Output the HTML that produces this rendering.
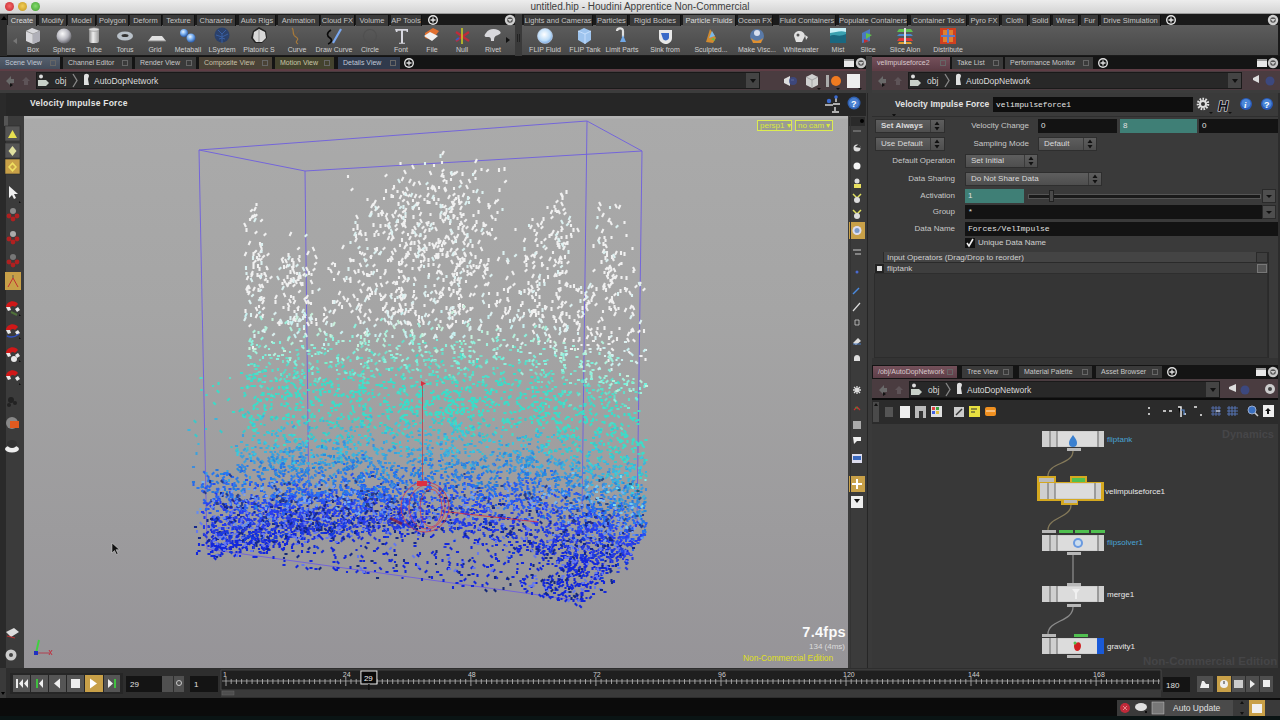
<!DOCTYPE html>
<html><head><meta charset="utf-8">
<style>
*{margin:0;padding:0;box-sizing:border-box}
html,body{width:1280px;height:720px;overflow:hidden;background:#0c0c0c;font-family:"Liberation Sans",sans-serif;}
.a{position:absolute}
svg{position:absolute}
#title{left:0;top:0;width:1280px;height:14px;background:linear-gradient(#ededed,#d4d4d4);border-bottom:1px solid #9a9a9a}
#title .t{left:0;width:1280px;top:1px;text-align:center;font-size:10px;color:#404040;line-height:12px}
.dot{width:9px;height:9px;border-radius:50%;top:2px}
.stab{top:15px;height:11px;background:#3a3a3a;color:#c4c4c4;font-size:7.5px;line-height:11px;text-align:center;white-space:nowrap;overflow:hidden;border-right:1px solid #111}
.stab.on{background:#555;color:#dcdcdc;height:11px}
.shelf{top:25px;height:30px;background:linear-gradient(#5c5c5c,#484848)}
.lbl{position:absolute;font-size:7px;color:#d0d0d0;top:45px;text-align:center;white-space:nowrap;width:50px;line-height:9px}
.ptrow{height:14px;background:#141414}
.ptab{height:12px;font-size:7px;line-height:12px;color:#c6c6c6;padding-left:5px;white-space:nowrap;overflow:hidden}
.ptab i{position:absolute;right:4px;top:3px;width:6px;height:6px;border:1px solid #666;font-style:normal}
.pathbar{height:19px;background:#4a3c40}
.pfield{background:#282828;border:1px solid #1a1a1a;color:#d8d8d8;font-size:8.5px;line-height:15px}
.lab{position:absolute;font-size:8px;color:#c8c8c8;text-align:right;line-height:14px;white-space:nowrap}
.btn{position:absolute;height:14px;background:linear-gradient(#5e5e5e,#4e4e4e);border:1px solid #2e2e2e;color:#dadada;font-size:8px;line-height:12px;padding-left:5px;white-space:nowrap}
.fld{position:absolute;height:14px;background:#131313;color:#e0e0e0;font-size:8px;line-height:14px;padding-left:3px;white-space:nowrap}
.teal{background:#3f7f76}
.mono{font-family:"Liberation Mono",monospace}
</style></head><body>
<!-- Title bar -->
<div id="title" class="a"><div class="t a">untitled.hip - Houdini Apprentice Non-Commercial</div>
<div class="a dot" style="left:5px;background:radial-gradient(circle at 50% 45%,#f56b6b,#c02028)"></div>
<div class="a dot" style="left:18px;background:radial-gradient(circle at 50% 45%,#f2cf58,#c0921a)"></div>
<div class="a dot" style="left:31px;background:radial-gradient(circle at 50% 45%,#86dc6e,#3c9a2c)"></div>
</div>
<div class="a" style="left:0;top:14px;width:1280px;height:42px;background:#1a1a1a"></div>
<div class="a" style="left:0;top:14px;width:7px;height:42px;background:#2c2c2c"></div>
<div class="a" style="left:1px;top:16px;width:0;height:0;border-left:3px solid transparent;border-right:3px solid transparent;border-bottom:4px solid #000"></div>
<div class="a shelf" style="left:7px;width:508px;"></div>
<div class="a" style="left:515px;top:14px;width:7px;height:42px;background:#3a3a3a"></div>
<div class="a" style="left:517px;top:34px;width:1px;height:8px;background:#222"></div>
<div class="a" style="left:519px;top:34px;width:1px;height:8px;background:#222"></div>
<div class="a shelf" style="left:522px;width:756px;"></div>
<div class="a" style="left:872px;top:358px;width:408px;height:7px;background:#333"></div>
<div class="a ptrow" style="left:872px;top:365px;width:408px"></div>
<div class="a pathbar" style="left:872px;top:379px;width:408px"></div>
<div class="a" style="left:872px;top:400px;width:408px;height:24px;background:#2b2b2b"></div>
<div class="a" style="left:872px;top:424px;width:408px;height:244px;background:#383838"></div>
<div class="a stab on" style="left:8px;width:29px">Create</div>
<div class="a stab" style="left:39px;width:28px">Modify</div>
<div class="a stab" style="left:68px;width:28px">Model</div>
<div class="a stab" style="left:97px;width:32px">Polygon</div>
<div class="a stab" style="left:130px;width:32px">Deform</div>
<div class="a stab" style="left:163px;width:32px">Texture</div>
<div class="a stab" style="left:197px;width:39px">Character</div>
<div class="a stab" style="left:239px;width:37px">Auto Rigs</div>
<div class="a stab" style="left:278px;width:42px">Animation</div>
<div class="a stab" style="left:321px;width:34px">Cloud FX</div>
<div class="a stab" style="left:356px;width:33px">Volume</div>
<div class="a stab" style="left:391px;width:31px">AP Tools</div>
<div class="a stab" style="left:524px;width:69px">Lights and Cameras</div>
<div class="a stab" style="left:596px;width:32px">Particles</div>
<div class="a stab" style="left:630px;width:51px">Rigid Bodies</div>
<div class="a stab on" style="left:683px;width:53px">Particle Fluids</div>
<div class="a stab" style="left:738px;width:35px">Ocean FX</div>
<div class="a stab" style="left:779px;width:57px">Fluid Containers</div>
<div class="a stab" style="left:839px;width:69px">Populate Containers</div>
<div class="a stab" style="left:911px;width:56px">Container Tools</div>
<div class="a stab" style="left:969px;width:31px">Pyro FX</div>
<div class="a stab" style="left:1002px;width:26px">Cloth</div>
<div class="a stab" style="left:1030px;width:21px">Solid</div>
<div class="a stab" style="left:1053px;width:26px">Wires</div>
<div class="a stab" style="left:1081px;width:18px">Fur</div>
<div class="a stab" style="left:1101px;width:60px">Drive Simulation</div>
<svg style="left:427px;top:14px" width="12" height="12" viewBox="0 0 12 12"><circle cx="6" cy="6" r="5" fill="#e8e8e8"/><circle cx="6" cy="6" r="3.6" fill="#1a1a1a"/><path d="M6 3.5v5M3.5 6h5" stroke="#e8e8e8" stroke-width="1.3"/></svg>
<svg style="left:504px;top:14px" width="12" height="12" viewBox="0 0 12 12"><circle cx="6" cy="6" r="5.2" fill="#cfcfcf"/><circle cx="6" cy="6" r="2.8" fill="#555"/><path d="M3.5 5h5l-2.5 3z" fill="#cfcfcf"/></svg>
<svg style="left:1165px;top:14px" width="12" height="12" viewBox="0 0 12 12"><circle cx="6" cy="6" r="5" fill="#e8e8e8"/><circle cx="6" cy="6" r="3.6" fill="#1a1a1a"/><path d="M6 3.5v5M3.5 6h5" stroke="#e8e8e8" stroke-width="1.3"/></svg>
<svg style="left:1267px;top:14px" width="12" height="12" viewBox="0 0 12 12"><circle cx="6" cy="6" r="5.2" fill="#cfcfcf"/><circle cx="6" cy="6" r="2.8" fill="#555"/><path d="M3.5 5h5l-2.5 3z" fill="#cfcfcf"/></svg>
<svg style="left:0;top:24px" width="1280" height="32" viewBox="0 24 1280 32">
<defs>
<radialGradient id="gsph" cx="40%" cy="35%" r="65%"><stop offset="0" stop-color="#fafafa"/><stop offset="0.6" stop-color="#b8b8c0"/><stop offset="1" stop-color="#6a6a70"/></radialGradient>
<radialGradient id="gblu" cx="40%" cy="35%" r="65%"><stop offset="0" stop-color="#e8f4ff"/><stop offset="0.5" stop-color="#7ab0f0"/><stop offset="1" stop-color="#2a5aa8"/></radialGradient>
<radialGradient id="gflip" cx="45%" cy="40%" r="60%"><stop offset="0" stop-color="#ffffff"/><stop offset="0.7" stop-color="#bcdcf8"/><stop offset="1" stop-color="#7aa8e0"/></radialGradient>
<linearGradient id="gcyl" x1="0" x2="1"><stop offset="0" stop-color="#888"/><stop offset="0.4" stop-color="#eee"/><stop offset="1" stop-color="#999"/></linearGradient>
</defs>
<path d="M17 38l-4 3 4 3z" fill="#777"/>
<!-- box -->
<path d="M26 31l6-3 8 3v10l-7 3-7-3z" fill="#d8d8dc"/><path d="M26 31l7 3 7-3" stroke="#9a9a9a" fill="none"/><path d="M33 34v10" stroke="#aaa"/><path d="M33 34l7-3v10l-7 3z" fill="#b0b0b8"/>
<!-- sphere -->
<circle cx="64" cy="36" r="7.5" fill="url(#gsph)"/>
<!-- tube -->
<rect x="89" y="29" width="10" height="14" rx="2" fill="url(#gcyl)"/><ellipse cx="94" cy="29.5" rx="5" ry="1.8" fill="#ddd" stroke="#888" stroke-width=".6"/>
<!-- torus -->
<ellipse cx="125" cy="36" rx="8" ry="4.5" fill="#b8c0c8"/><ellipse cx="125" cy="35.5" rx="3.5" ry="1.6" fill="#333"/>
<!-- grid -->
<path d="M148 41l4-5h10l4 5z" fill="#e0e0e0"/><path d="M148 41h18" stroke="#888"/>
<!-- metaball -->
<circle cx="184" cy="33" r="4" fill="url(#gblu)"/><circle cx="191" cy="38" r="4.5" fill="url(#gblu)"/>
<!-- lsystem -->
<circle cx="222" cy="35" r="7.5" fill="#203c70" opacity=".8"/><path d="M222 43v-9M218 30l4 4 4-4M216 35l6 2 6-3M219 39l3-1 3 1" stroke="#3a62a8" fill="none" stroke-width=".9"/>
<!-- platonic -->
<path d="M253 31l6-4 7 4 1 7-5 5h-7l-4-5z" fill="#222"/><path d="M254 32l5-3 6 3 1 6-4 4h-6l-3-4z" fill="#d8d8d8"/><path d="M259 29v13" stroke="#999"/>
<!-- curve -->
<path d="M292 28c3 3 -1 6 4 9s-3 4 2 7" stroke="#a87a3a" fill="none" stroke-width="1.2"/><path d="M299 30l-4 6" stroke="#6a5a4a"/>
<!-- draw curve -->
<path d="M331 30c-5 3-4 6-1 8s1 5-2 6" stroke="#0a0a0a" stroke-width="1.6" fill="none"/><path d="M333 43l8-14" stroke="#7aa8f0" stroke-width="2.2"/>
<!-- circle -->
<circle cx="370" cy="36" r="6.5" fill="none" stroke="#505050" stroke-width="1.2"/>
<!-- font -->
<path d="M395 29h13v3h-1.5v-1.2h-3.5v12h2v1h-6v-1h2v-12h-3.5v1.2h-1.5z" fill="#d8d8e0"/>
<!-- file -->
<path d="M425 33l8-5 6 3-7 9-7-2z" fill="#e07030"/><path d="M424 36l8 5 6-5-8-4z" fill="#f0f0f0"/>
<!-- null -->
<path d="M456 32l13 9M456 41l13-9" stroke="#c02a3a" stroke-width="2.2"/><path d="M462 28v16" stroke="#d0d020" stroke-width="1.5"/><path d="M456 40l3-2" stroke="#3a5ac0" stroke-width="2"/>
<!-- rivet -->
<path d="M486 33c2-4 8-5 12-3s3 4 0 5c-3 1-4 2-4 6h-3c0-4-1-4-4-4s-3-2-1-4z" fill="#d8d8dc"/>
<path d="M506 37l4 3-4 3z" fill="#111"/>
<!-- right shelf -->
<circle cx="545" cy="36" r="7.5" fill="url(#gflip)" stroke="#c8d8f0" stroke-width=".6"/>
<path d="M578 31l6-3 7 3v9l-6 4-7-4z" fill="#9ec4ee"/><path d="M578 31l7 3 6-3M585 34v10" stroke="#d0e4ff" stroke-width=".8" fill="none"/>
<path d="M617 31c0-3 6-4 6 0v6" stroke="#e0e0e0" stroke-width="2.2" fill="none"/><path d="M623 35l-3 7h6z" fill="#70a8e8"/>
<path d="M659 30h13v8c0 4-4 6-6 6s-7-2-7-6z" fill="#e8e8e8"/><path d="M661 33h8v5c-1 3-5 3-6 1z" fill="#3a6ac8"/>
<path d="M706 42l4-13 6 9-3 5z" fill="#d08a30"/><path d="M709 38l3-7 3 5z" fill="#7ab8e8"/><path d="M711 39l3-1 1 3z" fill="#60c040"/>
<circle cx="757" cy="36" r="7" fill="#5a7aa8"/><path d="M751 38c3 3 8 4 12 0l-2 5h-8z" fill="#e09030"/><circle cx="757" cy="33" r="3" fill="#d8e0f0"/>
<path d="M794 36c0-6 10-7 11 0l-3 6h-6z" fill="#e0e0e0"/><path d="M805 35l3 2-2 3z" fill="#e0e0e0"/><circle cx="798" cy="35" r="1.5" fill="#555"/>
<rect x="830" y="28" width="16" height="15" fill="#3aa0b0"/><path d="M830 36c4-3 8 2 16-2v9h-16z" fill="#1a6880"/><path d="M830 28h16v4c-5-2-10 0-16 1z" fill="#c8f0f8"/>
<path d="M862 33l8-4v12l-8 2z" fill="#4a78c0"/><path d="M866 33l6 2-6 4z" fill="#60c050"/><path d="M864 39l5 2-5 2z" fill="#c03030"/>
<path d="M899 29h12l2 3h-16z" fill="#60c050"/><path d="M899 34h12l2 2h-16z" fill="#4a8ad0"/><path d="M899 38h12l2 3h-16z" fill="#e03a3a"/><path d="M899 42h12l1 2h-14z" fill="#e0a030"/><path d="M905 28v16" stroke="#ddd" stroke-width="2"/>
<rect x="940" y="28" width="16" height="16" fill="#d04020"/><rect x="943" y="30" width="10" height="12" fill="#e08030"/><path d="M948 29v14M941 36h14" stroke="#5a7ac8" stroke-width="2"/>
</svg>
<div class="lbl" style="left:8px">Box</div>
<div class="lbl" style="left:39px">Sphere</div>
<div class="lbl" style="left:69px">Tube</div>
<div class="lbl" style="left:100px">Torus</div>
<div class="lbl" style="left:130px">Grid</div>
<div class="lbl" style="left:163px">Metaball</div>
<div class="lbl" style="left:197px">LSystem</div>
<div class="lbl" style="left:234px">Platonic S</div>
<div class="lbl" style="left:272px">Curve</div>
<div class="lbl" style="left:309px">Draw Curve</div>
<div class="lbl" style="left:345px">Circle</div>
<div class="lbl" style="left:376px">Font</div>
<div class="lbl" style="left:407px">File</div>
<div class="lbl" style="left:437px">Null</div>
<div class="lbl" style="left:468px">Rivet</div>
<div class="lbl" style="left:520px">FLIP Fluid</div>
<div class="lbl" style="left:560px">FLIP Tank</div>
<div class="lbl" style="left:597px">Limit Parts</div>
<div class="lbl" style="left:640px">Sink from</div>
<div class="lbl" style="left:686px">Sculpted...</div>
<div class="lbl" style="left:732px">Make Visc...</div>
<div class="lbl" style="left:776px">Whitewater</div>
<div class="lbl" style="left:813px">Mist</div>
<div class="lbl" style="left:843px">Slice</div>
<div class="lbl" style="left:880px">Slice Alon</div>
<div class="lbl" style="left:923px">Distribute</div>
<!-- pane tabs row -->
<div class="a ptrow" style="left:0;top:56px;width:866px"></div>
<div class="a ptrow" style="left:872px;top:56px;width:408px"></div>
<div class="a ptab" style="left:0px;top:57px;width:60px;background:linear-gradient(#56606e,#434c5a);color:#c0c8d4">Scene View<i></i></div>
<div class="a ptab" style="left:63px;top:57px;width:69px;background:#3a3a3a;color:#c8c8c8">Channel Editor<i></i></div>
<div class="a ptab" style="left:135px;top:57px;width:61px;background:#3a3a3a;color:#c8c8c8">Render View<i></i></div>
<div class="a ptab" style="left:199px;top:57px;width:73px;background:#4a4236;color:#c8c0a8">Composite View<i></i></div>
<div class="a ptab" style="left:275px;top:57px;width:59px;background:#44432e;color:#c8c8a8">Motion View<i></i></div>
<div class="a ptab" style="left:338px;top:57px;width:62px;background:#303a4c;color:#c0c8d8">Details View<i></i></div>
<svg style="left:403px;top:57px" width="12" height="12" viewBox="0 0 12 12"><circle cx="6" cy="6" r="5" fill="#e0e0e0"/><circle cx="6" cy="6" r="3.6" fill="#141414"/><path d="M6 3.5v5M3.5 6h5" stroke="#e0e0e0" stroke-width="1.3"/></svg>
<div class="a" style="left:844px;top:59px;width:10px;height:8px;background:#e8e8e8;border-top:2px solid #999"></div>
<svg style="left:855px;top:57px" width="12" height="12" viewBox="0 0 12 12"><circle cx="6" cy="6" r="5.2" fill="#c8c8c8"/><circle cx="6" cy="6" r="2.8" fill="#555"/><path d="M3.5 5h5l-2.5 3z" fill="#c8c8c8"/></svg>
<div class="a ptab" style="left:872px;top:57px;width:78px;background:linear-gradient(#74505a,#5e3e48);color:#d8c8cc">velimpulseforce2<i></i></div>
<div class="a ptab" style="left:952px;top:57px;width:51px;background:#3a3a3a;color:#c8c8c8">Take List<i></i></div>
<div class="a ptab" style="left:1005px;top:57px;width:88px;background:#3a3a3a;color:#c8c8c8">Performance Monitor<i></i></div>
<svg style="left:1097px;top:57px" width="12" height="12" viewBox="0 0 12 12"><circle cx="6" cy="6" r="5" fill="#e0e0e0"/><circle cx="6" cy="6" r="3.6" fill="#141414"/><path d="M6 3.5v5M3.5 6h5" stroke="#e0e0e0" stroke-width="1.3"/></svg>
<div class="a" style="left:1257px;top:59px;width:10px;height:8px;background:#e8e8e8;border-top:2px solid #999"></div>
<svg style="left:1267px;top:57px" width="12" height="12" viewBox="0 0 12 12"><circle cx="6" cy="6" r="5.2" fill="#c8c8c8"/><circle cx="6" cy="6" r="2.8" fill="#555"/><path d="M3.5 5h5l-2.5 3z" fill="#c8c8c8"/></svg>
<div class="a ptab" style="left:873px;top:366px;width:84px;background:linear-gradient(#74505a,#5e3e48);color:#d8c8cc">/obj/AutoDopNetwork<i></i></div>
<div class="a ptab" style="left:962px;top:366px;width:51px;background:#3a3a3a;color:#c8c8c8">Tree View<i></i></div>
<div class="a ptab" style="left:1019px;top:366px;width:73px;background:#3a3a3a;color:#c8c8c8">Material Palette<i></i></div>
<div class="a ptab" style="left:1096px;top:366px;width:66px;background:#3a3a3a;color:#c8c8c8">Asset Browser<i></i></div>
<svg style="left:1166px;top:366px" width="12" height="12" viewBox="0 0 12 12"><circle cx="6" cy="6" r="5" fill="#e0e0e0"/><circle cx="6" cy="6" r="3.6" fill="#141414"/><path d="M6 3.5v5M3.5 6h5" stroke="#e0e0e0" stroke-width="1.3"/></svg>
<div class="a" style="left:1256px;top:368px;width:10px;height:8px;background:#e8e8e8;border-top:2px solid #999"></div>
<svg style="left:1267px;top:366px" width="12" height="12" viewBox="0 0 12 12"><circle cx="6" cy="6" r="5.2" fill="#c8c8c8"/><circle cx="6" cy="6" r="2.8" fill="#555"/><path d="M3.5 5h5l-2.5 3z" fill="#c8c8c8"/></svg>
<div class="a" style="left:0;top:69px;width:866px;height:2px;background:#5e3d45"></div>
<div class="a" style="left:872px;top:69px;width:408px;height:2px;background:#5e3d45"></div>
<div class="a pathbar" style="left:0;top:71px;width:866px"></div>
<div class="a pathbar" style="left:872px;top:71px;width:408px"></div>
<div class="a" style="left:0;top:90px;width:866px;height:3px;background:#3c3c3c"></div>
<div class="a" style="left:872px;top:90px;width:408px;height:3px;background:#3c3c3c"></div>
<div class="a pfield" style="left:36px;top:72px;width:724px;height:17px"></div>
<svg style="left:35px;top:72px" width="150" height="17" viewBox="0 0 150 17"><circle cx="6" cy="4.5" r="2" fill="#ddd"/><path d="M3 8h8l3 3-3 3H3z" fill="#c8d0c8"/><text x="20" y="12" font-size="8.5" fill="#dcdcdc" font-family="Liberation Sans">obj</text><path d="M38 2l4 6.5-4 6.5" stroke="#888" fill="none" stroke-width="1.3"/><path d="M49 4c0-3 5-3 5 0l-1 3 1 6h-5l0-6z" fill="#e0e0e0"/><text x="59" y="12" font-size="8.5" fill="#dcdcdc" font-family="Liberation Sans">AutoDopNetwork</text></svg>
<div class="a" style="left:746px;top:73px;width:13px;height:15px;background:#444"></div>
<div class="a" style="left:750px;top:79px;width:0;height:0;border-left:3px solid transparent;border-right:3px solid transparent;border-top:4px solid #111"></div>
<svg style="left:2px;top:72px" width="32" height="17" viewBox="0 0 32 17"><path d="M4 9l5-5v3h3v4H9v3z" fill="#6a6a6a"/><path d="M8 11l3 2-3 2z" fill="#111"/><path d="M24 5l4 4h-2v4h-4V9h-2z" fill="#5e5458" /></svg>
<div class="a pfield" style="left:908px;top:72px;width:334px;height:17px"></div>
<svg style="left:907px;top:72px" width="150" height="17" viewBox="0 0 150 17"><circle cx="6" cy="4.5" r="2" fill="#ddd"/><path d="M3 8h8l3 3-3 3H3z" fill="#c8d0c8"/><text x="20" y="12" font-size="8.5" fill="#dcdcdc" font-family="Liberation Sans">obj</text><path d="M38 2l4 6.5-4 6.5" stroke="#888" fill="none" stroke-width="1.3"/><path d="M49 4c0-3 5-3 5 0l-1 3 1 6h-5l0-6z" fill="#e0e0e0"/><text x="59" y="12" font-size="8.5" fill="#dcdcdc" font-family="Liberation Sans">AutoDopNetwork</text></svg>
<div class="a" style="left:1228px;top:73px;width:13px;height:15px;background:#444"></div>
<div class="a" style="left:1232px;top:79px;width:0;height:0;border-left:3px solid transparent;border-right:3px solid transparent;border-top:4px solid #111"></div>
<svg style="left:874px;top:72px" width="32" height="17" viewBox="0 0 32 17"><path d="M4 9l5-5v3h3v4H9v3z" fill="#6a6a6a"/><path d="M8 11l3 2-3 2z" fill="#111"/><path d="M24 5l4 4h-2v4h-4V9h-2z" fill="#5e5458" /></svg>
<div class="a pfield" style="left:909px;top:381px;width:311px;height:17px"></div>
<svg style="left:908px;top:381px" width="150" height="17" viewBox="0 0 150 17"><circle cx="6" cy="4.5" r="2" fill="#ddd"/><path d="M3 8h8l3 3-3 3H3z" fill="#c8d0c8"/><text x="20" y="12" font-size="8.5" fill="#dcdcdc" font-family="Liberation Sans">obj</text><path d="M38 2l4 6.5-4 6.5" stroke="#888" fill="none" stroke-width="1.3"/><path d="M49 4c0-3 5-3 5 0l-1 3 1 6h-5l0-6z" fill="#e0e0e0"/><text x="59" y="12" font-size="8.5" fill="#dcdcdc" font-family="Liberation Sans">AutoDopNetwork</text></svg>
<div class="a" style="left:1206px;top:382px;width:13px;height:15px;background:#444"></div>
<div class="a" style="left:1210px;top:388px;width:0;height:0;border-left:3px solid transparent;border-right:3px solid transparent;border-top:4px solid #111"></div>
<svg style="left:875px;top:381px" width="32" height="17" viewBox="0 0 32 17"><path d="M4 9l5-5v3h3v4H9v3z" fill="#6a6a6a"/><path d="M8 11l3 2-3 2z" fill="#111"/><path d="M24 5l4 4h-2v4h-4V9h-2z" fill="#5e5458" /></svg>
<svg style="left:780px;top:72px" width="86" height="20" viewBox="780 72 86 20"><path d="M784 79l6-3v10l-6-3z" fill="#ddd"/><path d="M791 80h3" stroke="#ddd"/><circle cx="793" cy="81" r="4" fill="#3a4a8a" opacity=".8"/><path d="M806 77l6-3 6 3v8l-6 3-6-3z" fill="#d0d0d0"/><path d="M806 77l6 3 6-3M812 80v8" stroke="#999" fill="none" stroke-width=".8"/><path d="M817 88l2 2 2-2z" fill="#111"/><rect x="826" y="75" width="3" height="12" fill="#aaa"/><circle cx="836" cy="81" r="5" fill="#f07a20"/><path d="M836 88l2 2 2-2z" fill="#111"/><rect x="847" y="74" width="13" height="14" fill="#eee"/><path d="M858 88l2 2 2-2z" fill="#111"/></svg>
<svg style="left:1250px;top:72px" width="30" height="20" viewBox="1250 72 30 20"><path d="M1253 78l6-3v8l-6-3z" fill="#ddd"/><circle cx="1270" cy="81" r="4.5" fill="#3a4a8a" opacity=".85"/></svg>
<svg style="left:1224px;top:381px" width="56" height="18" viewBox="1224 381 56 18"><path d="M1229 387l7-3v8l-7-3z" fill="#ddd"/><circle cx="1245" cy="390" r="4.5" fill="#3a4a8a" opacity=".85"/><circle cx="1270" cy="389" r="5" fill="#ccc"/><circle cx="1270" cy="389" r="2" fill="#444"/></svg>
<!-- viewport header -->
<div class="a" style="left:6px;top:93px;width:860px;height:23px;background:#262626"></div>
<div class="a" style="left:30px;top:97px;font-size:8.5px;font-weight:bold;color:#e4e4e4;line-height:13px;letter-spacing:.25px">Velocity Impulse Force</div>
<!-- viewport -->
<div class="a" id="vp" style="left:24px;top:116px;width:824px;height:552px;background:linear-gradient(#b4b4b4 0px,#b4b4b4 2px,#aaaaaa 3px,#a5a5a5 35%,#9c9b9d 75%,#969498 100%)"></div>
<svg style="left:24px;top:116px" width="824" height="552" viewBox="24 116 824 552">
<g stroke="#6e5ee0" stroke-width="1" fill="none" opacity=".9"><path d="M199 150L587 121L642 151L305 171Z"/><path d="M199 150L207 549M305 171L309 515M587 121L582 512M642 151L637 522"/><path d="M207 549L575 600L637 522"/></g>
</svg>
<svg style="left:0;top:0;filter:blur(0.45px)" width="1280" height="720" viewBox="0 0 1280 720"><g fill="none" stroke-width="2.1" stroke-linecap="square"><path stroke="#f0f0f0" d="M443.5 152l-1 2M476.5 160l-1 2M442 162v1M400.5 163v1M434 165v1M412.5 166l1 2M504.5 168v2M481.5 169v1M499 169v2M404.5 171l1 2M442.5 171l1-1M475.5 171l-1 2M487 171l1-1M430 172l1 2M451 173l1 2M456 173l1-1M462.5 173v2M442.5 174l-1 2M453.5 174l1-1M454.5 174l1-1M348 176v1M385.5 176l1-1M443.5 176v1M403 178l-1 2M475.5 178v1M451 179v1M410.5 180l-1 2M469 180l1 2M443.5 181l1-1M446.5 181v2M460.5 181l1 2M419 182l1 2M505 182l1-1M414.5 183l-1 2M394 186v1M432.5 186l-1 2M466.5 186l1 2M434 187l1 2M439 187v1M406.5 188l1 2M428 188v1M445 188l1 2M454 188v1M393 189l1-1M432.5 189l1-1M434.5 189l1 2M444.5 189l1 2M499.5 189v2M351.5 190l1-1M386 190v2M397.5 191v1M473.5 191v1M566.5 191v2M403 192l1 2M405.5 193l1 2M428.5 194l-1 2M464 194l-1 2M561 194l1 2M561.5 194l1 2M391.5 195v2M416 195l-1 2M453.5 195l1-1M393 196v1M401 196l-1 2M408.5 196l1-1M449.5 196l-1 2M458.5 196v2M419.5 197l1-1M562.5 197v2M384 198v1M434 198v2M456 198v1M479 198l-1 2M367.5 199v1M424.5 199v1M438.5 199v1M468 199l1-1M413 200v1M454.5 200l1-1M459 200v2M478.5 200l1 2M375.5 201l-1 2M403 201l1-1M427.5 201v2M496 201l-1 2M497 201l1-1M407.5 202l1 2M429.5 202v1M452 202l1 2M453.5 202v1M459.5 202v2M556.5 202l1-1M398.5 203v2M417 203l-1 2M418.5 203l-1 2M436.5 203v1M460.5 203l1-1M561.5 203l1 2M599.5 203l1 2M256.5 204v1M373.5 204v1M454.5 204l-1 2M454.5 204l-1 2M488.5 204v2M372.5 205l-1 2M442.5 205v2M615.5 205l1 2M490 206l-1 2M554.5 206v1M620 206l-1 2M414 207l-1 2M444.5 207l1-1M451.5 207l1 2M461.5 207l-1 2M547.5 207v1M255.5 208l-1 2M376.5 208l-1 2M377.5 208l1-1M419 208v1M598.5 208l1 2M406 209l-1 2M446.5 209v2M555.5 209v2M451.5 210v2M563.5 210l1-1M251 211l1-1M382 211l1 2M396 211l-1 2M478.5 211v2M552 211l-1 2M557 211v1M558.5 211l1 2M371.5 212l-1 2M403 212l1-1M450 212l1-1M497.5 212v1M381 213l1 2M421 213l-1 2M446 213l-1 2M460.5 213v1M378.5 214v2M387 214l-1 2M430.5 214v1M443.5 214l1-1M463.5 214v1M564.5 214l1-1M603.5 214l-1 2M254.5 215l-1 2M392.5 215l1 2M453.5 215v1M461.5 215v2M473.5 215v1M252.5 216l-1 2M255.5 216l1-1M356.5 216l1 2M398.5 216l1-1M401 216l1 2M405.5 216v1M413.5 216v2M440.5 216v2M454.5 216l-1 2M491.5 216l1 2M448.5 217v2M386.5 218l1 2M446 218l-1 2M457.5 218v1M543.5 218v2M551.5 218l1-1M250 219v1M495.5 219v1M532.5 219v1M609.5 219l-1 2M398 220v2M405 220v1M420.5 220l1 2M442.5 220l1 2M261 221l1-1M404.5 221l-1 2M465 221l1-1M476.5 221v2M404.5 222v1M428.5 222v1M450 222v2M461 222l1 2M542 222l-1 2M569 222l1-1M610.5 222l1 2M624.5 222v1M417.5 223v1M426.5 223l1 2M433.5 223v1M483.5 223l1 2M244.5 224l1 2M373.5 224v2M388.5 224l1-1M402 224l1 2M460 224v1M483.5 224v2M537.5 224l1 2M357.5 225v1M380.5 225v2M385.5 225v1M404.5 225l1 2M418.5 225l1-1M475 225v1M571 225v1M388 226l1 2M395.5 226l1-1M485 226l1-1M531.5 226l-1 2M357.5 227v2M414.5 227l1 2M458.5 227v2M463 227l1-1M473.5 227l-1 2M561.5 227l1 2M422.5 228l1-1M435.5 228l1 2M466.5 228l1-1M541.5 228l1-1M246.5 229v2M353.5 229v1M429.5 229v2M462.5 229v2M492 229v1M515.5 229v1M573.5 229v2M577.5 229l1 2M396 230l1-1M412.5 230v1M425.5 230l-1 2M450.5 230l1 2M534.5 230v1M561.5 230v1M603 230l-1 2M360.5 231l-1 2M413 231v2M475.5 231l1-1M553.5 231l-1 2M376 232l1-1M463.5 232l1 2M487 232l1 2M558 232l-1 2M255.5 233l1-1M291 233l-1 2M360.5 233l1 2M365.5 233v2M383.5 233l1-1M402.5 233l1-1M412 233l1-1M489.5 233l1 2M537 233l-1 2M359 234l1-1M374.5 234v2M378.5 234v1M389.5 234l1-1M408 234v1M451.5 234l1-1M482.5 234l1-1M551.5 234v1M571 234v1M264.5 235l1-1M356 235v2M458 235l-1 2M466.5 235l1 2M549.5 235v2M626.5 235v1M392.5 236l1 2M415.5 236l1-1M419.5 236l1-1M425.5 236v1M446.5 236l-1 2M566.5 236v2M571.5 236v1M389 237l-1 2M410.5 237l-1 2M448 237l1 2M454.5 237l1 2M556.5 237l-1 2M561.5 237v1M604.5 237v1M611.5 237v1M392.5 238l-1 2M466 238l-1 2M599.5 238l-1 2M356.5 239l-1 2M366.5 239v1M402 239v2M424 239l1-1M438.5 239v2M495 239l1-1M525 239l-1 2M536.5 239l-1 2M558.5 239v2M456 240v2M544.5 240l1-1M605.5 240v1M418.5 241l1 2M440.5 241l-1 2M444 241l-1 2M452 241l1 2M479.5 241l-1 2M250 242l-1 2M411.5 242l-1 2M414.5 242v2M463.5 242l1 2M541.5 242v1M557.5 242v2M567.5 242v2M260 243v1M406 243l1 2M411.5 243v1M429.5 243v2M436.5 243l-1 2M438.5 243l1-1M453.5 243l1-1M603.5 243v2M432.5 244l1 2M444.5 244l1-1M468.5 244l-1 2M559 244l-1 2M563 244l1-1M565.5 244l1-1M400 245v1M424.5 245l1 2M442 245v1M472.5 245v2M537.5 245v1M593.5 245v2M605.5 245l1 2M260.5 246l1 2M343.5 246l-1 2M405.5 246l-1 2M418.5 246l1 2M435 246l-1 2M559.5 246v2M437.5 247l1-1M564.5 247l-1 2M313 248l1 2M377 248v2M410.5 248v2M426.5 248v2M481 248l1 2M632.5 248v1M298 249l1-1M375 249l1 2M383.5 249l1-1M394.5 249l1 2M418.5 249l1 2M440.5 249v2M443 249l-1 2M451.5 249l-1 2M545.5 249l1-1M261.5 250l-1 2M422 250l1-1M423.5 250l1 2M456.5 250l1-1M604 250l-1 2M419.5 251l1-1M255 252l1-1M308.5 252l-1 2M360 252v1M392 252l1 2M408 252l1 2M447.5 252v2M455 252l1 2M536.5 252v1M553 252v1M607 252v1M616.5 252l-1 2M621 252v2M246 253l-1 2M253.5 253v2M464.5 253l1 2M470.5 253l1 2M624.5 253v2M258.5 254l1 2M288.5 254v2M361.5 254l1-1M379 254l1-1M406.5 254l1 2M415 254l1 2M436.5 254v1M438.5 254l-1 2M442.5 254v1M447 254l1 2M464.5 254l1 2M535.5 254l-1 2M607 254v2M267.5 255l1-1M364 255l1-1M406.5 255l-1 2M421.5 255l1-1M446.5 255v2M453.5 255l1-1M533.5 255l1 2M299.5 256v1M315.5 256l1 2M371 256v2M406.5 256l-1 2M423.5 256l1 2M435 256l1 2M437 256l1 2M438.5 256v1M475.5 256v2M525.5 256l1 2M531.5 256l1-1M565 256v2M612 256v2M257 257v1M263 257l1-1M370.5 257l1-1M391.5 257l1 2M416.5 257l1-1M457.5 257l1 2M527 257l1 2M560.5 257l-1 2M560.5 257l1 2M605.5 257v2M462.5 258l1 2M499 258l-1 2M540.5 258l1-1M550.5 258l-1 2M612.5 258l1 2M282 259l1-1M292.5 259v1M298.5 259l1 2M350 259l1 2M390 259l1 2M402.5 259l-1 2M428.5 259v2M460.5 259v2M464.5 259v2M488.5 259v2M526 259v2M258 260l1-1M260.5 260l1-1M282 260l1 2M285.5 260l1 2M292 260v1M353.5 260v1M388 260v1M413.5 260v1M481 260v1M555 260l1 2M350.5 261l1-1M365.5 261l1-1M421 261v1M423.5 261l1-1M451.5 261l1 2M481 261l-1 2M507 261l1 2M559.5 261l-1 2M601.5 261v2M254.5 262l1-1M293.5 262v2M399 262v2M402.5 262l-1 2M460 262v2M524.5 262l1-1M561.5 262v1M253.5 263v1M293.5 263v2M461.5 263l1-1M533 263l1-1M542 263v2M567.5 263l1-1M621.5 263v1M315 264l1-1M332 264l1-1M335 264v2M360 264l1 2M399.5 264v1M428.5 264v2M433.5 264v1M457 264l1 2M459.5 264v2M526.5 264v2M258 265v2M287.5 265l-1 2M421.5 265l-1 2M439.5 265l-1 2M473.5 265v1M484 265l1 2M486.5 265l1-1M619 265l1-1M253.5 266v2M284 266v2M293.5 266v1M373.5 266l1-1M405.5 266l1-1M470.5 266l1 2M476.5 266v2M479.5 266l-1 2M534.5 266l-1 2M542 266l1-1M554 266l1-1M610 266l1 2M266.5 267l1 2M292 267l1 2M456.5 267v1M609.5 267l-1 2M259.5 268v2M267 268v1M292.5 268v1M306.5 268l1 2M328.5 268v1M412.5 268v1M418.5 268l1 2M487.5 268v2M547.5 268v1M633.5 268l1 2M456 269l-1 2M463 269l1 2M486 269l-1 2M606 269l1-1M614 269l1 2M313.5 270l1-1M330.5 270l1 2M358.5 270v2M377 270v1M385.5 270v1M398.5 270l1 2M290.5 271v2M293.5 271l1 2M354.5 271l1 2M401.5 271v1M438 271l-1 2M439.5 271l1 2M467.5 271v1M525.5 271l1-1M562.5 271v2M566.5 271l-1 2M593.5 271l1-1M610.5 271l1-1M633.5 271v1M252.5 272l-1 2M309 272v2M339 272l-1 2M363 272l1 2M371.5 272v2M385.5 272l-1 2M441 272l1 2M473.5 272l1-1M484.5 272l1 2M512.5 272l1 2M604.5 272v1M609 272l-1 2M264.5 273v1M297 273v1M457 273v2M470.5 273v1M559.5 273v2M560.5 273v1M565.5 273l1-1M608 273v2M252.5 274l-1 2M257.5 274v2M261.5 274v1M265 274l1 2M311.5 274v1M367 274v1M367.5 274v2M429 274v2M452.5 274l1 2M454.5 274l-1 2M471.5 274v1M555.5 274l-1 2M299.5 275l-1 2M303.5 275l1-1M369.5 275v1M467.5 275l1-1M533.5 275l-1 2M556.5 275v1M259.5 276l1 2M287.5 276v2M300.5 276v2M403.5 276l1 2M483 276l1 2M548 276v2M607 276l1 2M612.5 276l1-1M616.5 276l-1 2M248 277l-1 2M380.5 277v1M399 277v1M404.5 277l1 2M507.5 277l-1 2M539.5 277v2M615 277v1M621.5 277v1M626.5 277v2M270.5 278l1-1M293.5 278v2M414.5 278l1 2M458.5 278l-1 2M291 279l1 2M294 279l-1 2M298.5 279v1M334 279v1M344 279l1 2M349.5 279l1-1M408.5 279l-1 2M443.5 279v2M612.5 279l1-1M265 280l1-1M284 280l1 2M297.5 280l1-1M350.5 280v2M454.5 280v2M544 280v2M610.5 280v1M267.5 281v1M290.5 281v2M295.5 281l1 2M311 281l1 2M459.5 281v2M466 281v1M559.5 281v2M611.5 281l1 2M358.5 282l1-1M396.5 282l-1 2M397 282v2M403 282l1-1M528.5 282v2M536.5 282l1-1M282.5 283v1M289 283l-1 2M300.5 283l1 2M302.5 283v2M386.5 283l1-1M393 283l1-1M450.5 283l1-1M452.5 283l-1 2M488.5 283l-1 2M566.5 283l-1 2M611.5 283l-1 2M286.5 284l1 2M376 284l1 2M381 284l1 2M566 284l1 2M604.5 284l-1 2M639.5 284l1-1M259.5 285l1 2M262 285l1 2M362.5 285l1-1M434.5 285v1M485 285l1-1M513.5 285l1-1M537.5 285v2M566.5 285l1-1M574 285v2M608.5 285l1 2M248.5 286l1 2M293.5 286l1-1M531.5 286l1 2M570.5 286v1M247.5 287l-1 2M475.5 287l1-1M591.5 287l1-1M603.5 287l1-1M604.5 287l-1 2M635.5 287l1-1M248 288l-1 2M254.5 288l-1 2M368.5 288l-1 2M370 288l1 2M399 288v1M401.5 288l1 2M443.5 288l-1 2M449 288v1M509.5 288l1-1M560.5 288v2M596.5 288v2M625 288v1M258.5 289v2M401.5 289v1M449.5 289v1M459.5 289v2M504 289v1M508 289l1-1M528.5 289l1 2M558.5 289l1 2M576.5 289v1M579 289l-1 2M606 289v2M627 289l-1 2M247.5 290v2M360.5 290l1 2M397 290l-1 2M402 290l-1 2M453.5 290v2M459.5 290l1-1M508 290v2M524.5 290v2M531.5 290l1 2M538 290l1-1M620.5 290v2M643.5 290l1-1M312.5 291v2M414 291v1M435.5 291l1 2M519.5 291v2M249.5 292l-1 2M299 292l1-1M340 292l-1 2M372 292v2M375.5 292v2M440.5 292l-1 2M457 292v1M458.5 292l-1 2M529.5 292l-1 2M581.5 292v1M629.5 292l1 2M442 293l1 2M489 293v1M497.5 293v2M536 293v2M556.5 293v2M593.5 293l1 2M284 294l1 2M370 294v2M380 294l1 2M391.5 294v1M401.5 294l-1 2M451.5 294l-1 2M471 294l-1 2M353.5 295l1 2M385.5 295l-1 2M405.5 295l-1 2M414 295l-1 2M428 295v1M460.5 295l1 2M473.5 295l1-1M585.5 295l1 2M614.5 295l1-1M276.5 296l-1 2M291 296v1M307.5 296l-1 2M367.5 296l-1 2M399.5 296v1M405.5 296l-1 2M440.5 296l-1 2M441 296v1M532 296l1 2M539.5 296v2M593 296l-1 2M261.5 297v1M293.5 297v2M343.5 297l1 2M368 297l1 2M383.5 297l-1 2M532.5 297v1M557.5 297l1 2M559.5 297l-1 2M612 297v2M260 298l1 2M400.5 298l1 2M402.5 298v1M459 298v1M507.5 298v2M263 299l1-1M304.5 299l1-1M348 299l-1 2M357.5 299v1M381 299v1M395 299v2M415.5 299l1-1M507.5 299l1 2M606 299l1-1M289.5 300l1 2M430.5 300l1-1M500.5 300l-1 2M535 300v1M584 300l1-1M591.5 300v1M610.5 300l-1 2M611 300l1 2M263.5 301l-1 2M275.5 301v2M295 301l-1 2M305.5 301l1 2M308 301l1 2M333 301v2M437.5 301v1M497 301v2M552.5 301v1M588.5 301l1 2M612.5 301l1 2M336.5 302l1-1M437 302l1-1M522.5 302v2M562.5 302l-1 2M311 303v1M340 303l-1 2M386.5 303v1M412.5 303v1M539.5 303v2M565 303l1-1M587.5 303v1M288 304l1 2M349.5 304l1 2M359 304l-1 2M399.5 304l1 2M405.5 304v1M460 304v2M495.5 304l1 2M412 305l1-1M424.5 305v1M458.5 305v1M463 305v2M489 305v2M521 305v1M562.5 305l-1 2M586.5 305v1M595.5 305l1-1M259 306v1M342 306v2M360.5 306l1-1M385.5 306l-1 2M400 306l1 2M537.5 306v1M545 306v2M614.5 306v1M631.5 306l-1 2M283.5 307v1M412.5 307v1M446.5 307v2M452.5 307v2M459 307l1 2M464.5 307l-1 2M510 307v2M546.5 307l-1 2M582.5 307v2M609.5 307v2M633 307l1 2M256 308l1 2M288.5 308v2M297.5 308l1-1M324.5 308l1 2M360.5 308l-1 2M383 308v2M392.5 308l-1 2M393.5 308v1M470.5 308v2M505.5 308v2M551.5 308v2M558 308l1-1M586.5 308l1 2M615 308l1 2M618.5 308v1M263 309l1-1M298 309v1M401 309l-1 2M410.5 309v1M471.5 309l1-1M611 309v1M626 309l-1 2M245.5 310v2M359.5 310l1 2M369.5 310l1 2M399 310l-1 2M402.5 310l-1 2M433.5 310l-1 2M533.5 310v2M535.5 310v2M294.5 311v1M334 311l1-1M334.5 311l-1 2M408.5 311v1M415.5 311v1M454 311v1M455 311l1 2M509 311l-1 2M532 311v2M603 311v1M351.5 312l1-1M385.5 312l1-1M388 312v1M395.5 312l-1 2M405.5 312l-1 2M450.5 312l-1 2M458.5 312l1-1M458.5 312l1 2M466.5 312l1-1M505 312l1 2M538.5 312v2M562.5 312v2M578 312l1-1M393.5 313v1M415 313l1 2M448.5 313l1 2M524 313v1M561.5 313v2M566.5 313v2M615.5 313l-1 2M632.5 313l1 2M324 314v1M365.5 314l-1 2M531.5 314l-1 2M536 314v2M561.5 314l-1 2M257 315l-1 2M263 315l-1 2M304 315l1 2M542.5 315l1 2M542.5 315v2M578 315l1 2M262.5 316v1M419 316v2M428 316l1-1M503 316l-1 2M553.5 316v1M560.5 316l-1 2M569.5 316v2M294.5 317l-1 2M358 317l1 2M391.5 317v2M452.5 317v2M554.5 317v2M581.5 317l1-1M326 318l1-1M368.5 318l1 2M514.5 318l-1 2M520.5 318l-1 2M560.5 318v1M601.5 318l1 2M293.5 319v1M295.5 319v2M316 319v1M324.5 319l-1 2M376.5 320l1-1M418.5 320l1 2M422.5 320l1 2M556 320v2M561 320l1 2M574.5 320v1M280.5 321l1 2M360.5 321v2M440.5 321v1M456 321v1M463 321v2M288.5 322v2M311.5 322v1M388 322l1 2M400.5 322l1 2M407.5 322l1 2M408.5 322l-1 2M423.5 322v2M467.5 322l1-1M578 322l-1 2M598.5 322l1-1M278 323l1-1M279.5 323v2M307.5 323l1 2M316.5 323v2M410 323l1 2M576.5 323l1-1M418.5 324l1 2M452.5 324l-1 2M564.5 324l-1 2M579.5 324v2M447.5 325l1 2M481 325l-1 2M533.5 325l1-1M566 325l1 2M249.5 326l1-1M450.5 326l-1 2M497.5 326l1 2M587.5 327l1 2M604.5 327v2M304 328v1M437 328v1M567.5 328l-1 2M579 328l-1 2M597.5 328v1M619.5 328v1M565.5 329l-1 2M632.5 329l1 2M590.5 330l1-1M631.5 330l1-1M644 330v2M533 331l1 2M596.5 332l1 2M611.5 332v1M631 332l1-1M638.5 332l1-1M364.5 333l1-1M591 333l1 2M629 333l-1 2M498.5 334v1M601 334l-1 2M549 335l1 2M588 336l-1 2M609 337v2M579.5 338v1M617 338v2M565 339l-1 2M627.5 339l1 2M573.5 340v1M633.5 340l1 1M550.5 341v1M578.5 341l1-1M593 341h1M538.5 342l1-1M612.5 342l1-1M608.5 344h1M581.5 345h0M587.5 345h1M597.5 345l1 1M253 347v1M571 349h1M578 349h0M600.5 349v1M612 349l1 1M645 350h1M629 352l1 1M640.5 356h1M645.5 359v1M608.5 360v1"/><path stroke="#3cdcc8" d="M416.5 356l1-1M461 357v1M477 361v1M441.5 362l1-1M254.5 364l1 1M430.5 364h0M513 366h0M342.5 367l1-1M476.5 367l1-1M438.5 368h0M391.5 369v1M398 369l1 1M309 370v1M518.5 370l1 1M262.5 371v1M265 371h1M344.5 371h1M317.5 372h1M362.5 372l1-1M241 373h1M379.5 374l1 1M514 374h1M253 375l1-1M281.5 375l1 1M294 375l1-1M433.5 375h1M246.5 376l1 1M264.5 376h1M305 376h0M453 376l1 1M254.5 377l1 1M348.5 377v1M401.5 377l1-1M531.5 377h1M403 378v1M446 378l1-1M503.5 378l1 1M538.5 378v1M551.5 378v1M252.5 379l1-1M344 379h0M367.5 379h1M440.5 379l1 1M447.5 379h1M325 380l1-1M353.5 380h0M463.5 380l1 1M515.5 380h1M535.5 380v1M251 381h1M258.5 381l1-1M276 381h1M285.5 381h1M288 381h1M330.5 381l1 1M360 381h1M436.5 381h1M496 381h1M383.5 382h1M388.5 382h1M391.5 382h1M452.5 382v1M455.5 382l1-1M457.5 382v1M478.5 382h1M504.5 382l1 1M218.5 383v1M291.5 383h0M300.5 383h1M327 383h1M329 383l1-1M393.5 383h1M430.5 383v1M443 383h1M498 383l1-1M501.5 383l1 1M530.5 383h1M293.5 384l1 1M310.5 384v1M314.5 384l1 1M322 384v1M324.5 384l1 1M508 384h1M564 384h1M302.5 385h1M338.5 385v1M362.5 385h0M376.5 385h1M379.5 385l1 1M382 385v1M477.5 385v1M482.5 385l1-1M498.5 385h1M500.5 385h1M213 386h0M251.5 386h1M254 386h1M261.5 386h1M287.5 386v1M393.5 386v1M403 386h1M414.5 386l1-1M456 386h1M485.5 386l1-1M518 386l1-1M546.5 386l1 1M246.5 387l1-1M248.5 387h0M279 387v1M282.5 387l1 1M285.5 387h1M295 387l1 1M331.5 387h1M359.5 387v1M411.5 387l1-1M419.5 387h1M470 387l1 1M535.5 387l1 1M241.5 388h1M267.5 388l1 1M283 388l1 1M361 388l1-1M362.5 388l1-1M364.5 388h1M384.5 388h0M385.5 388h1M405 388v1M462 388v1M469.5 388h0M535.5 388h1M271.5 389l1-1M322 389h1M400 389h1M403.5 389h0M422.5 389l1 1M466 389v1M527.5 389h1M201.5 390h0M308 390h1M316.5 390h0M319.5 390l1 1M372.5 390h0M421.5 390h0M485.5 390h1M492.5 390h1M510.5 390h1M587 390v1M217.5 391l1 1M287.5 391v1M298 391v1M313.5 391v1M329 391h1M336.5 391h1M363 391l1 1M365.5 391h0M403.5 391l1 1M419.5 391h1M433.5 391v1M454 391h1M456.5 391v1M469.5 391l1 1M491 391v1M496.5 391v1M533 391v1M550.5 391h1M320.5 392v1M324.5 392h1M329 392h1M350.5 392v1M355 392h1M358 392l1-1M359 392l1-1M399.5 392l1-1M444 392h1M449.5 392h1M457.5 392l1 1M460.5 392h0M504 392h1M536.5 392h0M538.5 392h0M543.5 392h1M547.5 392l1-1M569 392h0M569.5 392l1 1M244.5 393h0M262.5 393h1M285.5 393h0M289.5 393l1 1M295.5 393l1 1M304 393l1 1M363.5 393h0M372.5 393v1M397.5 393l1-1M399.5 393l1 1M421 393h1M421.5 393h1M431 393h1M445.5 393l1-1M458 393l1 1M487 393l1-1M520.5 393l1 1M268 394h1M276 394h0M278.5 394h0M299.5 394h0M320 394l1 1M343.5 394v1M353.5 394h0M359.5 394l1 1M368 394l1-1M406.5 394l1 1M421 394h1M442 394l1-1M447.5 394h1M489.5 394h1M524.5 394h1M546.5 394h1M559 394h1M601.5 394l1-1M206.5 395h0M261.5 395h1M263.5 395h0M291.5 395v1M300 395h0M334.5 395l1-1M338.5 395v1M341.5 395v1M388.5 395h0M416.5 395l1-1M419 395h0M446.5 395h0M446.5 395v1M459.5 395v1M244.5 396l1-1M271 396h0M273.5 396l1 1M282 396v1M287.5 396h1M289 396l1-1M296.5 396v1M299 396h1M347 396l1 1M354 396h0M421.5 396h1M437.5 396l1 1M445.5 396h1M510.5 396v1M520.5 396l1-1M534.5 396h1M554 396h1M560.5 396l1-1M285 397l1 1M315.5 397h0M352.5 397h1M373.5 397h1M418.5 397h1M433.5 397h1M437.5 397l1-1M449.5 397h1M485 397h1M509 397v1M532.5 397l1-1M588.5 397v1M609.5 397h1M254.5 398l1-1M301.5 398l1 1M316 398v1M359.5 398v1M384.5 398h0M434 398h1M472 398h1M473.5 398h1M480 398v1M501.5 398v1M520.5 398h0M526 398h0M540.5 398h1M258 399v1M266 399l1 1M267.5 399h0M284.5 399h1M318 399l1 1M401 399l1 1M433.5 399h1M438.5 399h1M444.5 399l1 1M461.5 399l1 1M463.5 399h0M471.5 399h1M471.5 399l1-1M488.5 399h1M517 399l1-1M546 399h0M548 399l1 1M228 400l1-1M258.5 400l1 1M261 400v1M271.5 400h0M360.5 400l1-1M368.5 400l1-1M406.5 400h1M412 400v1M452.5 400l1 1M457 400l1-1M458.5 400h1M474 400h1M477.5 400v1M487.5 400h0M491.5 400h0M550 400h1M556 400l1-1M589.5 400v1M601 400h1M310.5 401h0M319 401h1M357 401h0M359.5 401h0M384 401v1M385.5 401l1 1M419.5 401v1M426.5 401h1M432 401h0M448.5 401l1-1M450.5 401h1M469 401h0M469.5 401h1M482.5 401h1M565.5 401l1-1M602 401h0M300.5 402l1 1M332.5 402l1 1M350.5 402l1-1M386.5 402h1M405 402h1M407.5 402h1M453 402h1M472 402h1M475.5 402h1M485 402h0M505.5 402v1M507.5 402h0M517 402h0M534.5 402h1M536.5 402h1M559 402h1M616.5 402v1M214 403l1 1M286.5 403h0M311 403l1-1M332.5 403l1-1M333.5 403l1 1M421.5 403h0M426.5 403h1M472 403l1 1M491.5 403l1 1M504.5 403v1M544.5 403v1M560.5 403v1M256.5 404l1-1M271.5 404v1M281.5 404v1M287 404h1M296.5 404h1M340 404h1M365.5 404v1M380.5 404v1M405 404v1M425.5 404h1M432 404h1M454.5 404h1M462 404h1M508.5 404v1M517.5 404h1M541 404l1-1M561 404l1-1M563.5 404h1M584.5 404h1M590.5 404l1-1M264.5 405l1 1M312 405h1M312.5 405h1M321 405h1M337 405h0M338 405l1 1M359.5 405v1M387.5 405h1M400 405l1-1M403.5 405v1M407.5 405l1-1M429 405h1M450.5 405l1-1M457 405l1 1M462.5 405h1M474.5 405l1 1M486.5 405h1M495.5 405l1-1M499 405h0M531.5 405l1-1M533 405v1M593.5 405l1 1M253.5 406l1-1M284.5 406h1M335 406h1M352.5 406h0M363 406l1 1M425.5 406h0M448 406l1-1M472.5 406h0M475.5 406l1 1M520 406l1 1M540 406h1M563.5 406v1M584.5 406l1-1M616 406h1M264.5 407v1M393.5 407h1M403 407h0M411.5 407l1 1M416 407l1-1M418.5 407h1M423.5 407v1M473.5 407l1-1M490 407h1M537.5 407h0M556.5 407v1M603.5 407l1 1M289.5 408l1 1M295.5 408l1-1M331 408h1M353 408v1M365 408v1M370 408l1 1M389.5 408v1M407 408v1M411.5 408h1M446.5 408h0M449.5 408h1M463.5 408h0M466.5 408h1M522.5 408v1M528 408l1-1M542.5 408l1-1M554.5 408l1 1M605.5 408h1M611.5 408h1M242.5 409v1M253.5 409l1-1M257.5 409h0M270.5 409l1-1M401.5 409h0M404.5 409h1M409.5 409l1 1M424.5 409h1M458 409v1M462 409v1M463 409h1M523 409h1M538.5 409h0M554.5 409h0M576.5 409l1 1M265 410h1M295.5 410h1M299.5 410h1M308.5 410h1M319 410v1M335.5 410h1M370.5 410v1M386.5 410h1M390.5 410v1M445.5 410l1 1M450.5 410h1M453 410h1M472 410l1-1M483 410v1M494.5 410v1M534.5 410h1M590 410l1-1M309.5 411h0M332 411h0M353.5 411l1 1M390.5 411v1M412.5 411v1M416.5 411h1M445.5 411l1-1M452 411v1M464 411v1M479 411v1M487.5 411h1M519.5 411l1-1M536 411h1M542.5 411l1-1M583.5 411h0M233 412h1M387.5 412h0M398.5 412l1-1M425.5 412h1M438.5 412v1M446 412h1M456.5 412l1 1M460 412l1-1M468 412h1M510.5 412l1 1M514.5 412h1M581.5 412h0M328.5 413h0M350.5 413l1 1M363.5 413h0M435.5 413l1-1M439.5 413l1-1M443 413v1M447.5 413h1M456 413l1-1M481.5 413v1M504.5 413h1M539.5 413l1-1M545.5 413h1M548.5 413l1 1M554.5 413h1M556.5 413v1M559.5 413h0M583 413l1 1M590.5 413l1 1M612 413v1M263.5 414l1-1M288.5 414v1M341.5 414v1M363 414h0M364 414v1M416.5 414l1-1M426 414l1 1M429.5 414l1-1M431.5 414v1M438.5 414h1M450.5 414l1 1M451.5 414h0M461.5 414h1M579 414l1-1M582.5 414h0M624.5 414v1M628.5 414h1M243 415v1M258 415h0M286.5 415h0M311.5 415l1-1M365.5 415h1M369.5 415h1M406 415h1M435.5 415h1M443.5 415h0M473.5 415v1M479 415l1 1M481 415h1M546 415v1M576 415h1M595.5 415l1-1M614.5 415v1M628.5 415h1M251.5 416v1M259.5 416h1M287.5 416h1M293 416h1M304.5 416l1 1M311.5 416h0M314.5 416v1M329.5 416l1-1M348.5 416v1M378.5 416h1M387.5 416h1M403.5 416l1-1M452 416h0M471 416v1M534 416l1 1M557.5 416l1-1M558 416l1 1M605 416l1 1M607 416h1M244 417h1M260.5 417v1M271.5 417h1M293 417h1M311.5 417h0M343.5 417h0M401.5 417l1-1M437.5 417h1M468.5 417h0M542.5 417h1M567.5 417h1M584.5 417h0M586 417v1M630.5 417v1M249.5 418l1 1M283.5 418h1M338.5 418h0M349 418v1M388 418l1 1M400.5 418h0M444 418h0M519.5 418h1M530 418l1-1M540.5 418h1M633.5 418h1M253.5 419v1M276.5 419l1-1M283 419h1M287.5 419h1M321.5 419l1-1M341.5 419h0M354.5 419l1 1M357.5 419l1-1M368 419h0M369.5 419h0M402 419h1M448.5 419h1M493.5 419v1M503 419h0M507.5 419v1M531.5 419h1M552 419l1-1M553 419h1M565.5 419l1-1M572 419v1M587 419h0M593 419v1M632 419l1 1M309 420v1M355.5 420h0M404.5 420h1M422.5 420v1M506.5 420h1M507.5 420h1M537.5 420h1M543 420h1M596.5 420h0M637.5 420h1M298.5 421h1M309.5 421h0M314.5 421h0M361 421h0M370.5 421l1-1M423 421h0M455.5 421h0M483.5 421h1M502.5 421l1-1M537.5 421l1 1M555.5 421l1 1M587 421v1M591.5 421h1M636 421h0M250.5 422l1 1M297.5 422l1 1M307 422h0M329.5 422h1M361.5 422l1 1M406 422h1M407 422l1-1M449.5 422l1 1M453.5 422h0M507 422l1-1M509 422l1 1M519.5 422h1M532 422v1M560.5 422l1 1M579.5 422l1-1M584.5 422l1 1M602.5 422h1M604.5 422v1M252.5 423l1 1M332.5 423h1M380.5 423h1M453.5 423v1M456 423v1M478.5 423h0M504 423l1-1M518 423h1M546.5 423l1-1M556.5 423l1-1M558 423h1M261 424h0M415 424h1M442 424h0M514.5 424h1M539 424l1-1M541 424v1M613.5 424h1M613.5 424h0M621.5 424l1 1M637.5 424h1M299.5 425h0M363.5 425h1M486.5 425l1 1M568 425v1M590.5 425l1-1M609.5 425v1M614.5 425l1 1M253.5 426h1M398.5 426l1-1M458 426l1-1M470 426h0M511.5 426v1M569.5 426v1M628.5 426h0M248.5 427v1M295.5 427v1M334.5 427l1-1M367.5 427h1M374.5 427l1 1M471 427l1-1M503 427h0M557 427l1 1M565.5 427l1 1M386.5 428l1 1M458.5 428l1 1M466 428h0M478.5 428l1-1M543.5 428h0M576.5 428l1 1M599 428h0M614 428h1M256.5 429h0M404.5 429h1M456 429h0M537 429v1M563 429l1-1M564.5 429v1M598.5 429l1 1M601.5 429v1M253 430l1 1M254.5 430l1 1M254.5 430l1 1M471.5 430h1M473.5 430l1-1M505.5 430h1M536.5 430v1M571 430h0M574 430v1M597.5 430h0M611 430h1M385.5 431h1M558 431l1-1M559.5 431h1M624.5 431l1 1M385.5 432v1M495 432l1 1M595 432l1 1M599.5 432v1M601 432h0M392.5 433h1M402.5 433l1 1M462.5 433h0M614.5 433l1-1M621.5 433l1 1M325.5 434l1 1M473.5 434l1 1M512.5 434v1M557.5 434v1M607 434l1 1M611.5 434l1-1M611.5 434l1-1M289.5 435h1M293.5 435h1M464.5 435l1 1M567.5 435l1 1M573 435h1M611.5 435l1 1M622 435l1-1M624.5 435l1-1M626.5 435l1 1M308.5 436l1 1M365 436h1M538.5 436v1M561.5 436l1 1M571.5 436v1M574.5 437h0M625 437h1M559 438h1M577.5 438l1-1M617.5 438h0M295.5 439h1M444.5 439h1M296.5 440h0M328 440h1M565.5 440l1-1M618.5 440h0M632.5 440l1-1M645.5 440h1M275.5 441l1-1M306.5 441h1M499.5 441h1M548.5 441h1M601.5 441h0M620 441l1-1M622.5 441h0M627.5 441v1M633 441l1-1M620 442h1M636.5 442l1 1M591 443h1M608.5 443v1M632.5 443v1M640 443l1-1M641 443h1M548.5 444v1M604 444v1M637.5 444h1M284 445h1M575 445l1-1M623.5 445l1 1M624.5 445l1 1M637.5 445h1M642.5 445h0M595 446l1 1M643 446l1 1M545.5 447h1M609.5 447h1M271.5 448l1 1M614.5 448l1-1M623 448l1-1M634.5 448h1M577 449h1M632 449h0M577.5 451l1-1M610.5 451h0M633.5 451v1M549 452v1M616 452h1M642.5 453h1M588.5 454h0M610 454h0M638.5 454h1M642.5 454l1-1M621 457h0M624 457l1 1M598 458h0M622.5 459l1 1M627 460l1-1M645.5 460h1M624.5 462h1M644.5 462h0M589.5 463l1 1M626 468h0M639 468l1 1M639.5 472l1 1M639.5 475l1-1M633.5 477h1M640 478h1M638 485v1"/><path stroke="#1428dc" d="M314 513v1M426.5 514h1M246.5 515l1 1M230 517l1 1M282 517l1 1M353.5 517l1 1M499.5 517l1 1M395.5 518l1-1M508 518v1M217.5 519l1 1M226.5 519h0M423.5 519h1M424.5 519h0M484.5 519h1M522 519v1M260 521h1M444.5 521h1M513 521l1 1M328 522l1-1M366.5 522l1-1M379.5 522h0M389 522l1-1M454 523h1M249 524h0M319.5 524h1M415 524h1M495.5 524h1M263.5 525l1 1M285.5 525l1 1M402.5 525l1-1M404 525v1M412.5 525h1M480 525l1-1M518.5 525h0M245.5 526h0M268 526h0M282.5 526h0M475 526v1M213 527h1M235.5 527l1 1M239.5 527v1M249.5 527l1-1M290.5 527h1M341.5 527l1-1M356.5 527h1M370.5 527h0M373.5 527l1-1M396.5 527h1M420 527v1M483 527h1M275.5 528l1-1M316.5 528l1-1M339.5 528v1M343.5 528l1-1M349.5 528v1M378.5 528l1-1M394 528v1M486.5 528l1 1M236 529l1 1M300.5 529h1M307.5 529h1M314 529h0M331.5 529h1M367.5 529l1 1M384.5 529l1 1M211 530l1-1M255.5 530h1M272.5 530l1-1M285.5 530h1M302.5 530h1M306.5 530l1 1M367.5 530l1 1M368.5 530h1M478.5 530h1M479 530h1M490.5 530h1M495 530h0M224.5 531l1 1M242 531l1 1M275 531h0M279 531v1M294.5 531l1-1M303.5 531h0M307.5 531h1M328 531v1M356 531h1M471.5 531v1M472 531v1M521.5 531h0M212 532h0M249 532h1M253 532h1M257.5 532h1M275 532l1 1M291.5 532h1M301.5 532v1M306.5 532h1M400 532v1M493 532l1-1M207 533l1-1M217 533l1 1M217.5 533l1 1M231.5 533h1M249.5 533v1M261.5 533h0M268.5 533h0M324 533h0M325.5 533h1M355.5 533l1 1M356.5 533l1 1M369 533h0M418.5 533l1 1M423.5 533v1M464.5 533v1M217 534l1-1M255.5 534h1M261.5 534h1M273 534h1M293.5 534h1M295.5 534h0M307.5 534h1M329.5 534h1M401.5 534h1M407.5 534h1M507.5 534h1M513.5 534h1M530 534h1M204 535h0M221 535h1M291.5 535v1M510.5 535h1M526 535l1-1M229.5 536l1 1M237 536l1-1M252 536l1-1M270 536h1M280.5 536l1 1M289.5 536l1-1M295.5 536h0M301 536h1M318 536l1-1M319.5 536l1 1M347.5 536l1-1M405 536h0M432.5 536l1-1M466.5 536h0M212 537l1-1M229.5 537l1-1M229.5 537h1M236.5 537h1M237.5 537l1-1M253.5 537l1 1M267.5 537l1 1M289 537h1M314.5 537v1M334 537l1-1M384 537h1M431 537h0M463.5 537l1-1M466.5 537h1M467.5 537l1 1M497 537l1 1M224.5 538v1M225.5 538v1M229.5 538h0M246.5 538h0M247 538h1M252.5 538h1M254.5 538v1M257.5 538l1 1M286.5 538l1-1M304.5 538v1M321.5 538l1 1M342.5 538l1-1M515.5 538h1M572.5 538l1 1M213.5 539l1 1M214.5 539l1-1M222.5 539h1M255.5 539v1M258 539h0M287.5 539h1M301.5 539h0M361.5 539l1-1M209.5 540v1M213.5 540l1-1M215 540h1M236.5 540l1 1M239.5 540l1 1M255.5 540l1 1M264.5 540h0M266.5 540h0M287.5 540v1M353 540l1 1M379.5 540v1M402.5 540v1M475 540h1M478.5 540l1-1M498.5 540l1 1M555.5 540h1M577.5 540v1M226.5 541l1-1M232.5 541v1M235.5 541v1M242.5 541l1-1M251 541l1-1M263.5 541l1-1M268.5 541l1-1M274.5 541h1M330.5 541h1M478 541v1M524 541h1M530 541v1M540.5 541l1-1M542 541l1 1M558 541h0M228 542h0M228.5 542l1-1M237.5 542v1M250 542h1M252 542l1 1M262.5 542h1M263.5 542l1-1M269.5 542l1-1M276 542l1-1M283 542h0M306.5 542h1M509 542h1M516.5 542h1M553.5 542h0M206.5 543l1-1M211.5 543v1M229 543h1M231 543h1M232 543l1 1M246.5 543l1 1M249 543l1-1M252 543h1M287 543v1M298 543h1M337.5 543h1M367.5 543h1M474.5 543h0M199 544v1M213.5 544h0M227 544h0M247.5 544h1M249.5 544l1-1M253.5 544l1 1M265.5 544l1-1M268.5 544v1M278.5 544l1-1M285 544v1M302 544h0M385.5 544l1-1M445.5 544h1M448.5 544h0M482.5 544h0M483 544v1M486.5 544h0M530 544h1M532.5 544h0M202.5 545h1M213.5 545h0M217.5 545l1-1M223 545h1M233.5 545h1M235.5 545l1-1M237.5 545h1M240 545h1M260.5 545h0M280 545v1M292.5 545l1-1M302.5 545v1M496 545h1M511 545h1M524 545h1M532.5 545v1M555 545h1M208.5 546h0M211.5 546v1M212.5 546h0M215 546h1M216.5 546v1M218.5 546h0M226 546h0M235.5 546l1 1M267 546h1M273.5 546v1M279.5 546v1M314.5 546v1M414.5 546h1M519.5 546h1M538.5 546l1 1M546.5 546v1M568.5 546h0M219.5 547h0M220.5 547v1M230.5 547v1M232 547h1M245 547l1 1M246.5 547h0M253 547v1M262 547v1M263 547l1 1M266.5 547h1M292 547v1M471.5 547v1M527.5 547h0M536.5 547h1M552.5 547l1-1M565 547h0M581.5 547h1M217.5 548l1-1M222 548h0M224 548h1M225.5 548l1 1M229.5 548v1M242.5 548l1-1M262 548h1M284 548v1M331.5 548l1 1M450.5 548l1 1M516.5 548l1 1M569.5 548v1M582.5 548l1-1M603 548h1M215.5 549v1M215.5 549l1 1M216.5 549h1M221.5 549l1 1M223 549h0M225.5 549h1M230 549h1M239.5 549l1 1M247 549v1M259 549h0M263 549l1 1M266 549h1M282 549l1 1M377 549l1-1M519 549h1M520 549l1-1M538.5 549h0M548 549h1M559 549h0M568 549v1M587.5 549l1-1M608.5 549l1-1M268 550h1M269.5 550h0M356.5 550h0M394.5 550v1M487.5 550l1 1M503 550h0M519.5 550v1M527 550h1M551.5 550h0M606.5 550v1M198.5 551h1M212.5 551h0M212.5 551v1M224 551h0M252.5 551h0M292.5 551h1M302 551v1M333 551l1-1M374 551h1M517.5 551l1 1M538 551v1M543.5 551h1M576 551h0M584.5 551l1 1M596.5 551h0M211 552h1M230.5 552h1M236.5 552h0M239.5 552h1M259.5 552h1M267 552v1M307.5 552h1M322 552l1-1M457 552h1M509.5 552h0M542.5 552h1M550.5 552l1-1M565.5 552l1 1M569.5 552v1M601 552v1M626.5 552l1-1M197 553v1M221.5 553l1 1M263.5 553h1M314 553h1M386.5 553l1 1M420 553v1M432 553l1-1M562.5 553h1M570.5 553v1M590 553h0M602 553l1 1M208.5 554h1M383.5 554h1M495.5 554v1M536.5 554h1M543.5 554l1 1M546.5 554h1M552.5 554h1M576.5 554l1 1M602.5 554v1M220.5 555v1M334.5 555h0M417.5 555l1 1M434.5 555l1-1M447.5 555h1M520.5 555h1M574.5 555h0M613.5 555h0M622.5 555h1M211.5 556h1M213 556h1M217 556l1-1M234.5 556l1-1M240 556h0M345.5 556v1M361.5 556l1 1M491 556l1 1M511.5 556v1M561.5 556h1M564.5 556h1M575.5 556l1-1M610.5 556h1M619.5 556l1 1M253.5 557h0M255.5 557h1M273.5 557v1M335.5 557v1M436 557v1M566 557v1M566.5 557h1M577 557v1M585.5 557l1-1M607 557h1M611.5 557h1M214.5 558l1 1M344.5 558h0M472.5 558h0M496 558v1M542.5 558l1 1M558.5 558v1M564 558h0M580.5 558l1-1M584.5 558h1M592 558h1M616.5 558l1-1M497 559h0M543.5 559v1M570 559h1M596.5 559v1M389.5 560v1M442.5 560v1M462.5 560h0M558.5 560l1 1M562.5 560h0M573.5 560h0M574.5 560l1 1M581.5 560h1M581.5 560l1-1M585 560h1M585.5 560h1M626.5 560h1M284.5 561h0M310.5 561h1M360.5 561h1M364 561h0M391 561l1-1M474 561l1 1M498 561h1M508.5 561v1M548.5 561h0M557 561h0M569.5 561h0M583 561h1M587 561l1-1M590.5 561h0M597.5 561v1M333.5 562h1M337.5 562l1 1M395 562h0M427.5 562v1M449 562l1 1M573.5 562v1M576.5 562l1-1M582.5 562h1M586 562h1M592.5 562l1 1M610.5 562h0M625.5 562h1M374.5 563h1M405.5 563h1M407 563h1M522 563h1M539.5 563h0M557.5 563h1M567.5 563v1M416 564v1M457.5 564v1M504 564l1-1M517.5 564h0M531 564v1M547.5 564h1M552.5 564h0M576 564l1-1M584.5 564h0M594.5 564h1M597.5 564l1-1M602.5 564v1M626.5 564h0M283.5 565h1M449.5 565h0M461.5 565h0M483.5 565l1 1M491 565v1M491.5 565h1M568.5 565l1-1M569.5 565h1M570 565h0M575 565l1-1M585.5 565l1 1M403.5 566l1 1M462.5 566v1M543 566h0M555.5 566h1M565 566l1 1M568.5 566l1 1M575 566l1-1M612.5 566h1M296.5 567l1-1M350.5 567v1M487 567h1M565.5 567h1M573.5 567h1M584.5 567h1M594.5 567h0M306.5 568l1 1M310.5 568h1M333.5 568l1 1M337.5 568h1M364.5 568h1M380 568l1 1M393.5 568h0M419 568l1 1M448 568h1M471.5 568l1-1M540.5 568l1 1M560 568l1 1M562 568l1 1M569.5 568h1M572 568h0M579 568l1-1M592.5 568v1M599.5 568h1M601.5 568h1M603.5 568h1M606.5 568l1-1M315.5 569h1M447.5 569l1-1M517.5 569h0M530 569h0M537.5 569l1 1M562.5 569l1 1M568.5 569h1M573.5 569l1 1M609 569h1M336 570h1M561.5 570h0M569.5 570h1M571 570l1-1M598.5 570h1M606.5 570h0M375 571h0M394.5 571h1M397 571h0M405.5 571v1M457 571l1 1M493.5 571l1-1M568.5 571h1M577.5 571h1M582.5 571l1 1M602.5 571h1M347 572h0M356.5 572l1-1M364.5 572v1M386.5 572h1M425.5 572l1-1M437 572h1M500.5 572h1M517 572v1M567.5 572l1-1M576 572l1 1M603 572v1M367.5 573h1M580.5 573l1-1M586.5 573h1M598 573h0M606.5 573h1M472.5 574h1M556.5 574l1-1M578.5 574h1M601.5 574v1M440.5 575h1M461 575h1M477.5 575v1M567.5 575l1 1M575.5 575h1M595.5 575l1-1M597.5 575l1 1M487.5 576l1-1M526.5 576l1 1M533 576h1M568.5 576v1M569 576l1-1M571 576h0M572.5 576h1M582.5 576l1-1M586.5 576l1-1M432 577v1M496 577l1 1M512.5 577h1M551.5 577l1-1M591.5 577h0M402.5 578h0M532.5 578h0M567.5 578l1-1M581.5 578h0M595 578l1 1M422 579v1M507 579h0M523 579h0M552 579l1 1M558.5 579v1M562 579v1M574.5 579v1M594.5 579h0M600 579l1-1M443.5 580v1M464.5 580l1-1M524 580l1-1M547.5 580h1M460.5 581h1M520.5 581h0M543.5 581l1-1M567 581l1-1M602 581h1M614 581v1M474.5 582l1 1M557.5 582l1-1M562 582h1M590.5 582v1M604 582v1M456.5 583h1M486.5 583l1 1M521.5 583h1M524.5 583l1 1M535.5 583h1M543.5 583h1M547 583h1M557.5 583v1M560 583l1-1M567 583h0M574.5 583l1-1M582.5 583h1M591.5 583l1-1M596.5 583h1M596.5 583h0M549.5 584l1 1M557.5 584h1M579.5 584h1M583 584v1M595.5 584h0M482.5 585v1M543.5 585l1 1M550.5 585h0M551 585h1M567.5 585v1M571.5 585l1 1M576.5 585l1-1M584.5 585h1M587 585l1-1M462.5 586h1M472 586h1M522 586h0M531.5 586v1M562 586l1-1M575.5 586l1-1M578.5 586h1M586 586l1 1M453 587v1M550.5 587v1M559 587l1-1M569 587h1M590.5 587v1M547.5 588l1-1M551 588h0M555.5 588l1 1M565.5 588h0M570 588h1M524.5 589h1M572 589l1-1M546 590h1M555.5 590h1M556.5 590h1M565.5 591h0M585.5 591h1M587.5 591h1M526.5 592l1-1M564.5 592h1M604.5 592h1M532 593v1M554 593h1M562.5 593h1M581.5 593h1M544.5 594h1M561.5 594h1M562 594l1 1M593 594h1M539.5 595l1 1M547 595h1M558.5 595h1M581.5 595h1M542.5 596l1 1M565.5 596l1 1M569.5 596h0M576 596h1M549.5 597l1 1M551.5 597h1M586.5 598h0M590 598l1-1M557.5 599l1-1M561.5 599h0M577.5 599l1 1M581 599h1M581.5 599h1M582.5 599h0M558 600h1M573.5 600v1M565.5 601l1-1M581.5 601h1M583.5 601h1M575.5 604l1 1M580 606l1 1"/><path stroke="#2850f0" d="M413.5 469l1-1M351.5 475l1-1M441.5 475h0M353.5 478h0M499.5 478h1M246 480h1M522.5 480h0M344.5 481l1-1M471.5 481h0M526.5 481v1M226.5 482v1M250.5 482h1M276 482h1M319.5 482v1M464.5 483v1M514.5 483l1 1M528 483h0M213.5 484h1M232.5 484v1M250 484v1M256 484l1 1M281 484l1 1M287 484v1M288.5 484l1-1M468 484h1M258 485v1M293.5 485h1M303.5 485h1M363.5 485h1M496 485v1M508.5 485l1 1M268.5 486h1M377.5 486h1M451 486l1 1M471.5 486l1 1M515.5 486l1-1M346.5 487h1M430 487v1M205.5 488h1M346.5 488h1M439.5 488l1 1M449 488h1M476 488h1M229.5 489h1M254.5 489l1-1M351.5 489l1 1M366.5 489h0M399.5 489h1M425.5 489h1M548.5 489l1-1M569 489v1M289.5 490l1-1M305.5 490l1-1M335 490h1M336.5 490v1M371 490l1-1M372.5 490l1-1M304 491l1 1M331.5 491l1 1M357.5 491h0M384 491h0M386.5 491l1 1M420.5 491h0M422.5 491l1 1M429.5 491h0M454.5 491h1M480 491h1M289.5 492l1-1M302.5 492h0M336.5 492v1M384.5 492v1M405 492h0M456.5 492l1 1M462 492h1M538 492h1M230.5 493l1 1M326.5 493h1M359.5 493v1M363.5 493l1-1M412 493h1M442 493h1M442.5 493h0M489.5 493l1 1M576.5 493h0M221.5 494h1M307.5 494l1 1M330 494v1M361.5 494h1M400.5 494h0M420 494h1M474.5 494h0M499.5 494l1-1M511.5 494h1M521 494h0M577.5 494h1M251.5 495v1M273.5 495h0M312.5 495v1M350 495h1M368.5 495l1 1M382.5 495l1-1M413.5 495l1-1M451 495h1M474.5 495l1-1M500 495h1M507.5 495h0M216.5 496h0M316.5 496h0M319.5 496l1-1M332 496l1 1M372.5 496h1M379.5 496l1-1M386 496l1 1M389.5 496h1M395 496h1M414.5 496v1M422 496h0M456.5 496h1M504 496h1M515.5 496l1-1M519 496l1-1M542 496h0M295 497h0M311 497l1 1M326.5 497h0M328 497h1M358 497h1M381.5 497l1-1M384.5 497v1M390.5 497l1 1M440.5 497h1M489 497v1M537 497h1M546.5 497v1M588.5 497h1M282 498h1M290.5 498l1-1M293 498v1M302 498l1 1M318 498v1M341 498l1-1M343.5 498l1 1M360.5 498l1 1M389 498l1-1M411 498v1M423.5 498l1-1M434.5 498h1M451 498l1-1M455.5 498h0M464 498h1M465.5 498h0M483 498h0M491.5 498l1-1M526.5 498h1M536.5 498h1M538.5 498l1 1M250.5 499h0M270.5 499l1 1M283.5 499h1M308 499l1-1M325.5 499l1 1M375.5 499h0M388.5 499l1-1M400.5 499l1-1M402.5 499h1M406 499h1M407.5 499v1M444.5 499h0M516.5 499v1M536 499l1 1M229.5 500h0M231.5 500l1-1M264 500h1M300.5 500h1M307 500v1M317.5 500v1M320.5 500h1M322.5 500h0M344.5 500v1M354.5 500h1M354.5 500h1M368.5 500h0M372 500h0M380 500l1 1M383 500h1M410 500h1M415.5 500v1M423.5 500h0M440 500v1M463.5 500l1 1M465.5 500h1M468.5 500l1-1M483.5 500h1M500 500v1M518 500l1-1M520.5 500l1 1M532.5 500h0M539.5 500h0M216 501h1M230.5 501v1M239 501h1M242.5 501l1 1M282.5 501l1-1M285.5 501h1M311.5 501l1 1M319 501h1M322 501h1M324 501l1 1M328.5 501h1M333.5 501h1M334.5 501h1M338.5 501l1 1M348 501l1-1M367.5 501v1M375.5 501h0M381.5 501h1M389 501h1M408 501l1 1M415 501l1-1M443 501l1-1M481 501h1M512 501l1 1M533.5 501h1M561.5 501l1-1M575.5 501h0M236.5 502v1M247.5 502h0M264.5 502l1-1M350.5 502h1M354.5 502v1M368 502l1 1M394.5 502h1M407 502l1 1M476 502h1M521 502l1 1M204 503l1-1M205.5 503h1M209.5 503l1-1M254 503l1 1M262.5 503h1M266.5 503h0M266.5 503h0M276.5 503v1M286.5 503l1 1M322 503h1M349 503h0M402.5 503h1M404.5 503h1M429.5 503h0M465 503h1M511.5 503v1M541.5 503h0M545 503h1M546.5 503h0M218.5 504h0M225 504h1M236.5 504l1-1M257.5 504l1-1M269 504l1 1M280 504v1M284.5 504l1 1M300.5 504h0M337.5 504h1M386.5 504h1M408.5 504h1M424.5 504h0M477.5 504h1M479.5 504l1 1M487.5 504h0M565.5 504h1M245 505l1 1M270.5 505h1M279 505l1-1M286.5 505h1M298.5 505l1-1M300.5 505h1M343.5 505l1-1M345.5 505h0M357.5 505h1M369 505h0M398.5 505h1M403.5 505l1-1M405.5 505l1-1M413 505v1M452 505l1 1M476 505h1M522 505l1 1M547.5 505h0M552.5 505v1M260.5 506h1M266.5 506h0M285 506h1M289.5 506v1M345.5 506h0M350 506l1 1M356.5 506h0M362.5 506l1 1M388.5 506h1M402.5 506l1 1M405.5 506l1-1M451.5 506h1M459.5 506v1M483.5 506h1M507 506l1 1M530.5 506l1 1M534 506h1M588 506l1-1M227.5 507h1M244.5 507h0M255.5 507l1 1M260.5 507h1M268.5 507l1-1M275 507l1-1M292.5 507l1-1M294 507h1M317 507h0M336.5 507h1M389 507v1M544.5 507l1-1M592 507l1 1M213.5 508v1M241.5 508v1M241.5 508h0M254.5 508v1M257 508h0M300.5 508h0M303 508v1M334.5 508l1-1M396.5 508l1 1M414.5 508v1M432.5 508h1M439 508h1M447.5 508l1-1M455.5 508h0M456.5 508l1 1M514 508h1M536.5 508h1M561 508l1-1M564.5 508h1M567 508h0M208.5 509h0M313.5 509h1M316.5 509l1-1M341.5 509l1-1M350 509h1M360.5 509h1M368.5 509h1M389 509h1M406.5 509v1M484.5 509v1M517.5 509h1M538.5 509h1M545.5 509l1 1M571.5 509h0M573.5 509h1M577.5 509h1M589 509h0M596.5 509h1M206 510l1-1M245 510l1 1M274.5 510l1 1M299 510h0M346.5 510h1M347 510h1M371 510l1-1M420.5 510l1-1M422.5 510l1 1M429 510h0M467.5 510l1-1M514 510l1-1M536.5 510h0M569 510l1-1M614.5 510h1M618 510l1 1M240.5 511v1M260.5 511l1-1M276.5 511h1M284.5 511h0M303.5 511h1M322.5 511h1M330 511l1-1M337 511h1M343.5 511v1M361.5 511v1M363 511h1M402.5 511h0M482.5 511v1M561.5 511h0M589.5 511v1M230.5 512h1M274.5 512h0M285.5 512h1M306.5 512l1 1M323.5 512l1-1M343.5 512l1 1M353 512h1M402 512l1 1M428.5 512h1M477 512h1M209.5 513h1M241.5 513h1M249.5 513h0M253.5 513h1M286.5 513l1-1M299.5 513l1 1M375.5 513l1 1M409.5 513h0M414.5 513h1M466.5 513h1M521.5 513h1M553 513h1M589 513l1-1M594.5 513v1M602 513h1M259.5 514h1M259.5 514v1M291 514l1 1M296.5 514l1 1M388.5 514v1M422.5 514h0M437.5 514h1M518.5 514l1 1M559.5 514h1M587.5 514l1 1M618 514l1 1M230 515h1M283.5 515l1-1M355.5 515h1M608.5 515h1M614 515h0M626 515l1 1M287.5 516h0M328 516l1 1M337.5 516h1M380.5 516h0M494.5 516h0M549.5 516l1 1M557.5 516h1M564.5 516h0M583.5 516h1M591.5 516v1M596.5 516h1M616.5 516h1M632.5 516v1M218 517l1 1M541 517l1-1M605 517h0M212 518l1-1M265 518l1-1M283.5 518h0M362 518l1-1M385.5 518h1M560.5 518h0M571.5 518h1M605.5 518l1-1M629.5 518h0M224.5 519h1M521.5 519h0M525 519h1M601 519h0M606.5 519h0M239.5 520l1 1M259.5 520h1M345 520h0M380.5 520h1M436 520l1-1M526.5 520h1M578 520h0M585.5 520v1M604.5 520v1M358.5 521v1M398 521h0M456 521h0M458.5 521l1 1M493 521h1M549.5 521h1M233 522h1M293.5 522h1M422 522h1M455.5 522h1M490 522l1-1M604.5 522v1M612.5 522l1-1M637.5 522l1 1M302.5 523h0M560.5 523h1M592.5 523h0M599.5 523l1 1M617.5 523h1M555 524v1M602.5 524h1M646 524h0M586.5 525h1M593.5 525v1M594.5 525l1-1M608.5 525l1-1M612.5 525h1M238.5 526v1M503.5 526h0M580 526h1M595.5 526h1M609.5 526l1-1M612 526v1M546.5 527h0M578.5 527l1 1M585.5 527h1M611.5 527l1 1M622 527l1-1M596.5 528l1 1M609.5 528v1M628 528h1M632.5 528l1 1M572.5 529v1M580.5 529v1M610.5 529v1M215.5 530h1M590 530h1M599 530v1M601.5 530v1M625.5 530h1M629 530l1-1M351.5 531l1 1M590.5 531h0M626.5 531h1M627 531v1M581.5 532h1M597.5 532h0M389.5 533l1 1M597 533h0M622.5 533l1 1M576.5 534l1-1M608.5 534l1 1M614.5 534v1M643.5 534h1M586 535v1M610.5 535l1 1M634 535h1M642.5 535h1M644 535h1M599.5 536h1M628.5 536v1M621 537h0M623 537v1M639.5 537v1M624 538l1-1M620.5 539l1 1M631.5 539h1M608.5 540h0M626 540v1M607 541h1M609 541v1M610.5 541h1M616.5 542l1-1M616.5 543l1-1M637.5 543h1M601 544h1M627.5 544h1M630.5 545l1 1M608.5 548h1M622.5 549h0M622 551h1M618.5 552l1-1"/><path stroke="#283cf0" d="M429 482l1 1M296.5 486l1-1M445.5 486v1M385 490l1-1M439.5 490l1-1M202.5 491l1 1M378.5 491h0M230 492l1 1M215.5 493l1 1M362.5 493l1 1M371.5 493h1M321 494l1 1M331.5 494v1M379.5 494h1M320.5 495l1 1M326 495h0M329.5 495h1M344.5 495h0M359 495h1M481.5 495h1M500.5 495h1M554.5 495l1 1M256.5 496h1M275.5 496h1M288.5 496h1M292 496h1M254 498h1M273 498l1 1M288.5 498h1M338.5 498l1 1M347 498l1 1M371.5 498h1M420.5 498v1M424 498h1M424.5 498h0M490 498h1M528 498l1 1M218.5 499h1M310.5 499h0M337.5 499v1M374 499l1 1M414.5 499v1M489 499h1M291.5 500v1M295 500h0M308 500h0M420.5 500v1M432 500h0M473.5 500h0M217 501l1-1M244.5 501h1M247.5 501l1 1M406.5 501v1M445.5 501v1M514.5 501h1M220.5 502v1M235 502v1M269 502v1M278 502h0M366.5 502l1-1M425.5 502h1M248.5 503v1M251.5 503v1M253.5 503v1M298.5 503l1 1M337.5 503v1M364 503l1-1M375.5 503h1M388 503h1M417.5 503h0M466.5 503h1M491 503v1M281.5 504h0M282.5 504h1M297.5 504l1 1M344 504h0M352 504l1-1M358.5 504v1M371.5 504l1 1M504.5 504v1M529.5 504l1 1M544.5 504h0M207 505l1-1M214 505h0M257 505v1M260.5 505v1M275.5 505l1 1M281 505h0M324 505l1-1M328 505v1M352.5 505h1M474.5 505h1M480.5 505v1M210.5 506l1 1M221 506l1 1M239 506v1M275.5 506h0M277.5 506v1M289.5 506v1M360.5 506v1M381 506h1M445 506h0M480 506v1M517 506v1M224.5 507h1M237.5 507h1M262.5 507l1 1M299.5 507h0M316 507l1 1M325.5 507v1M385.5 507l1 1M388.5 507l1 1M394 507v1M396 507l1 1M419.5 507h0M427.5 507h0M431.5 507l1-1M441.5 507v1M461.5 507v1M483.5 507l1-1M546.5 507h0M230.5 508h1M263.5 508v1M281 508v1M292 508h1M319.5 508l1-1M350.5 508l1-1M356.5 508v1M364.5 508h1M365.5 508h1M386 508v1M402.5 508h1M406 508l1 1M487.5 508h1M543 508v1M223.5 509h0M267 509h0M285.5 509h1M289.5 509h0M298 509v1M308 509v1M351 509l1 1M357.5 509l1 1M402 509h0M415.5 509h0M461.5 509h1M472 509h1M488 509h0M553 509l1 1M224 510h1M244.5 510v1M258 510l1 1M265.5 510h0M271.5 510v1M289 510l1-1M301 510h0M328.5 510h1M332.5 510l1-1M342 510h1M356 510l1-1M358.5 510h0M413 510h1M475 510h1M526.5 510v1M559 510h0M242.5 511v1M265.5 511h1M280.5 511l1-1M282.5 511l1-1M370.5 511l1-1M383 511h1M409.5 511l1 1M422 511h0M426.5 511v1M480.5 511h1M590.5 511h1M202 512h1M240 512v1M272 512l1-1M275 512h1M289.5 512h0M291 512h0M301 512l1-1M302 512l1 1M312.5 512l1-1M327.5 512l1-1M334.5 512l1 1M356.5 512h1M366.5 512v1M380.5 512v1M398 512h0M399.5 512h1M447 512h1M453 512h0M461.5 512h1M462.5 512l1 1M466.5 512h0M484 512h1M540.5 512l1 1M557.5 512l1-1M203.5 513h0M269.5 513l1-1M277.5 513v1M293.5 513v1M318.5 513v1M321 513h0M325 513h0M433 513h1M554.5 513h0M252.5 514v1M271 514h1M272.5 514v1M293.5 514h1M305.5 514h0M314.5 514l1 1M327 514v1M333 514h1M339 514l1-1M343.5 514h0M350.5 514h0M365.5 514h0M465.5 514h1M538.5 514h0M547.5 514v1M591 514v1M258.5 515v1M266.5 515l1-1M278.5 515h1M289.5 515v1M299.5 515v1M308.5 515l1 1M323.5 515l1-1M380.5 515v1M381.5 515v1M399.5 515v1M401 515h0M415.5 515v1M442 515h0M468 515l1 1M480 515h1M499.5 515h0M247.5 516l1-1M261.5 516v1M278 516v1M311 516h0M312.5 516h1M313 516l1-1M332.5 516h1M336.5 516h0M346.5 516h1M373.5 516h0M382.5 516l1 1M391.5 516h0M411 516h1M448 516h1M541.5 516h1M204.5 517v1M226.5 517h1M235.5 517h1M241 517v1M243.5 517v1M262.5 517l1 1M272.5 517h1M298.5 517h1M309.5 517l1 1M323 517v1M363 517h1M366.5 517h0M376.5 517h0M400 517l1 1M421.5 517h1M426.5 517v1M429.5 517h0M503 517l1 1M581 517h1M235.5 518h1M244.5 518l1 1M260.5 518h0M286.5 518h1M301.5 518h1M317.5 518l1 1M328.5 518h1M359.5 518l1-1M370.5 518v1M394.5 518h1M412.5 518h1M509.5 518h0M516.5 518l1-1M547 518l1 1M569.5 518l1-1M573.5 518l1 1M577.5 518h1M596 518h1M611.5 518l1-1M215.5 519v1M248 519l1 1M254.5 519h1M262.5 519h0M287.5 519l1-1M292.5 519l1 1M294 519h1M341 519h0M358.5 519h0M362 519h1M377 519v1M390.5 519h1M397 519h0M399.5 519h1M423.5 519h1M456.5 519h0M457.5 519v1M513.5 519l1 1M212 520l1-1M214 520h0M241.5 520l1 1M246.5 520l1-1M273.5 520l1-1M295.5 520h1M338 520v1M343.5 520l1 1M360.5 520l1 1M399 520h0M417.5 520l1 1M435.5 520h1M455 520v1M463.5 520l1-1M476.5 520l1-1M499.5 520l1-1M518.5 520l1 1M521.5 520h0M538 520h0M219.5 521h1M239 521v1M258.5 521h1M274.5 521h1M285 521h1M289.5 521l1 1M301.5 521h1M303.5 521l1 1M324 521l1-1M362.5 521h1M364.5 521l1 1M373 521h1M401 521h1M413.5 521h1M215 522v1M230 522h0M232.5 522v1M347.5 522h1M363.5 522l1 1M410.5 522l1-1M411 522h1M411.5 522l1 1M424 522h1M442.5 522h1M492.5 522h1M496 522l1 1M513 522v1M513.5 522h0M533.5 522l1 1M578.5 522h1M598.5 522l1 1M212.5 523v1M243 523h0M259.5 523v1M291.5 523l1 1M346 523h0M349 523l1-1M351.5 523h1M358.5 523v1M364.5 523l1 1M378.5 523l1-1M379.5 523l1-1M422 523v1M459.5 523l1-1M468.5 523h1M536.5 523h1M556.5 523l1 1M568.5 523v1M572 523h1M574.5 523l1 1M225 524v1M252.5 524l1-1M254.5 524h0M288.5 524h0M290.5 524l1 1M297 524h0M330.5 524l1-1M338.5 524h1M363.5 524l1-1M470 524v1M490 524l1-1M560.5 524l1 1M569.5 524v1M593.5 524v1M599.5 524l1 1M223 525h1M224.5 525h1M269 525h0M282 525h0M302.5 525l1 1M316.5 525h1M344.5 525h1M390.5 525h0M408.5 525l1 1M468.5 525l1-1M536 525h1M596.5 525l1 1M636 525v1M204 526h0M297 526v1M326.5 526l1-1M341 526h1M378.5 526h1M465.5 526h1M501.5 526h1M548.5 526h0M641 526h1M235.5 527l1 1M247.5 527h0M257.5 527l1 1M262 527l1-1M303.5 527h0M320.5 527h0M330.5 527h1M367 527h1M524.5 527h1M541.5 527l1 1M233 528v1M394.5 528v1M396.5 528l1 1M460.5 528h1M550.5 528h0M565.5 528h0M578.5 528v1M586 528h1M587.5 528h1M593.5 528v1M615.5 528l1 1M262.5 529l1-1M272 529h1M347 529v1M450 529v1M489 529v1M505.5 529h1M526 529h1M557 529l1-1M559.5 529h0M561.5 529h1M586 529l1 1M592 529l1 1M243 530l1 1M259.5 530l1 1M497 530h1M556.5 530h1M564.5 530h0M580.5 530l1 1M595 530h1M301 531l1-1M494.5 531l1-1M563.5 531h0M577.5 531h1M578.5 531h1M613.5 531h0M342 532h1M549.5 532l1 1M578.5 532l1 1M224.5 533l1 1M358.5 533h0M219.5 534v1M553 534v1M567 534v1M577.5 534l1-1M599.5 534l1 1M601.5 534l1 1M624.5 534h0M546 535l1 1M573.5 535h0M641 535v1M332.5 536v1M558.5 536h1M242.5 537v1M562.5 537l1-1M604.5 537h1M612.5 537l1 1M626 537l1-1M601.5 538h1M613.5 538h1M618.5 538l1-1M626 538l1-1M252.5 539h1M492.5 539h1M563.5 539l1 1M628.5 539h0M638.5 539v1M494.5 540h1M560 540h1M590.5 540l1 1M639.5 540l1-1M601 541h1M607.5 541h0M629.5 541h1M635.5 541h1M227 542l1-1M576.5 542v1M596.5 542h0M599 542h1M620 542l1-1M632 542h0M612.5 543v1M623.5 543l1 1M539.5 544h1M618.5 544l1-1M629 544h1M632 544l1-1M603.5 545h1M620.5 545l1-1M628.5 545h1M605.5 546h1M615.5 546h0M608 547h0M618 547h0M551.5 549h1M575.5 549l1 1M598.5 550l1-1M611.5 550v1M613.5 550h0M591.5 552h0M593 553l1-1M606 553l1-1M623.5 553l1-1M628.5 553l1 1M626.5 554h1M630.5 555h1M598.5 557l1 1M624 557l1-1M596.5 560l1 1M601 560h1M617 560v1"/><path stroke="#283cdc" d="M477.5 498v1M369.5 499h1M236 500h1M387 500h0M280 501h0M254.5 502h0M340.5 503v1M270.5 504l1 1M351 504l1-1M501 505h0M271.5 506h1M252 507h1M370.5 507l1 1M322.5 508l1 1M343.5 508l1-1M400.5 508h0M415 508l1 1M419.5 508h1M225 509l1 1M236 509l1-1M399.5 509l1 1M234.5 510h0M323 510l1-1M335.5 510l1 1M365 510h1M382.5 510h0M390.5 510h1M399.5 510l1-1M489.5 510l1 1M277.5 511l1 1M308.5 511l1 1M327.5 511l1-1M443 511l1 1M443.5 511l1 1M462.5 511h1M477 511v1M486.5 511l1-1M521.5 511l1 1M322.5 512v1M329.5 512h0M394.5 512h0M467.5 512l1 1M233.5 513h1M263.5 513v1M315.5 513h0M319.5 513h1M326 513v1M399 513h0M474 513h0M511.5 513h1M280.5 514v1M292.5 514h0M295.5 514l1-1M314.5 514l1 1M318.5 514l1-1M471 514h1M572.5 514v1M221 515h1M256.5 515h1M273 515h1M356 515v1M393.5 515h1M397.5 515v1M456.5 515l1-1M489.5 515h1M539 515h0M301.5 516h0M314.5 516v1M326.5 516v1M369.5 516h1M498.5 516l1 1M538.5 516h0M263 517h1M302 517h0M325.5 517h0M376 517h1M382.5 517l1-1M410.5 517h1M414 517h1M448.5 517h1M504.5 517h0M233.5 518v1M276.5 518l1-1M287.5 518l1 1M289.5 518l1-1M318.5 518l1 1M327.5 518l1 1M401.5 518v1M402 518l1-1M435 518l1-1M531.5 518h1M239.5 519h1M249 519l1 1M254.5 519v1M289 519l1-1M301 519h1M312.5 519h1M343.5 519l1-1M373 519h1M381.5 519h0M475 519h1M503 519h1M212.5 520h0M227 520l1-1M251 520l1 1M275.5 520h1M290 520h1M297 520l1 1M314 520h1M324.5 520h1M348.5 520l1 1M349 520v1M379.5 520h0M390.5 520h1M406.5 520l1 1M411 520v1M414 520l1-1M421.5 520v1M454 520h0M247.5 521h1M273 521l1-1M286.5 521h1M289 521v1M326 521l1 1M328 521l1 1M340.5 521h0M351 521v1M372.5 521v1M388 521l1-1M389 521l1 1M486.5 521v1M492.5 521l1 1M220.5 522h1M281.5 522l1 1M292 522h1M306.5 522h0M317.5 522h0M348.5 522l1 1M359.5 522h0M402.5 522l1-1M409.5 522v1M229 523h1M242.5 523l1-1M268.5 523l1 1M275.5 523v1M280 523h1M284 523v1M294.5 523v1M305.5 523h1M307 523l1-1M316 523h0M341.5 523l1-1M363.5 523l1 1M374 523l1-1M388 523l1-1M393.5 523h1M399.5 523l1-1M401.5 523h1M454.5 523v1M462 523l1-1M473.5 523h1M623.5 523h1M228.5 524l1-1M252.5 524h1M266.5 524h1M276 524h1M300.5 524h0M302.5 524h1M332 524l1-1M406.5 524l1-1M410 524h0M485.5 524h1M495.5 524l1-1M517.5 524v1M549.5 524v1M578 524h1M230.5 525h1M246.5 525l1 1M285 525v1M292.5 525l1 1M310.5 525l1-1M325 525v1M355.5 525v1M366.5 525l1 1M392.5 525v1M397.5 525h0M405.5 525h1M406 525h0M414 525l1-1M421.5 525h1M462.5 525h1M471.5 525h0M549 525l1-1M554.5 525h1M563.5 525l1 1M208.5 526v1M212.5 526l1-1M215 526h1M257.5 526h1M265.5 526h0M276.5 526l1 1M289.5 526h1M290 526l1-1M299.5 526l1 1M301.5 526h1M305.5 526h0M319.5 526h1M338 526h1M353.5 526v1M359.5 526h1M397.5 526h1M407.5 526l1 1M409.5 526h1M411.5 526l1 1M510.5 526h1M512.5 526h1M523.5 526h1M566.5 526h1M607.5 526h1M204 527v1M209 527h0M232.5 527h1M281.5 527v1M291.5 527h1M312.5 527h0M373.5 527v1M393.5 527h1M397.5 527v1M410.5 527h1M451.5 527v1M561.5 527h1M564 527l1 1M222 528v1M223.5 528v1M227.5 528h1M238.5 528l1 1M240.5 528h0M240.5 528h1M246 528l1-1M246.5 528v1M282.5 528h1M288 528h1M308.5 528h1M318.5 528v1M321 528v1M329 528v1M334 528h1M363.5 528h0M367.5 528h1M442 528h1M454 528h1M474.5 528h0M258.5 529l1-1M265 529l1 1M274.5 529h1M291 529v1M299.5 529l1-1M303.5 529h1M310.5 529h1M311.5 529h1M429 529l1 1M455 529h0M502.5 529l1 1M216.5 530h1M244.5 530h1M267 530h0M296 530l1 1M313 530l1 1M364.5 530l1-1M373.5 530v1M375 530v1M407.5 530h0M435.5 530h1M530 530h1M546.5 530h1M587.5 530h1M213.5 531h1M226.5 531h1M242.5 531h0M260.5 531l1-1M302.5 531l1-1M313.5 531h1M367 531h1M444 531v1M468.5 531h1M538.5 531h0M575.5 531l1 1M213 532l1-1M223 532l1 1M237.5 532h1M255.5 532h1M258 532h1M268.5 532h1M282.5 532h1M303.5 532h1M303.5 532v1M308 532h1M337 532v1M371.5 532l1-1M386.5 532v1M415.5 532l1-1M465 532l1-1M501 532h0M537.5 532l1-1M544.5 532h1M566 532l1-1M587 532l1-1M591 532h1M213.5 533h1M222.5 533h0M263.5 533h1M270.5 533v1M280.5 533h0M309.5 533v1M473.5 533l1-1M483.5 533v1M526 533h1M204 534l1 1M287.5 534h0M309.5 534l1 1M339.5 534h1M348.5 534h0M369.5 534l1 1M568.5 534v1M582.5 534h1M217.5 535l1 1M225.5 535h1M302 535l1-1M357.5 535h1M555.5 535v1M205.5 536l1 1M247.5 536h1M275 536h1M288.5 536h1M291.5 536v1M293 536v1M331.5 536h0M401.5 536v1M516.5 536v1M557.5 536l1 1M566 536h1M573.5 536h0M601.5 536h1M219 537h1M534.5 537l1 1M536 537h1M557 537v1M610 537h0M245.5 538h1M274.5 538h1M358.5 538l1-1M374.5 538l1 1M526.5 538v1M587.5 538h1M594.5 538l1 1M638.5 538v1M230 539l1-1M285 539h1M312.5 539h1M342 539l1-1M418 539h0M243.5 540h0M308.5 540v1M553 540l1-1M581 540v1M603.5 540h1M212 541v1M229.5 541l1 1M262 541h1M341.5 541l1-1M547.5 541v1M555 541l1 1M566 541h1M612.5 541h1M243 542h1M258.5 542l1-1M265 542h0M570.5 542l1-1M571.5 542h1M274.5 543v1M532.5 543l1-1M543.5 543v1M588.5 543h1M593 543h1M598.5 543h0M633 543h0M585.5 544l1-1M634 544h1M504.5 545h0M543.5 545h0M552 545l1-1M596 545l1-1M596.5 545l1-1M626.5 545l1 1M361 546h0M492.5 546h0M532.5 546v1M564.5 546h1M566.5 546l1 1M583 546h1M587.5 546l1 1M604 546v1M254 547v1M444.5 547h1M543 548l1-1M561 548h1M573.5 548h1M582.5 548v1M588 548l1-1M620 548l1 1M621 548l1 1M588.5 549h0M614.5 549h0M619.5 549h1M593 550l1 1M602.5 550h0M539 551l1-1M612.5 551h0M624.5 551l1-1M536.5 552l1-1M617 552v1M260.5 553h1M541 553h1M574.5 553l1-1M621.5 553h1M554.5 554l1-1M597.5 554l1-1M614 554h1M581 555v1M593 555h0M611.5 555l1-1M593 556l1 1M600.5 556h1M612.5 556h1M570.5 557h1M620 557h1M589 558h1M609.5 558l1 1M632.5 558v1M587.5 559h1M623 559h0M610.5 560h1M618 560h0M612.5 561v1M596.5 568v1M626 568l1 1M585 569v1M575.5 570h1M588 572h1M617.5 572h1"/><path stroke="#2864f0" d="M362.5 455h1M439 461h1M352.5 462h1M344 464h0M494 464l1 1M351.5 467l1-1M272.5 469h1M391 470h1M241.5 471h1M275 471l1-1M551 471h1M204 472l1 1M338.5 472v1M371 472v1M372.5 472h1M395.5 472h1M318.5 473h1M362 473l1 1M366.5 473l1 1M497 473l1-1M223.5 474h1M228.5 474h1M434 474h1M452 474l1 1M482 474v1M283.5 475v1M315 475h0M419 475l1 1M207.5 476l1 1M218 476h0M359 476h0M363 476h1M375 476v1M232 477h1M298.5 477h0M358.5 477h0M369 477h1M402.5 477l1-1M419 477h0M465 477v1M467 477h1M470 477l1-1M332 478h0M425.5 478v1M441.5 478h1M477.5 478h1M518.5 478h1M525.5 478h1M260.5 479l1 1M328.5 479v1M378.5 479h1M469.5 479h1M479 479l1-1M531 479l1 1M534.5 479l1-1M548.5 479h0M222.5 480h1M299 480v1M301.5 480l1-1M320.5 480h1M343 480l1-1M345 480l1-1M452 480h1M211.5 481h0M298.5 481l1 1M387.5 481l1 1M391.5 481h0M406.5 481v1M539.5 481h1M223 482l1 1M293.5 482l1-1M411 482l1 1M507.5 482l1 1M210.5 483l1 1M269.5 483l1 1M281.5 483h0M294.5 483l1 1M309.5 483l1 1M382.5 483l1-1M397.5 483h1M426 483v1M440 483v1M447.5 483h1M532.5 483h1M539 483v1M193.5 484v1M226.5 484h1M263 484v1M304.5 484h1M469.5 484v1M515.5 484h1M519.5 484l1-1M202 485l1-1M311 485h0M340.5 485h0M361 485h1M390 485l1 1M471.5 485h1M504 485l1-1M522.5 485h1M603 485l1-1M274.5 486l1 1M304 486v1M315.5 486v1M360.5 486l1-1M364.5 486h1M428.5 486l1-1M453 486v1M527.5 486v1M206.5 487l1-1M209.5 487l1-1M223.5 487h1M271.5 487l1 1M334 487l1-1M374 487h0M427.5 487h1M492.5 487h1M533.5 487l1 1M299.5 488l1 1M361.5 488h1M393.5 488l1-1M411.5 488l1 1M481.5 488h1M512 488h0M624.5 488l1-1M217 489l1 1M237.5 489h1M278.5 489v1M292.5 489h1M341.5 489l1 1M367.5 489h1M383 489h0M387.5 489h1M396.5 489l1 1M430.5 489h0M453.5 489l1 1M464 489h1M494.5 489h1M515 489h1M517.5 489v1M527.5 489h1M208.5 490h1M217.5 490l1-1M299 490h0M302.5 490h1M332.5 490v1M336 490h0M341 490h1M351.5 490h1M361.5 490h0M362 490v1M367 490h1M374 490l1-1M383.5 490h1M386 490l1 1M443.5 490l1-1M512.5 490l1-1M522 490h0M571.5 490h0M202.5 491h1M244.5 491v1M261 491h1M287 491v1M368 491h1M393 491v1M487 491l1-1M277.5 492v1M278.5 492h1M307.5 492h1M321.5 492v1M323.5 492v1M357.5 492l1-1M358 492h1M361.5 492l1-1M363.5 492l1 1M365.5 492h0M367 492l1-1M398.5 492h0M471.5 492v1M514.5 492l1-1M525 492v1M559 492h0M222 493h1M285.5 493h0M295.5 493l1-1M311.5 493h1M317 493l1 1M320.5 493h1M346 493l1-1M351 493v1M399.5 493h1M230.5 494h0M309 494h0M350.5 494l1 1M357 494h0M368.5 494h1M408.5 494h1M409.5 494h1M480 494v1M480.5 494h1M533.5 494l1 1M552 494h0M568.5 494l1-1M574.5 494h1M231.5 495h1M284 495h0M285 495h1M290.5 495v1M290.5 495v1M293.5 495h0M295 495l1 1M305.5 495h0M310 495h1M315.5 495h1M346 495h1M359.5 495h1M381.5 495l1 1M388.5 495h1M478 495l1 1M482.5 495h0M491.5 495v1M508.5 495v1M562.5 495l1 1M563 495h1M601.5 495h1M230.5 496v1M264.5 496l1-1M271.5 496l1-1M280 496h1M313 496h1M376.5 496l1 1M380.5 496h1M416 496l1 1M492.5 496h0M496 496h1M565.5 496v1M589 496h1M216.5 497l1 1M226.5 497l1-1M238.5 497l1-1M263.5 497h1M318.5 497v1M318.5 497l1-1M359.5 497l1-1M370.5 497h1M387.5 497l1 1M388.5 497h0M416 497l1-1M431.5 497l1 1M484 497v1M486.5 497v1M507 497h0M508 497h0M583.5 497l1-1M613.5 497l1-1M217.5 498l1-1M258.5 498v1M284.5 498h1M286 498h1M339.5 498v1M343 498l1 1M362.5 498l1-1M394.5 498l1 1M532.5 498h1M213.5 499h1M229 499l1 1M299.5 499l1 1M301 499l1-1M322.5 499l1 1M329.5 499h1M344 499h0M346.5 499l1-1M393.5 499l1 1M503 499h0M574.5 499v1M602.5 499l1 1M204 500l1 1M219 500h1M273.5 500h0M289 500v1M364.5 500h1M382 500l1 1M389.5 500h0M437.5 500h0M449.5 500h1M462.5 500v1M582.5 500l1-1M276.5 501h0M298 501l1-1M357.5 501h1M403.5 501v1M423.5 501h1M506 501h0M511 501l1 1M516 501h1M277.5 502h1M297 502h1M384.5 502l1-1M537.5 502h1M576 502h1M215 503h1M288 503l1 1M390 503v1M409.5 503h0M451 503l1-1M556.5 503h0M613.5 503l1 1M620.5 503h1M231 504v1M287.5 504l1 1M289.5 504h1M309 504l1-1M347.5 504l1 1M363.5 504l1-1M489.5 504h0M566.5 504h1M594 504h0M283.5 505l1 1M349 505v1M418 505h0M496 505h0M508 505h1M514 505h0M566.5 505h0M600 505h1M621.5 505l1 1M254.5 506l1-1M266.5 506l1 1M393.5 506h0M472.5 506h1M555.5 506l1 1M573.5 506h1M635.5 506l1-1M246 507l1 1M507.5 507v1M528 507h0M570.5 507v1M587 507l1-1M592.5 507l1-1M609.5 507l1-1M638.5 507h1M487.5 508l1 1M523.5 508l1-1M529 508h1M558.5 508h1M565.5 508v1M581.5 508l1-1M587.5 508h0M588 508h1M610.5 508h1M639.5 508h1M206 509h1M237.5 509l1 1M244.5 509v1M437.5 509h1M577 509l1-1M600 509h0M352.5 510h1M419.5 510l1 1M463 510h1M558 510v1M590 510h1M592.5 510h1M601 510l1-1M620 510l1-1M622.5 510l1-1M217 511h1M355.5 511h0M364 511h1M570 511l1 1M579.5 511h0M595.5 511h0M604.5 511h1M226.5 512l1-1M550.5 512l1-1M556 512h1M562 512v1M614 512v1M283 513v1M380.5 513v1M383.5 513l1 1M495.5 513v1M537.5 513l1 1M583 513v1M584.5 513h0M633.5 513l1 1M269 514v1M638.5 514v1M548.5 515v1M594.5 515h1M603.5 515h0M290.5 516h1M306 516h1M580 516h0M589.5 516h1M542.5 517l1-1M564.5 517v1M586.5 517h1M599 517l1 1M386 518v1M473 518v1M273 519h1M558.5 519v1M604.5 519v1M619 519l1-1M623 519h0M627 519v1M641.5 519h0M618.5 520h1M627.5 520v1M633 520l1 1M562.5 521l1 1M563.5 521l1 1M608 521l1 1M586.5 522l1 1M605.5 522l1 1M593.5 523h1M645.5 523h1M602.5 524l1-1M609 524h1M583.5 525l1 1M589.5 526h0M616.5 526h1M629.5 527l1-1M644.5 527l1-1M582 528h0M578.5 529h1M630.5 529h1M625 531h0M605 533l1-1M620 533v1M620.5 533h0M629 534h0M636.5 535h1M605 538h1M633.5 539v1M633 550h0"/><path stroke="#3ca0dc" d="M293 427l1-1M309.5 427v1M418.5 431h1M444.5 434h1M243 435v1M419 435h1M479 435l1 1M348 437h1M393.5 438l1-1M517.5 438l1 1M520 438h0M372.5 439l1 1M286.5 441h1M329.5 441l1-1M344.5 441h0M499.5 441h0M384 442v1M452 442l1-1M479.5 442h0M336.5 443l1-1M299.5 444h1M337.5 444h1M367.5 444l1-1M468 444h1M470.5 444h1M471.5 444h0M344 445h1M440.5 445h0M464.5 445h1M502 445h0M236 446h1M255.5 447h0M297 447v1M306 447h1M346.5 447h1M394.5 447v1M537.5 447l1 1M260.5 448h1M274 448h0M289.5 448v1M296.5 448h0M298.5 448h1M326.5 448v1M333 448v1M337.5 448h1M335.5 449h1M350.5 449h0M375.5 449h1M382.5 449h0M407.5 449l1-1M419.5 449l1 1M244 450l1-1M285 450l1-1M298.5 450h1M311.5 450h0M412 450h1M417.5 450h1M280.5 451v1M361.5 451h1M429.5 451v1M447.5 451h1M516.5 451h1M532 451l1 1M270.5 452h1M275 452h0M459.5 452v1M465.5 452v1M196.5 453v1M241.5 453h0M300.5 453h1M365 453l1-1M395 453h1M411.5 453l1 1M411.5 453v1M500 453v1M504.5 453l1 1M531.5 453l1-1M249.5 454h0M272.5 454l1 1M277.5 454l1 1M323.5 454h1M383.5 454v1M410.5 454h1M431 454h0M432 454h0M444 454l1-1M510 454h1M253.5 455l1-1M272.5 455h0M301 455l1 1M317 455l1 1M321.5 455h1M356.5 455h1M385.5 455h1M409 455v1M422.5 455h1M441 455h0M508.5 455v1M518 455h1M241 456l1 1M289.5 456h0M328 456h1M429.5 456h1M445 456l1-1M502.5 456l1 1M510 456h1M530.5 456l1 1M242.5 457l1-1M250.5 457h0M363 457l1 1M407.5 457h0M441.5 457v1M484 457l1-1M527 457l1 1M528.5 457h1M257.5 458l1 1M273 458l1 1M274 458h0M292.5 458v1M303 458l1 1M337.5 458h1M361.5 458l1-1M364.5 458l1-1M371.5 458v1M384.5 458l1-1M425 458l1 1M485.5 458h1M283.5 459v1M285.5 459h1M304.5 459l1-1M339 459l1-1M384.5 459h1M414.5 459h1M525.5 459l1 1M281.5 460h1M325.5 460h0M346.5 460h1M351.5 460l1 1M425.5 460h1M431.5 460l1-1M452 460v1M516.5 460l1-1M520 460h0M521.5 460h0M527 460h0M528.5 460h1M531.5 460l1-1M252.5 461h1M262 461l1 1M280.5 461h0M295.5 461v1M531.5 461l1 1M558.5 461l1-1M587.5 461h1M244.5 462l1-1M254.5 462v1M274.5 462v1M320.5 462l1 1M323 462l1 1M341 462l1 1M342.5 462h0M358.5 462v1M381 462v1M469 462h0M517.5 462l1 1M520.5 462h1M537 462h1M562.5 462v1M281.5 463v1M300.5 463l1 1M307.5 463h1M324 463h1M332.5 463h1M389 463h1M394.5 463h0M407.5 463l1-1M430 463h0M447 463l1 1M475 463l1-1M526.5 463l1 1M529.5 463v1M554.5 463l1 1M559.5 463h1M576.5 463h1M292 464h1M303 464h1M312.5 464h0M329.5 464v1M445.5 464h1M472.5 464l1 1M506.5 464l1 1M529.5 464l1-1M598 464v1M627.5 464l1-1M282 465h1M298.5 465h1M373 465h0M380.5 465l1 1M412.5 465h1M439.5 465h1M504 465l1-1M557.5 465l1-1M561.5 465h1M288.5 466h1M368.5 466h1M576.5 466h0M587.5 466l1 1M598.5 466v1M280.5 467l1-1M289.5 467h1M290 467v1M320 467h0M356 467l1-1M449 467h1M463.5 467l1 1M474.5 467h0M487.5 467l1-1M499.5 467h1M514.5 467h1M523.5 467h0M541.5 467l1-1M561.5 467v1M583.5 467l1 1M272.5 468l1-1M295.5 468h1M345.5 468h1M430.5 468h1M464.5 468h1M498.5 468l1-1M547.5 468h1M263.5 469v1M343 469l1 1M383.5 469l1 1M441.5 469h1M514.5 469l1 1M514.5 469h0M521.5 469h1M593.5 469h1M599.5 469h0M609.5 469v1M626.5 469h1M267 470h1M278.5 470l1 1M571.5 470h1M227.5 471h0M291.5 471h0M306.5 471v1M382.5 471h1M437.5 471h1M507 471h0M524.5 471v1M541 471l1 1M578.5 471h1M493.5 472l1-1M206.5 473v1M411 473l1 1M422 473l1 1M423 473h0M521 473h0M556.5 473l1 1M565 473l1 1M575.5 473h0M262 474h1M608.5 474l1-1M333.5 475l1-1M525 475l1 1M578 475v1M608.5 475h0M621.5 475h1M568 476h1M250 477v1M363.5 477h0M389 477v1M454 477h0M561.5 477h1M593 477v1M601.5 477h1M362.5 478h1M379.5 478h1M420.5 478h1M572 478h1M580.5 478l1-1M419.5 479h1M540 479v1M615 479l1 1M619.5 479h1M229 480v1M612.5 480h1M333 481l1-1M577.5 481l1-1M585 481l1-1M244 482h1M423 482v1M616.5 482h1M477.5 483l1 1M590.5 483l1-1M316.5 484l1 1M605 484h1M574 485l1-1M571.5 486l1 1M585.5 486h1M604.5 486h0M597 487h1M631 487l1-1M626.5 488l1 1M628.5 488v1M634 488h0M616 489h1M641.5 489l1-1M585.5 490l1-1M594 490h1M613.5 490l1-1M623 491l1-1M635.5 491h1M587.5 492h1M606.5 493h0M625.5 493h0M623.5 494h1M588.5 495h1M620 495l1 1M588.5 496l1 1M628 498h1M635 498h1M621.5 499l1 1M644.5 499l1-1M615 500l1 1M594.5 502h0M610.5 502l1 1M630 503l1 1M633 503l1 1M642.5 504v1M636 505v1M642.5 512h0M638.5 514h1"/><path stroke="#3cb4dc" d="M370.5 416l1 1M262.5 417l1-1M215.5 419h1M323.5 421h0M304.5 423h0M361.5 427h1M330.5 428h1M342.5 428h0M350.5 428l1-1M472.5 428l1-1M496.5 428h0M283.5 429l1-1M188.5 430h1M350.5 430h1M454.5 430h1M280 431h1M308.5 431l1-1M345.5 431h1M355 431h0M538 431v1M466.5 432l1 1M468.5 432v1M385 433h1M452.5 433l1-1M479.5 433v1M540.5 433h1M272 434v1M275.5 434l1-1M370.5 434v1M428.5 434h1M430 434l1 1M493 434l1 1M425.5 435h1M536 435v1M554 435h0M277 436h1M406.5 436l1-1M444.5 436h0M459.5 436v1M526 436v1M408 437h1M412.5 437h0M438.5 437v1M522.5 437h1M537.5 437h1M285 439h1M311 439h1M461.5 439l1 1M258.5 440h1M349.5 440h1M426.5 440h0M447.5 440h1M530.5 440l1-1M294.5 441l1-1M325 441l1 1M386.5 441v1M408 441h0M430 441h1M523.5 441h0M562 441v1M241 442h1M286.5 442h1M289 442h1M302.5 442l1 1M348 442v1M358.5 442v1M441 442h1M480.5 442l1 1M538 442h0M259 443h1M264.5 443v1M344.5 443h1M420.5 443l1 1M446 443v1M198.5 444h0M425 444h1M499.5 444l1 1M508.5 444h0M508.5 444h0M546.5 444v1M246.5 445h1M274.5 445l1-1M303.5 445v1M354.5 445h0M429.5 445h0M452 445l1 1M466.5 445h1M268.5 446h0M276.5 446l1 1M318.5 446h1M393.5 446v1M428 446v1M474.5 446h1M508 446h0M542.5 446h1M579.5 446h0M301 447h0M317 447h1M345 447h1M374 447l1 1M266.5 448h1M321.5 448h1M324.5 448l1-1M325 448l1-1M355.5 448h1M381.5 448h0M422 448v1M348 449h0M374 449l1 1M376 449h1M408 449h1M413.5 449l1 1M441 449h1M450 449l1-1M464.5 449h1M498.5 449h1M527 449h0M559.5 449h1M294.5 450h1M304.5 450v1M338.5 450l1-1M446.5 450h1M477.5 450h1M598.5 450l1 1M236.5 451h1M246.5 451l1-1M377.5 451l1-1M388.5 451h1M390.5 451l1-1M401 451h0M428.5 451h1M452 451v1M513.5 451l1 1M529 451h1M541.5 451l1-1M555 451h1M571.5 451h0M580.5 451l1 1M252.5 452h1M265 452h1M280.5 452l1-1M284 452l1-1M286.5 452h1M346 452h1M430 452h1M457 452l1-1M470.5 452h0M473 452h1M479.5 452h1M515.5 452v1M519.5 452l1 1M539 452h0M589 452h1M286.5 453h1M337.5 453h1M358.5 453h1M376.5 453l1 1M398 453h1M445 453l1-1M448 453h1M492.5 453v1M506.5 453h0M287 454h1M324 454h1M343 454h0M346.5 454h0M382.5 454h1M426.5 454h1M254.5 455l1-1M352.5 455l1-1M420.5 455l1 1M490.5 455h1M520.5 455h0M546.5 455h1M292.5 456h1M312.5 456l1-1M339.5 456h0M353.5 456l1-1M366.5 456l1 1M400.5 456h1M447.5 456l1-1M468.5 456h1M503 456h0M551.5 456l1 1M588.5 456l1-1M627 456v1M314 457h0M341.5 457h0M455 457l1-1M551.5 457v1M576.5 457h1M251 458v1M600.5 458l1-1M642.5 458h0M320.5 459h1M333.5 459h1M456.5 459l1 1M510 459h1M549.5 459h1M555 459l1 1M272 460l1 1M279 460l1 1M337.5 460v1M368.5 460l1 1M573.5 460h1M574.5 460l1 1M587.5 460v1M271 461l1-1M566 461l1-1M277.5 462l1 1M284.5 462l1-1M319 462v1M424.5 462l1 1M604.5 462h1M293.5 463l1-1M308.5 463v1M528.5 463l1 1M556.5 463v1M572 463l1 1M327.5 464h0M333.5 464v1M452.5 464v1M477.5 464v1M548.5 464l1-1M563.5 464l1 1M573 464v1M607 464h1M644 464l1-1M463.5 465h1M470.5 465l1 1M634 465h1M270 466h0M333.5 466h0M483.5 466h1M540.5 466l1-1M562 466l1-1M570 466l1 1M573 466h0M613.5 466l1 1M314 467h1M481 467l1 1M537 467h1M615 467l1-1M619.5 467l1-1M626 467v1M297 468h1M383 468h0M539.5 468l1-1M575.5 468h1M593.5 468l1-1M601 468h0M488.5 469v1M562.5 469h1M578.5 469l1-1M588.5 469h0M613 469l1 1M630.5 469l1-1M365.5 470l1 1M590.5 470l1 1M629.5 470l1 1M640 470v1M578.5 471h0M585.5 471h1M613.5 471l1 1M616.5 471h0M588.5 472h0M590 472l1 1M613 472h1M646 472h0M387 473h0M639 473h1M529.5 474l1-1M592 474l1 1M602.5 474h1M619.5 475l1 1M621.5 475h1M641.5 475l1-1M598.5 476h1M611 476l1 1M573.5 477l1-1M600 477l1 1M634.5 477h1M606 478l1-1M628.5 479h1M596.5 480h1M615.5 480h1M618 480h0M628.5 480v1M613 481v1M622 482v1M617.5 483l1-1M629 484l1 1M632 484h1M581.5 485v1M591.5 485h1M618 485h1M627 485l1 1M630.5 485v1M611 486l1-1M631 488h0M637 488h1M605.5 489h1M619.5 490v1M623 493h1M623.5 493l1 1M631 495h0M636 496h1M643 497l1-1M619 501l1 1M630.5 508h0M639.5 516l1 1"/><path stroke="#14288c" d="M221 493v1M376 494l1-1M222.5 496h0M276.5 496h1M336.5 496l1 1M251.5 498h1M445 498h1M565.5 498l1-1M239.5 499v1M315 499l1-1M364 499l1 1M272.5 500h0M283.5 500v1M280.5 501v1M291.5 501v1M333 501v1M246 502h0M326.5 502h0M373.5 503l1 1M223 504l1 1M499 504h1M502.5 504h1M307.5 506h0M324.5 506l1-1M428 506h1M225 507h1M271 507h1M337.5 507h1M370.5 507h1M227 508h0M243 508h0M278.5 508h1M393.5 508l1 1M450.5 508l1 1M493 508h1M298.5 509h1M323.5 509v1M347.5 509h1M385.5 509h1M450.5 509h1M348.5 510v1M435 510h1M295.5 511l1 1M296.5 511h0M340.5 511h1M367.5 511h0M371.5 511h1M373.5 511h1M376.5 511h1M529.5 511h1M537 511v1M254.5 512h0M266 512h0M310 512l1 1M452 512l1 1M349.5 513h0M365.5 513l1-1M391 513h0M405.5 513h0M286 514h0M316 514l1-1M324 514l1-1M348.5 514v1M404.5 514l1-1M529.5 514v1M586.5 514v1M238 515h1M290.5 515l1 1M306.5 515v1M501.5 515h1M310 516l1-1M332.5 516h0M342 516l1 1M602.5 516h0M241.5 517h1M313.5 517l1-1M385.5 517l1-1M491.5 517h1M501 517h0M216.5 518l1 1M266.5 518l1-1M330.5 518v1M357.5 518h0M363 518v1M433 518l1-1M211 519h1M228 519l1-1M308.5 519h1M370.5 519l1-1M514.5 519h1M207.5 520v1M234.5 520l1 1M262.5 520l1 1M275.5 520h1M300.5 520l1 1M346 520l1 1M450.5 520h1M574 520l1 1M230.5 521l1 1M268 521l1-1M288.5 521v1M418 521l1 1M443.5 521h1M215.5 522l1-1M412.5 522h0M484 522h1M540.5 522l1 1M550.5 522v1M588.5 522h1M590.5 522l1 1M313 523v1M336.5 523h0M351.5 523l1 1M360.5 523h1M368.5 523h1M377.5 523h1M395 523l1-1M428.5 523h1M451.5 523v1M489.5 523h1M586 523h1M273 524h1M290.5 524l1-1M317.5 524l1 1M318.5 524l1-1M333.5 524l1 1M408.5 524l1-1M523 524h0M281.5 525l1 1M490 525h1M585.5 525l1 1M247.5 526l1-1M277.5 526h1M298.5 526l1 1M309.5 526h0M368.5 526l1-1M373 526l1 1M383.5 526h1M603.5 526l1 1M195 527h1M321.5 527v1M334.5 527h1M415 527l1-1M259.5 528h0M296.5 528l1 1M304.5 528h0M306.5 528v1M330 528h0M458 528v1M485.5 528h1M505 528l1 1M243 529l1-1M260.5 529h1M318.5 529h1M325 529l1 1M416 529h1M441.5 529l1 1M512.5 529l1-1M300.5 530h0M317 530h0M320.5 530h1M329.5 530l1 1M519 530h1M565.5 530h1M304.5 531l1 1M318.5 531h0M343 531l1-1M395 531v1M510.5 531l1 1M631.5 531h1M219.5 532h1M331.5 532l1-1M355 532v1M502 532h1M563.5 532h1M583.5 532h1M605.5 532l1-1M239.5 533v1M241.5 533l1 1M412.5 533h1M509.5 533l1 1M623 533h0M226 534h1M465.5 534v1M560.5 534h1M423 535v1M530.5 535h1M578 535h1M261.5 536h1M286 536h1M491.5 536l1-1M506.5 536h0M267.5 537l1 1M286 537v1M199 538h1M297.5 538h1M331.5 538h1M343 538l1 1M396.5 538h1M590.5 538h1M609.5 538h1M217 539h1M333.5 539v1M569.5 539h0M582.5 539h1M599.5 539v1M611 539l1 1M610 540h1M208 541l1-1M242.5 541l1-1M272.5 541h1M298 541l1 1M528.5 541v1M567.5 541h1M580 541l1 1M257.5 542l1-1M273.5 542h1M562.5 542l1-1M255.5 543h1M414.5 543h1M530 543h1M382.5 544h1M584 544h1M256.5 545v1M561 545l1 1M575.5 545l1 1M598 545h0M608 545v1M611.5 545h1M577.5 546l1 1M577.5 546h0M598 546h0M605 546h0M620 546l1-1M365.5 547l1 1M514 548l1 1M633 548h1M267.5 549h1M308.5 549l1-1M536.5 549h1M591 549h1M538.5 550v1M567.5 550h0M436.5 551v1M531 551l1-1M553.5 551l1-1M553.5 552v1M585 553v1M607 553v1M547.5 554v1M610 554h0M620.5 554v1M350.5 555l1-1M395 555h1M595.5 555v1M216 556l1 1M297.5 557l1-1M573 557l1 1M284 558h0M545.5 558h1M560.5 559l1 1M404 560v1M469 561l1-1M605.5 561h0M570.5 562v1M436 564h0M463.5 564h0M616 565v1M602.5 566v1M608 566h1M581.5 569h1M610.5 569v1M562.5 570l1 1M610.5 572l1-1M572.5 574v1M579.5 576h1M549 577l1-1M559.5 580l1-1M611.5 580v1M612 582v1M548.5 583h1M556 589h0M581.5 597h0"/><path stroke="#dcf0f0" d="M440.5 155v2M425 163v1M451.5 172v2M473 174v1M398.5 180l1 2M426.5 184l1-1M459.5 187l1-1M477.5 190l-1 2M482.5 192v1M405.5 194v1M412 194l-1 2M433.5 196l-1 2M468 197v2M466.5 202l-1 2M469 202v1M440.5 205l1 2M403.5 206v2M414.5 206l1-1M375.5 207l1 2M412.5 207v1M440.5 207l1-1M610 207v1M400 208l1-1M449 209l1-1M502.5 209v1M441.5 212l-1 2M405.5 213v1M371.5 214l-1 2M369.5 216l1-1M448 216v2M403.5 217v2M570 217l-1 2M597.5 217v1M255.5 219l-1 2M397.5 220l-1 2M450.5 220v2M561.5 221l1 2M355.5 222v1M419.5 224l-1 2M431.5 224l-1 2M389 225l1 2M529 225v1M567 225l1-1M597.5 226l-1 2M616.5 227l1-1M431.5 229l1-1M482.5 229l-1 2M391 230l1 2M451 230l1 2M392 232v2M414.5 232l1 2M355.5 233l-1 2M420.5 234v2M467.5 234v2M556 235l1-1M305.5 236l1-1M558.5 239l1 2M470.5 240v2M455.5 241v1M598.5 241l1 2M350.5 242v1M262 244v1M562 244l1 2M543.5 247l1-1M358.5 248l1-1M367.5 248v1M524.5 248v2M423 249l1-1M463 250l1-1M261.5 251v1M419 251l-1 2M568.5 251v2M381 252l-1 2M503.5 252v2M374.5 253l1-1M453.5 253l-1 2M535.5 253v1M604 253l1-1M419 255l-1 2M613.5 255l1 2M515 256l1-1M253 257v2M289.5 257l-1 2M432.5 258l1 2M364.5 259l1 2M507.5 259l1 2M470.5 261l-1 2M606.5 261l1-1M261.5 262v2M288.5 266l1-1M296.5 266l1-1M366.5 266l1-1M424 266v1M467.5 266v1M246 267v2M561 267l1-1M303 268l1 2M348.5 268v2M279.5 269l1-1M558 271v2M374 272l-1 2M246.5 273v1M299.5 273v1M460.5 273l1-1M540 275l-1 2M261 276v1M305.5 276l1-1M428.5 276v2M446.5 276v1M490.5 276l1-1M277.5 277l1 2M346.5 277v2M455 277v1M408.5 278v1M251 279l1 2M437.5 279l1-1M460 279l1-1M293.5 280v2M539.5 283v2M544.5 283v2M639 283l1 2M414 284v1M458 284l1 2M590.5 284l-1 2M425.5 286v1M589.5 286l-1 2M283.5 287l-1 2M581 287v1M376.5 289l-1 2M318.5 290l1-1M260 291l1-1M521 292v2M533 292l1-1M424.5 293l1-1M431 293l1-1M585.5 293l1-1M618 293v2M424.5 294l1 2M483.5 294l-1 2M403 295v1M404.5 295l-1 2M632 295v1M252 296l1-1M390.5 296l1 2M397.5 297v1M586.5 298l1-1M366 299l-1 2M434.5 299l-1 2M259 300l1-1M580.5 300v2M249.5 301l1 2M334.5 301v2M434.5 301l1 2M483 301l1 2M412 303l1-1M570.5 306l1-1M357.5 307l-1 2M453.5 307v1M451 308l-1 2M406 309v1M542.5 309v2M303.5 310l-1 2M518.5 310v1M529 310l1 2M387.5 311v2M329.5 312l1-1M582.5 312l1 2M491.5 313l-1 2M251 314v2M274.5 314l1-1M296.5 314v2M426 314l-1 2M388 315l1 2M454.5 315l1-1M517 315l1 2M392.5 316l-1 2M631.5 316l-1 2M290.5 317v2M303 317v2M311 317l1 2M422 317v1M522.5 317l1-1M245.5 318l-1 2M309.5 318l1 2M448.5 318l1-1M299.5 319l-1 2M384.5 319l1 2M449.5 319l1-1M514.5 319l-1 2M539.5 319l1 2M280.5 320l1 2M435.5 320l1-1M480.5 320l1 2M510 320v2M541 320l1 2M288 321v2M300 321l1-1M404.5 321l1 2M641 321l-1 2M327 322l-1 2M390.5 322l1 2M363.5 323l1-1M297.5 324v2M331.5 324v2M395.5 325l1-1M539.5 325v2M374.5 326l1-1M479.5 327l-1 2M554.5 327l1 2M469.5 328l1-1M560 328v2M479.5 329v1M500.5 329v2M264.5 330v2M469.5 330l1-1M546.5 330l1-1M262.5 331l1-1M412 331v1M566 331l1-1M324.5 332l1 2M560.5 332l-1 2M412.5 333v2M545 333l1 2M578 333v1M305.5 334l1 2M254.5 335v2M273 335l1-1M424 335l1-1M435.5 335l1 2M357 336l1-1M392.5 336v1M435 336l-1 2M450.5 337l1-1M595.5 337v2M610.5 337l1-1M517.5 339v1M300.5 341h1M625 342h1M521.5 344l1-1M506.5 346l1-1M550.5 346v1M555 346l1-1M425.5 347l1-1M589.5 349h1M597.5 349l1-1M624.5 351h0M609 352l1 1M496.5 353v1M611.5 355h1M605 356h0M636 362l1 1M611.5 369v1"/><path stroke="#2878f0" d="M312.5 457h1M425 460h1M251 461h0M297 461h1M351.5 461h1M466.5 463h1M477.5 463v1M319.5 464h0M281 465l1-1M428.5 465h1M247.5 466h0M398 466h1M431.5 466l1-1M503.5 466l1-1M239.5 467h1M283.5 467h1M368 467h0M382.5 467h1M533.5 467h0M319 468h1M401.5 468h1M377 469h1M474.5 469h0M510 469h0M572.5 469h0M253.5 470h1M346.5 470h1M405.5 470l1 1M413 470v1M308 471l1-1M321.5 471l1 1M455 471l1-1M522 471l1 1M257.5 472h1M288.5 472h0M301.5 472h1M500.5 472h1M224.5 473h1M227.5 473v1M345 473l1 1M394 473h1M417.5 473l1 1M421 473v1M467 473h0M544 473l1 1M212.5 474l1-1M282.5 474h1M297 474l1-1M381 474v1M482.5 474l1-1M536 474l1 1M544 474l1-1M227 475h0M245.5 475l1 1M322.5 475h1M411 475l1-1M527 475h1M552 475h1M258 476l1 1M291.5 476l1 1M297.5 476h0M305.5 476h0M336 476v1M394 476l1 1M428 476h1M447.5 476l1 1M478 476l1-1M279.5 477h0M342.5 477l1 1M363.5 477h1M431.5 477h1M441 477l1 1M457 477l1 1M458.5 477h1M460 477h0M519 477l1 1M223 478l1-1M271 478v1M300 478v1M397 478h1M553.5 478h1M567 478v1M208.5 479v1M236.5 479l1-1M263.5 479h1M291.5 479v1M384.5 479h1M427 479l1 1M490.5 479l1-1M282.5 480l1 1M296.5 480h1M357.5 480h0M364 480v1M385.5 480h1M399.5 480l1-1M421.5 480h1M459.5 480h0M532 480h0M208 481l1-1M308 481v1M334.5 481h1M401.5 481h1M519.5 481h0M571.5 481h0M250.5 482h0M288.5 482h1M299 482h0M306.5 482h1M325 482l1 1M341.5 482h0M359.5 482l1-1M386 482l1-1M425.5 482h1M234.5 483v1M255.5 483v1M402.5 483h1M434 483l1-1M227.5 484h1M244.5 484h1M414.5 484l1-1M520.5 484l1-1M234.5 485v1M234.5 485h1M242.5 485v1M270 485h0M320.5 485h1M396 485v1M458.5 485h0M473.5 485v1M487.5 485l1 1M452 486l1 1M542.5 486h1M555.5 486v1M201.5 487l1-1M340 487h1M348.5 487v1M379 487h1M382.5 487l1 1M454.5 487h1M504.5 487l1 1M520.5 487l1 1M603.5 487v1M197.5 488h1M288 488h1M340.5 488l1 1M365 488v1M431 488h0M489.5 488l1 1M243.5 489h1M369.5 489v1M410.5 489l1-1M505.5 489h1M594.5 489h1M311.5 490v1M353.5 490h1M366.5 490l1-1M406.5 490l1-1M445.5 490l1 1M550 490h1M345 491v1M346.5 491v1M494 491l1 1M533.5 491l1 1M541.5 491h1M216.5 492h1M264.5 492h0M375 492l1-1M564.5 492l1-1M567.5 492h1M590.5 492l1-1M274.5 493h0M299 493h0M318 493h1M348 493l1 1M353 493l1-1M417 493l1-1M527.5 493l1 1M561.5 493h1M277 494h0M291 494h1M328 494h0M343 494v1M495 494h1M548.5 494l1-1M317.5 495l1-1M331 495h0M569.5 495v1M272 496l1 1M275 496v1M396 496h1M231.5 497h1M378.5 497h1M557.5 497h1M303.5 498l1-1M379 498l1-1M459.5 498l1-1M614.5 498v1M235.5 499l1-1M472.5 499h1M477.5 499l1-1M533.5 499l1-1M610.5 499h1M411.5 500l1-1M523.5 500h1M416.5 502h1M590.5 502h0M598 502h0M541 503h1M613.5 504l1-1M643.5 504l1-1M576.5 505h1M587 505h1M610.5 505h1M363.5 506l1-1M612.5 506h1M628.5 506l1-1M631.5 506h1M620.5 507h1M574.5 508h1M588.5 508v1M644 508h0M416 509h0M504 509l1-1M592.5 512l1-1M599 513h0M627.5 515h0M641 516h0M622.5 517h0M635.5 517v1M604.5 518v1M629 519h0M644 522h0M625 523l1 1M634 523h1M638.5 524h1M643 531v1M644.5 531l1 1M642.5 537h0"/><path stroke="#6478f0" d="M255 500l1 1M235.5 508h1M388.5 508h0M270 509v1M559.5 510v1M373.5 511v1M490.5 511l1 1M231.5 512l1-1M388.5 512l1-1M246 513l1-1M322.5 513l1 1M230.5 514h1M279.5 515v1M297.5 515h0M407.5 515v1M412.5 515h0M214.5 516v1M305 516v1M271 517l1-1M304.5 517l1 1M351 517h1M366.5 517h0M439 517l1-1M275 518v1M241.5 519l1-1M322 519v1M410.5 519l1-1M419.5 519h1M231 520l1-1M452.5 520h1M227 521l1-1M241.5 521h0M276.5 521l1-1M284.5 521h1M380.5 521v1M413.5 521l1-1M250.5 522l1 1M343.5 522l1 1M345 522l1-1M397 522l1-1M447.5 522h1M531.5 522l1 1M200.5 523l1 1M304.5 523h1M384 523h1M283.5 524l1-1M304.5 524h0M366 524l1-1M502 524h1M231.5 525v1M240.5 525l1-1M257.5 525l1-1M315.5 525l1 1M346 525l1 1M358.5 525l1 1M421.5 525l1-1M284.5 526v1M375.5 526l1 1M449.5 526h0M459.5 526h1M242 527l1 1M265.5 527h0M280.5 527v1M339.5 527l1 1M403 527l1 1M588 527h1M212 528l1 1M219 528h1M227 528h0M251.5 528h1M256.5 528h1M337 528h1M337.5 528l1 1M385 528l1 1M402.5 528h1M478.5 528l1 1M527.5 528v1M555.5 528l1 1M363 529h1M428 529h1M529 529v1M232 530h0M398 530h1M427 530v1M197 531v1M297.5 531h1M338.5 531l1 1M527.5 531h0M584.5 531v1M266.5 532l1-1M288.5 532h1M317.5 532h0M342.5 532h1M314.5 533h1M387.5 533l1-1M216 534v1M227.5 534h1M232.5 534v1M235.5 534h1M262.5 534h1M278 534h1M288.5 535h1M418 535h1M558.5 535h1M223.5 536h0M264 536v1M292.5 536l1 1M302.5 536l1 1M329.5 536l1 1M350.5 536h1M219.5 537h1M224 537h1M295 537h1M316.5 537l1 1M503 537l1 1M218.5 538h0M221.5 538h0M242.5 538h0M299 538h1M326.5 538h1M491 538h1M521.5 538l1 1M526 538v1M570.5 538h0M223.5 539h1M235.5 539h1M296.5 539v1M586.5 539h1M550.5 540h1M213.5 541l1-1M454 541l1-1M496 541v1M548.5 541h0M240 542h1M253.5 542v1M305 542h1M336 542h1M563.5 542h1M216.5 543l1 1M224.5 543h1M228.5 543h0M225 544l1 1M245.5 544v1M269.5 544v1M296.5 544h1M394.5 544l1 1M477.5 544h1M620.5 544h0M262.5 545l1 1M222.5 546h1M244.5 546h0M506.5 546h0M579 546v1M547.5 547l1-1M573 547v1M212.5 548h1M600.5 548h1M390 549l1-1M585.5 549h1M600 549h1M618 549l1-1M224 550h1M531.5 550l1 1M568.5 550l1-1M578 550h0M589 550h0M251 551h1M606.5 551h1M625.5 551v1M478 553v1M575.5 553v1M631 554h0M216.5 555h1M237 555v1M591 555v1M605.5 555h1M358 556v1M413 556l1 1M534.5 556l1 1M507.5 557l1 1M565.5 557v1M567 558h1M448.5 559l1-1M602 559h1M572.5 560l1 1M626.5 561h0M462.5 562h1M557.5 562v1M575.5 562l1-1M572.5 563l1-1M587 564h1M302.5 565h1M562.5 565h1M418 566l1 1M606.5 566l1 1M360.5 568l1 1M473.5 568h1M618.5 568h1M449 569h1M597.5 569l1 1M454.5 571l1-1M491.5 571l1-1M363 572h1M595.5 573h1M602.5 573v1M571 575l1 1M534.5 576h1M562.5 576h1M596 576h1M561.5 578h1M597.5 578h1M536.5 579h0M585 580l1 1M549.5 582l1-1M533.5 583h1M582.5 583h1M522 584h0M532.5 585l1 1M529.5 586h0M530 586h1M595 587v1M545 588h1M581.5 589l1 1M600 589h1M547.5 591h0M567 592h1M573.5 592l1-1M578.5 600v1M568.5 601l1-1"/><path stroke="#3cc8c8" d="M440.5 408h1M363.5 409v1M239.5 411l1-1M248 412l1 1M391 412h1M382.5 414h1M413.5 414h1M244.5 415l1-1M417.5 416h0M450.5 416h1M538.5 416h1M302.5 417l1 1M275.5 418l1-1M366 418h0M271 419l1 1M454.5 419l1-1M470.5 419l1 1M483 419l1 1M512 419h1M525.5 419v1M256.5 420h1M320.5 420v1M400.5 420v1M194.5 421l1 1M326.5 421h1M352.5 421v1M362 421h1M413 421h1M441.5 421l1-1M452.5 421l1-1M292 422v1M337 422v1M434.5 422l1-1M408.5 423l1 1M420.5 423h0M434 423h0M438.5 423h1M306 424l1-1M479.5 424h1M516.5 424h1M252.5 425l1-1M264.5 425h0M328.5 425h0M338.5 425v1M369 425l1-1M384.5 425h1M380 426h0M452.5 426l1 1M459 426h1M488 426h1M488.5 426l1-1M281.5 427v1M356.5 427h1M387.5 427v1M456 427h1M311.5 428h1M316 428l1-1M340.5 428l1 1M389 428h1M617.5 428v1M206 429h0M392 429v1M454.5 429v1M473.5 429h0M612 429h1M433.5 430h1M438.5 430h0M439.5 430v1M600 430h1M220.5 431l1 1M272.5 431h1M368 431l1-1M457.5 431v1M460.5 431h1M462.5 431v1M466.5 431l1 1M243.5 432l1-1M267 432h1M558.5 432l1 1M565 432l1-1M323.5 433h1M382.5 433h0M410.5 433l1-1M411 433h1M311 434l1 1M328 434l1-1M396.5 434l1 1M482.5 434h0M195.5 435l1 1M264.5 435h0M283.5 435v1M284.5 435v1M340.5 435l1 1M347.5 435l1 1M539.5 435h1M253.5 436h1M352 436l1 1M471.5 436h1M486.5 436l1-1M342.5 437v1M447 437v1M483 437h1M525 437v1M547.5 437h1M285 438v1M313 438l1-1M558 438h0M576.5 438v1M593 438h1M347 439h0M322 440l1 1M335.5 440h1M415.5 440h1M418.5 440v1M483 440h1M484.5 440h1M527.5 440l1-1M528.5 440h1M560.5 440h0M585 440h1M610.5 440l1 1M322 441h0M369 441h0M472 441h0M484.5 441l1-1M295.5 442l1-1M350.5 442h1M392.5 443h1M572.5 443l1-1M360.5 444v1M395.5 444h1M593.5 444l1-1M298.5 445h1M322.5 445l1 1M467 445l1-1M541.5 445h1M563.5 445h1M595.5 445h1M506.5 446h1M231.5 447h0M247.5 448h0M569 448h1M612 448l1 1M618.5 448v1M236.5 450l1-1M550 450h0M555.5 450l1 1M607.5 450h0M406.5 451h1M551.5 451v1M566.5 451h1M567.5 451v1M340.5 452v1M599 452h1M601 452l1-1M619 453l1-1M341.5 454h1M482.5 454h0M562 454h1M611.5 454h0M612.5 455l1 1M574 456h1M586.5 456l1 1M613.5 456v1M599 458l1 1M612 458l1 1M640.5 458h1M341.5 459v1M634.5 459h1M599 460l1 1M623.5 460l1-1M644.5 460v1M615 462h1M631 464h1M620.5 466h1M598.5 467h1M617.5 467h0M633.5 468l1 1M591 472l1-1M608.5 473h0M642 474h0M607 475l1 1M615.5 475v1M645.5 475l1 1M627 476h1"/><path stroke="#2878dc" d="M299.5 457h1M517.5 457h1M363.5 459h1M430.5 459v1M506 461h1M547.5 461l1-1M260.5 462l1 1M335 462l1 1M357 462l1-1M283 463l1 1M449.5 463v1M464 464l1 1M462 465h1M281 467v1M347 467l1 1M452 467h0M241.5 468v1M264 468h1M313 468h1M405.5 468h1M482.5 468l1-1M263.5 469v1M348.5 469h1M352.5 469l1-1M374.5 469h0M471.5 469l1-1M216.5 470h1M343.5 470l1-1M418.5 470h1M545 470v1M240.5 471v1M244.5 471h0M284.5 471l1-1M301.5 471l1-1M490.5 471l1 1M279.5 472l1 1M305.5 472h0M468 472l1 1M554.5 472l1-1M275.5 473v1M361 473h0M431 473l1-1M525.5 473v1M284.5 474h0M518.5 474l1 1M527 474l1-1M303.5 475l1-1M395 475h1M461.5 475l1 1M216.5 476l1-1M259.5 476v1M278 476h1M301.5 476h0M323.5 477l1-1M358 477v1M361.5 477h1M383 477v1M469.5 477h1M470.5 477h1M557.5 477h1M359.5 478h1M527 478h1M547.5 479h1M410 480h1M446.5 480h0M348.5 481h1M555 481h1M568.5 481h1M193 482h1M217 482l1 1M346.5 482l1 1M360.5 482h1M362.5 482h0M481.5 482v1M496.5 482h0M272 483h0M272.5 483h1M333.5 483v1M355.5 483h0M391.5 483l1-1M481 483l1 1M489.5 483h1M393 484h1M444.5 484h1M463 484v1M334 485h1M358.5 485h1M468 485h0M497.5 485v1M568.5 485h0M578.5 485l1-1M236 486h0M261.5 486v1M309 486l1-1M362.5 486h1M457 486v1M474.5 486l1 1M476.5 486h1M485.5 486v1M537.5 486v1M573.5 486h1M625.5 486v1M203 487h0M233.5 487v1M384 487h1M549 487h0M574 487l1-1M583.5 487v1M297.5 488v1M446 488v1M225 489v1M233.5 489h1M491 489l1 1M207.5 490v1M301.5 490h1M533.5 490h1M325.5 491v1M386.5 491v1M548 491l1 1M556.5 491l1-1M212.5 492h1M528.5 492h1M562 492l1 1M602.5 492l1-1M343.5 493l1-1M563 493v1M371 494h1M379 494l1-1M489.5 495v1M543.5 495l1-1M579.5 495h1M359.5 496l1-1M529.5 496h0M420.5 497v1M628 497v1M634 497v1M578.5 498h1M585.5 498l1 1M573.5 500h1M393.5 501v1M567 501h1M625.5 501h0M632.5 501v1M600.5 504v1M608 507h1M593.5 508h1M565 509h1M598.5 509h0M602 509h0M627.5 509h0M631.5 509l1 1M604.5 513h1M613.5 514l1-1M572 515h0M634.5 516l1-1M543.5 517l1 1M602.5 517h1M608.5 520h1M642.5 521h1M640.5 523l1 1M645 530h0"/><path stroke="#288cdc" d="M322 446v1M289.5 452l1-1M532.5 453l1 1M504 454l1-1M324 455h1M510.5 455v1M329.5 456l1 1M330 456h1M334 456v1M271.5 457h1M349 457v1M345.5 458l1 1M356.5 458l1 1M426 458v1M276.5 459l1-1M273.5 460l1 1M353.5 460l1 1M480.5 460l1-1M484.5 460l1 1M484.5 460l1 1M499.5 460h0M292.5 461v1M410.5 461h0M526.5 461l1-1M536.5 461v1M303.5 462l1-1M338 462h1M457.5 462l1 1M578.5 462l1 1M360.5 463l1-1M318.5 464h0M346.5 464l1-1M353 464l1 1M422 464h1M506 464l1-1M464.5 465l1 1M477 465h1M525 465h1M271 466v1M349.5 466h0M441 466h0M528.5 466l1-1M532.5 466l1 1M259.5 467l1-1M292 467h1M321.5 467l1 1M485 467h1M525 467h1M391 468l1-1M420.5 468h0M237.5 469l1 1M245.5 469h0M293.5 469h1M445.5 469l1-1M296.5 470v1M306 470v1M325.5 470h0M396.5 470h1M510.5 470h0M337.5 471l1-1M435.5 471h1M486.5 471l1 1M418 472h0M445 472h1M472 472h1M307.5 473l1 1M415.5 473h1M509.5 473l1-1M221 474h1M369.5 474v1M376.5 474h0M455 474l1 1M543 474v1M545.5 474v1M276 475h1M360.5 475l1 1M539.5 475v1M575.5 475h0M577.5 475v1M330 476l1 1M414 476l1-1M496.5 476h1M537 476l1-1M542.5 476l1-1M382.5 477l1 1M580 477h1M432 478l1 1M507.5 478v1M556 478v1M273 479h0M355.5 479v1M494.5 479l1-1M519 479v1M559 479l1 1M237.5 481l1 1M322.5 481h1M323 481h1M489 482h0M534.5 482l1 1M632.5 482h0M284.5 483h1M292.5 483h1M479 483h1M566.5 483h1M569.5 483l1-1M587 483l1-1M615 483l1 1M623.5 483h0M636.5 484v1M494.5 485l1 1M557.5 485h1M579.5 486h0M603 486v1M616.5 487h1M375.5 488l1 1M619.5 488v1M329.5 489l1 1M606.5 489v1M236 490h0M555 490h1M241.5 491l1-1M563 491v1M604.5 491l1 1M627.5 491v1M227 492v1M424 492l1 1M601 492h1M640.5 492h1M302 494l1 1M638 494h1M368.5 495h0M603.5 496l1 1M632 496h0M481.5 499h0M587.5 499h1M619.5 499v1M638 499l1-1M579.5 500h0M589.5 500l1 1M637.5 501v1M644.5 502h1M624.5 503v1M617.5 506l1 1M256 507l1 1M618.5 507h1M607.5 510h1M618.5 511l1-1M644.5 511h1M637.5 512h1M642 523h0"/><path stroke="#3c8cdc" d="M343.5 442l1 1M440.5 444h1M529 444h1M373.5 445v1M506.5 445h0M394 447l1 1M300 448h1M427.5 448v1M432.5 448h0M523.5 449h0M389 450l1 1M290.5 451h1M283.5 452h1M292.5 452l1-1M492.5 452h1M408.5 454h0M306 455h1M343 455l1 1M452.5 456h1M497.5 456h0M277.5 457h0M282.5 457v1M303.5 457h0M268.5 458l1 1M369.5 458h0M517.5 458l1-1M522 458h1M529.5 458h1M246.5 459h1M257.5 459l1 1M532 459l1-1M301.5 460l1 1M350.5 460l1 1M442.5 460h0M458.5 460v1M496.5 460l1-1M534 460h0M268.5 461l1 1M365.5 461h1M378 461h1M413 461l1-1M510.5 461h1M296 462v1M371.5 462v1M418.5 462h1M419.5 462l1-1M457 462h0M472.5 462h0M473 462l1 1M550.5 462h0M315 463h1M370 463v1M379 463l1-1M385 463h1M461.5 463l1 1M456.5 464h1M493 464l1 1M560 464l1-1M237.5 465h1M242 465l1 1M269.5 465l1-1M325.5 465h1M454 465h1M510.5 465l1 1M293.5 466v1M350.5 466v1M374 466l1 1M392.5 466h1M521 466l1-1M193 467h1M244 467h1M307.5 468h1M329.5 468h1M387 468h0M301 469h1M307 469v1M319.5 469h0M521.5 469h0M264.5 470h1M292 470h1M279.5 471h0M315.5 471l1 1M377 471v1M513.5 471h1M244.5 472h0M275.5 472l1 1M281.5 472l1-1M341 472v1M383.5 472v1M537 472l1 1M608 472h1M262 473h0M298.5 473h1M456 473l1-1M583.5 473h1M553.5 474h1M570.5 474v1M315.5 475v1M387.5 475h1M396.5 476v1M453.5 476h0M594.5 476l1-1M293.5 477l1-1M312 477l1 1M565 477v1M568.5 477h1M310.5 478l1-1M274.5 479l1 1M459.5 479l1-1M522 479h1M540.5 479v1M548 479v1M551.5 479h0M557.5 480l1-1M212.5 481h0M225 481h1M454.5 481l1 1M633 481l1-1M308.5 482l1-1M586 482h1M392.5 484l1 1M406.5 484l1 1M556 484h0M585.5 484h1M603.5 484v1M641.5 485h0M391.5 486v1M567 486l1-1M617.5 487h1M562 489v1M646 489v1M610.5 490l1 1M594.5 491l1 1M592 494l1 1M632.5 494h0M635.5 494v1M566.5 495h1M614.5 496h1M608.5 497v1M585.5 498l1 1M638 503l1-1M591 504l1 1M626.5 504l1 1M635.5 504h1M619 505h0M643.5 506h1M628.5 510v1M625 512h0M638.5 512l1-1"/><path stroke="#50dcc8" d="M371.5 352l1 1M460.5 354l1 1M361 358h1M317.5 361v1M470.5 363h1M525.5 363v1M287 365l1-1M409.5 365v1M509.5 365h1M257.5 366h1M329 367l1-1M429 367l1 1M294.5 368h1M407.5 368v1M497.5 368h0M255.5 369h1M278 369v1M467.5 369l1 1M264.5 370h1M272.5 370v1M285.5 370h0M352.5 370v1M420.5 370v1M520 370h0M294.5 371h0M551.5 371h0M473 372v1M257.5 373v1M283.5 373l1-1M296 373v1M304 373h0M493.5 373l1 1M501 373v1M503 373l1-1M255.5 374h0M289.5 374v1M431.5 374v1M547.5 374v1M548.5 374l1-1M249.5 375h1M358 375l1 1M298.5 376v1M372.5 376l1-1M438 376v1M465.5 376h0M485.5 376h1M483 377h1M487.5 377h1M537.5 377v1M545.5 377h0M200.5 378h1M249.5 378v1M295.5 378h1M350.5 378h1M410.5 378h1M444.5 378l1-1M470.5 378h0M247.5 379h1M259 379h1M260.5 379v1M284.5 379h0M337.5 379h0M391 379v1M451.5 379l1-1M500.5 379v1M300 380h1M323.5 380v1M363 380v1M470 380h0M270.5 381h1M285.5 381l1 1M519.5 381h1M581.5 381l1-1M262.5 382h1M301 382l1-1M416.5 382h1M482.5 382h1M519 382l1 1M618 382l1 1M363 383h1M366.5 383l1-1M367.5 383h1M427 384h1M437 384v1M473 384h1M331.5 385l1-1M359.5 385h0M512 385l1-1M584.5 385l1 1M260.5 386h0M411.5 386h1M588.5 386h1M247.5 387v1M541.5 387h0M555 387h1M286.5 388h1M466.5 388l1-1M299.5 389l1-1M491.5 389v1M602.5 389v1M620 389v1M446.5 390h1M593 390h1M351.5 391h1M562.5 391l1 1M398 392l1 1M562.5 393v1M577.5 393l1 1M545.5 394l1 1M612.5 394h1M271.5 395l1 1M378.5 395l1-1M567.5 395h1M561 396h0M591.5 396v1M555.5 398v1M593.5 398l1 1M492.5 402h1M564 403v1M608.5 403l1-1M602 404h0M607.5 405v1M624.5 405v1M549 406v1M569 406h1M580 406h1M302.5 407h1M621 407h0M603.5 408h1M574 409l1-1M610.5 410h1M609 411h1M638.5 411h1M634.5 413h1M618 416l1 1M611.5 423h1M610.5 424v1"/><path stroke="#283c8c" d="M464.5 474h0M230 475l1 1M372 476h1M210 481v1M221.5 481l1 1M355.5 481l1 1M289 483l1 1M284.5 484h0M381 484h0M321.5 485h0M398 485v1M274.5 486h0M345.5 486l1-1M456.5 486v1M501.5 486h1M405.5 487v1M545.5 487l1-1M478.5 488h1M276 489l1 1M319 489h1M329.5 490h1M361 491h1M367.5 491h1M427 491h1M442.5 491h0M204.5 492l1 1M353 492h1M477.5 492h0M529.5 493l1 1M226.5 494l1 1M283.5 494h0M372 494v1M373.5 494l1-1M439.5 494v1M282.5 495h0M366 495h1M384.5 495h0M409.5 495v1M464.5 495v1M520.5 495h0M524.5 495l1-1M525.5 495v1M237 496l1-1M237.5 496v1M255 497h1M277 497l1-1M308.5 498l1-1M316.5 498v1M453.5 498v1M484.5 498h1M526 498l1 1M531.5 498l1-1M586.5 498l1-1M282.5 499v1M343.5 499h1M371 499h1M377 499v1M391.5 499h1M421.5 499h1M540 499l1 1M596.5 499h0M600.5 499h1M211.5 500v1M239.5 500h1M245.5 500h1M281.5 500v1M331.5 500h1M351.5 500v1M345.5 501v1M397 501l1 1M448.5 501h1M488.5 501v1M285.5 502l1-1M295.5 502h1M310.5 502l1 1M390 502h1M392.5 502l1 1M528.5 502h1M216.5 503h1M242 503v1M570.5 503h1M216.5 504h1M254.5 504h1M367 504h1M414 504l1-1M606.5 504h1M367.5 505l1 1M539.5 505h1M588 505h1M241 506l1-1M258.5 506h0M366 506h0M387.5 506l1 1M492.5 506h1M581.5 506l1-1M237.5 507h0M414 507h1M460 508h1M318.5 509l1-1M290 510h0M411 510h1M470.5 510h1M577.5 510v1M602.5 511h1M556.5 512l1-1M609.5 515l1 1M643 515h0M575 516l1-1M264 517h1M560.5 517l1 1M595 517h1M606.5 520v1M607 520l1-1M572.5 521l1 1M575.5 521h0M391.5 523h1M640 525h0M641.5 527l1-1M628.5 528l1 1M628.5 529l1 1M629.5 531h1M553 533h0M606 538l1 1M603 546v1"/><path stroke="#648cf0" d="M464.5 486l1 1M506 488l1 1M375.5 492h0M434.5 492v1M242.5 493l1-1M438 494l1-1M220.5 496l1-1M386.5 497h1M402.5 497h1M462.5 497l1 1M255.5 498l1 1M287 498l1-1M295 499l1 1M330 499h1M465.5 499v1M212.5 500l1 1M245.5 500l1 1M316.5 500h1M432.5 501h0M529.5 501h1M530.5 501h0M236 502l1-1M345 502v1M369.5 502l1-1M229.5 503l1 1M303 503h1M306.5 503h1M509 503h1M298.5 504l1-1M358.5 504l1-1M536 504h1M329.5 505h1M371.5 505v1M392.5 505v1M420 505l1-1M440.5 505h0M463.5 505l1 1M287 506h1M352.5 506h1M392 506l1 1M394 506v1M212 507h1M514.5 507v1M544 507l1 1M287 508l1 1M416.5 508h0M497.5 508h1M630.5 508l1-1M358.5 509l1 1M383.5 509v1M488.5 509v1M549.5 509h0M261.5 510h1M300.5 510l1 1M306.5 510l1-1M310.5 510h1M420 510h0M516.5 510h1M347 511h0M384.5 511l1-1M416.5 511l1-1M197.5 512v1M381 512h1M389.5 512h1M434 513l1 1M373.5 514h1M470 514h0M303.5 515h1M504.5 515h0M249 516v1M344.5 516l1 1M385 516h0M268 517h1M311.5 517l1-1M388.5 517h1M396.5 517l1-1M467.5 517h1M528.5 517h1M223.5 518h1M377.5 518l1-1M429.5 518l1 1M575 518l1 1M324 519h1M269.5 520h0M328.5 520h1M495.5 520v1M521.5 520l1-1M248 522v1M310 522h1M262.5 523h1M296 523v1M605.5 523h1M235.5 524v1M246.5 524v1M483.5 524h0M559.5 524v1M244.5 525v1M451.5 525h1M589.5 525h0M605.5 525h1M434.5 526h1M503.5 527l1-1M570.5 528h0M599 529h1M601.5 529h1M365.5 530h1M607.5 531l1-1M609.5 532h1M621 532v1M587.5 534l1 1M604 534l1-1M553.5 535h1M592.5 535h0M633.5 535h1M583.5 538l1-1M593.5 538h1M642.5 538h0M574.5 540l1-1M628.5 540l1-1M597.5 542l1 1M570.5 546h1M615 546l1-1M611.5 552v1"/><path stroke="#64dcc8" d="M402.5 342l1-1M424.5 343h1M515 347h0M434.5 348h1M330.5 349h1M296.5 350h1M309 350l1 1M442.5 353v1M324.5 354l1-1M297.5 355l1-1M337.5 356l1-1M499 357h1M286.5 358h1M298.5 358v1M347.5 358l1-1M391.5 358h1M453.5 358h1M429 359v1M461.5 359l1-1M501 359h1M350.5 360v1M383 360l1 1M426 360h1M486 361l1-1M526 361h1M536.5 361v1M341.5 362l1 1M269 363l1 1M365 363h1M366.5 363l1-1M519 363l1-1M251 364h1M338 364l1-1M375.5 364l1-1M436 364l1 1M336 365v1M367 365l1 1M443.5 365h0M330.5 366l1 1M407.5 366v1M479.5 366l1 1M266.5 367h0M317 368l1 1M391.5 368h1M400.5 368l1-1M493.5 368v1M386.5 369h1M302.5 370v1M445.5 370v1M460.5 370h1M461.5 370h0M371 371h1M408.5 371l1 1M433 371v1M259 372h1M297.5 372v1M350 372v1M544 372v1M302 374h0M352.5 374l1 1M403.5 374v1M429.5 374v1M458 374l1-1M464.5 374h1M552.5 374h1M350.5 375h0M360.5 375l1-1M396 375h0M472 375h1M287 376v1M361 376h0M371.5 376h1M421 376v1M304.5 377v1M374.5 377h0M450.5 377h0M469.5 377h1M544.5 377h0M230 378h0M275.5 378l1 1M294.5 378h0M315.5 379h0M404 379l1-1M280 380l1-1M426.5 380h0M454.5 380h1M483 380h0M603 380h0M611.5 380l1-1M314.5 381h1M552.5 381h0M265 382h0M317.5 382l1-1M442.5 382h0M538 382h1M548.5 382l1 1M582.5 382h1M575.5 384h0M598.5 385l1 1M609.5 385l1 1M260.5 386l1 1M532.5 387v1M338 389h1M552.5 389h0M601 389h1M404.5 390v1M565 391v1M624 392v1M635.5 392h1M570 393l1-1M589 393h1M608.5 393l1-1M639.5 393h0M614.5 396h0M599.5 397h1M614.5 398v1M629 399v1M636 399l1 1M605.5 400l1-1M546 404h0M622.5 404h0M617.5 409h1"/><path stroke="#3cc8dc" d="M261 419l1-1M337.5 419h1M432.5 419l1 1M448 421h0M287 423l1 1M253.5 424h1M360.5 424l1 1M395.5 424l1-1M460.5 424l1-1M405.5 425l1-1M451 425l1-1M413.5 426h0M456.5 426v1M430 427h1M517 427h0M408.5 428l1-1M387 429l1 1M419.5 429l1 1M278.5 430l1 1M398.5 430l1 1M502.5 430h0M425.5 431h0M462.5 431v1M438.5 432v1M257.5 433h1M268 433h1M348.5 433h0M390.5 434l1-1M452 434h0M291.5 435l1 1M359 435h1M463 435l1-1M595.5 435h1M445.5 436v1M501.5 436v1M563.5 436h1M599.5 436v1M337 437l1-1M552 437h0M564.5 437h1M361.5 438h1M368.5 438h1M452.5 438h0M455.5 438l1 1M567.5 438v1M252.5 439v1M299.5 439h1M351.5 439h0M489.5 439l1 1M337 440l1 1M367 440h1M518.5 440h1M579 440h1M315 441l1-1M489 441h1M258.5 442h1M265 442l1 1M400 442v1M493.5 442h1M305.5 443l1-1M334 443h0M437 443l1 1M513 443v1M599.5 443l1 1M354.5 444h0M307 445h0M367 445h0M521.5 445v1M525.5 445v1M277.5 446h1M541.5 446h1M400.5 447h1M406.5 447h1M486.5 447h1M252 448h1M356 448v1M449.5 448h0M455 448h0M541.5 448h1M341.5 449v1M391.5 449h1M565.5 449h1M596 449h1M340.5 450l1-1M457.5 450v1M567.5 450h1M592.5 450h1M472.5 452l1-1M237.5 453l1-1M311.5 453h0M341 453h0M453.5 453h0M544.5 453h1M237.5 454v1M254.5 454h0M250 456h1M311.5 457h1M534.5 457h0M571 457v1M610.5 457h1M627.5 457l1 1M419 458h1M641 458l1-1M603.5 461h1M293.5 463h1M591.5 465l1 1M595.5 465h1M633 467h1M641 467v1M629.5 468h1M618.5 472l1-1M615.5 473l1 1M625 473h1M627.5 473v1M587.5 477v1M632.5 478h0M633.5 479h1M632 493h1"/><path stroke="#143cdc" d="M284.5 510h1M384.5 512h1M329.5 513h0M359.5 514l1-1M357 515h0M415 517h1M306.5 519h0M316.5 519l1 1M352.5 519h1M354 519v1M364.5 519h0M485.5 519v1M214.5 520h1M298 520v1M326 520h1M369.5 520h1M384.5 520l1-1M265.5 522l1-1M334.5 522l1 1M448 522l1 1M485 522h1M250.5 523v1M275.5 523h1M282.5 523h1M319 523l1 1M464 523l1 1M343.5 524l1-1M212 525l1 1M322.5 525l1-1M389 525h0M315.5 526l1-1M240.5 527l1 1M344.5 527l1-1M350.5 527v1M399.5 527l1 1M403.5 527h0M422 527h1M438 527h1M493 527h1M320 528h0M427 528h0M502 528l1 1M232.5 529h1M332 529h0M388 529v1M414 529h1M458.5 529l1-1M543 529v1M271.5 530h0M535.5 530h0M538.5 530h0M334.5 531v1M383 531h1M451.5 531l1 1M227 532l1 1M268.5 532h1M341.5 532h1M362 532h1M547.5 532l1 1M220.5 533l1 1M250.5 533h1M301 533h1M321.5 533h1M514 533v1M285.5 534h1M333 534l1-1M564.5 534v1M244.5 535v1M257 535h1M331 535l1-1M484.5 535v1M231.5 536v1M256.5 536h1M282 536l1-1M348.5 536l1 1M490 536v1M248.5 537h0M249.5 537l1-1M276.5 537v1M387 537h1M508 537h0M512.5 537l1 1M252 538h1M302.5 538v1M574 538h0M583 538l1 1M222.5 539l1-1M245 539v1M246 539h0M261.5 539l1-1M272.5 540h1M583.5 540h1M454.5 541h0M499.5 541h1M535 543h1M563 544h1M220.5 545l1-1M543 545h1M317 547l1 1M550 547h0M549.5 551l1 1M612 551v1M230.5 552l1 1M568.5 552l1 1M513 553h1M575.5 554h0M583 555v1M595 555v1M603 555h1M509 558h1M560.5 559v1M602 560h1M626.5 563h1M618 564v1M584.5 576h0M601.5 578h1"/><path stroke="#a0f0dc" d="M260.5 317l1 2M381 320l1-1M285.5 323l1-1M418.5 324l1 2M535 327l1-1M546 327l-1 2M431.5 329l1-1M386 332l1-1M326.5 334v1M368.5 335l1-1M421.5 335l-1 2M304 337l1-1M331 337l1-1M413.5 337l1-1M414.5 338l-1 2M538.5 338v2M326 339v1M503.5 340h1M369 341v1M464 341h0M531 341h0M360.5 342v1M471.5 342l1 1M336.5 343v1M328.5 344v1M465.5 344h0M487 344v1M311.5 345h1M368.5 345h0M525.5 345h0M451.5 346l1 1M573 346h1M265 347l1-1M302.5 347l1 1M469.5 347h1M322.5 348h0M396.5 348l1 1M452.5 348l1 1M553.5 348l1 1M494.5 349h0M369.5 350v1M412.5 350l1 1M441.5 350h0M493.5 350h1M328 351h0M389.5 351h1M419.5 351l1-1M473.5 351l1 1M565.5 351h1M255.5 352l1 1M454.5 352v1M599.5 353v1M315.5 354h0M396.5 354h1M540 354h1M583.5 354l1-1M269 355h1M282 355h1M561.5 355h1M576.5 357h1M608.5 357l1 1M289.5 358h1M563.5 358h0M610.5 358l1 1M477 359h1M434.5 360h1M563.5 360h1M611.5 360l1 1M379.5 361h0M402 361l1-1M560.5 361l1 1M581 361l1 1M587.5 361h1M367.5 362l1-1M361 364h0M580 364h1M595.5 364l1-1M564 365h1M580.5 367l1-1M600 369h0M592.5 370h1M583.5 371h1M590.5 372l1 1M521.5 373l1 1M620 374v1M591.5 376v1M605.5 376h1M604.5 378h0M623 379l1 1M633.5 379h0M585.5 380l1-1M586 382h0M599.5 382h1M627 384v1M633.5 389v1M641 393h0"/><path stroke="#8cf0dc" d="M355.5 325l-1 2M299.5 329v1M352.5 336v1M525 336l1-1M538 337v2M333 338v2M496.5 338l1-1M250.5 339l-1 2M261.5 339l1-1M338.5 341v1M350 341h0M411.5 341l1 1M251.5 342l1-1M473.5 342l1 1M273 343h1M365.5 343v1M413 343v1M251.5 345l1-1M257 345h0M446 345v1M398.5 346h1M419.5 347v1M460 347h0M282.5 348l1 1M497.5 348v1M269 349h0M325 349h0M462.5 349h0M518 350v1M469.5 351h1M290 352h0M319.5 352h0M425.5 352h1M520.5 352h1M321.5 353h0M463 354v1M562.5 354h1M566 354h0M374 355l1-1M391 355h1M400.5 355h0M421.5 355l1 1M555 355l1 1M562.5 355l1 1M278 356h1M312 356h0M469.5 356l1 1M469.5 356h1M250.5 357v1M357.5 357l1 1M393.5 357h0M493.5 357l1-1M337 358h1M357 358v1M395.5 358h1M495.5 358l1 1M617.5 358h1M277 359h1M384 359l1 1M454.5 361h1M469.5 361v1M473.5 361v1M532.5 361l1-1M545.5 361h0M330.5 362h1M384.5 362h1M504.5 364h1M538.5 364h1M545 364h1M404.5 365h1M564.5 367l1 1M579.5 367h1M311.5 369h0M376.5 369l1 1M417 369l1 1M562 370h1M609 370l1 1M562.5 372h1M590.5 374h1M599.5 377l1 1M591 379h1M578 380h1M601.5 381v1M606.5 382l1-1M627.5 382l1-1M570 383h1M603.5 383h0M632.5 383h1M621.5 388h0M640 388v1M629.5 389v1M618 390h1M614.5 400l1 1"/><path stroke="#78a0f0" d="M296.5 480h0M345.5 483h1M271.5 484h1M511 484h0M318.5 486l1-1M326.5 486l1-1M549 486h1M333 487l1-1M397.5 487h1M470.5 488v1M541.5 489v1M221.5 490l1-1M254.5 490h0M280.5 490l1 1M474.5 490h1M508 491h0M552.5 491h1M231.5 492l1-1M351.5 492v1M354.5 492h1M537.5 492h0M277 493l1-1M472.5 494h1M244.5 495h0M447.5 495l1 1M266 496h1M252.5 497h1M304 497h1M408 497h1M491 497l1 1M304 498l1 1M347.5 498v1M473.5 498h0M508 498v1M334.5 499l1-1M268 500l1 1M309 502h1M530.5 502l1-1M300.5 503h1M345 503v1M390 504v1M404.5 504l1 1M532.5 504h1M247.5 505v1M487.5 505h1M581.5 505h1M262.5 506h0M467.5 507h1M266 508v1M564 510h1M356 513l1 1M575.5 516h1M587.5 518h1M617.5 518l1 1M326.5 519l1 1M621.5 520v1M639.5 521l1 1M618.5 524v1M626.5 527v1M634.5 528v1M632.5 532h0M604.5 541l1-1"/><path stroke="#78dcc8" d="M456.5 342h1M389 345h1M259 347l1-1M361.5 347l1-1M510 350h1M317.5 352h1M429 352l1 1M385.5 353l1-1M308.5 354h1M378.5 355l1-1M431 356h1M480.5 356h1M458.5 357h1M498.5 357h1M270.5 358h1M368.5 358h1M382.5 358l1-1M502 359h1M260 360h0M394.5 360v1M424 360v1M547.5 360h0M283 361v1M434.5 361h1M309.5 363l1 1M302.5 364l1 1M417.5 364v1M425.5 364v1M458 364h1M254.5 365v1M473 365l1-1M438.5 366l1 1M451.5 366h1M480.5 366l1 1M363.5 367l1-1M412.5 370h1M574.5 371h1M345 372l1 1M436.5 372h1M535.5 373l1 1M562.5 373h1M281 374v1M338.5 374h1M363.5 374h0M540.5 374l1 1M546 375v1M363.5 377l1 1M453.5 377l1 1M293.5 378l1-1M562.5 378l1-1M566 380h1M582.5 381v1M542 382h0M587.5 385l1-1M597.5 391l1-1M615 392l1 1M605.5 393l1 1M578.5 395l1-1M570 405h1M625 406h1M621 428l1 1"/><path stroke="#78f0dc" d="M410.5 335v1M288.5 338l1-1M437 340h0M497 341l1-1M280 342v1M418.5 344h1M454.5 345h0M302 346h1M314 348h1M442.5 349v1M543.5 349h1M318.5 353v1M353.5 353l1-1M265.5 355h0M248.5 356h1M464 356l1 1M534 356l1 1M263 357v1M407 359l1-1M502.5 359l1-1M338 360v1M371.5 360v1M519 360h0M529.5 360v1M287.5 361l1 1M416 361l1-1M431.5 361l1-1M544 361h1M294.5 362l1-1M417 362h0M456.5 363l1-1M458.5 363h0M486 363l1-1M591.5 363h1M295.5 364l1 1M532.5 364l1 1M248.5 365h0M406.5 367v1M536.5 367h0M312 368l1-1M458 368h1M389 369v1M464.5 369l1-1M337 370h0M530.5 370h1M312.5 373v1M345.5 373h1M354 374l1-1M571 374h0M319 379l1-1M615.5 383h1M624.5 384h1M645 384h1M644.5 386v1M609.5 388h0M636 398l1 1M628 408h1"/><path stroke="#b4f0dc" d="M468.5 324l-1 2M265.5 327v2M266.5 328l-1 2M290.5 328l1 2M403.5 330l1 2M496.5 330l1-1M482 331v1M253.5 332l1-1M258.5 332v1M367 332v2M385 334l1 2M317.5 335l1-1M514.5 335l-1 2M361 336v2M289 338l-1 2M364.5 339v2M378 339l-1 2M384 339l1 2M492.5 339l1 2M534 339l-1 2M548.5 339l-1 2M342.5 341h1M423 341v1M460 341h0M272 342h0M602 342l1 1M538.5 343v1M563.5 343h1M291.5 344l1-1M361.5 344l1-1M383.5 345l1 1M500 346l1-1M513 346v1M520.5 347v1M357 349l1 1M253.5 350v1M366 350l1-1M436.5 350l1 1M307.5 351h1M461.5 351h1M561.5 353v1M585 354h1M274 355l1-1M609.5 355l1 1M342.5 359l1 1M290 360h0M631 361h1M605.5 363l1-1M587 365l1-1M588.5 365l1 1M613 381h1M640.5 381l1 1M610.5 385l1-1M616.5 391h1M630 391h1"/><path stroke="#c8f0f0" d="M441.5 311v1M259 313l1-1M304.5 313l1 2M246.5 314l-1 2M401.5 314l1-1M488.5 316v2M470 319v1M290.5 322l1 2M292.5 322l-1 2M429.5 322l-1 2M464.5 323l1-1M523.5 325v2M304 326v1M512 326l-1 2M567.5 326v2M367 329l1 2M405.5 332v1M297.5 333l1-1M341 333l1-1M454.5 333v2M380.5 334l-1 2M452.5 334l1-1M294.5 335l1 2M367.5 335v1M375.5 335v1M405.5 335l1 2M537 335l1 2M463.5 337l1-1M451.5 338l1-1M545 343h0M324 344v1M409.5 344l1-1M565.5 347v1M603.5 348h1M627.5 350l1-1M644 351l1-1M555 352v1M590.5 352h0M529.5 353h1M608.5 353h0M631.5 354l1 1M566 355l1-1M612.5 356h0M616.5 360h0M622 360h0M611.5 365l1-1M618.5 365l1-1M598.5 369l1-1"/><path stroke="#c8f0dc" d="M464 306v1M452 313l1-1M311 315l1-1M297.5 317l-1 2M272.5 319v1M398 321l1 2M334.5 323l-1 2M438.5 325l1 2M393.5 326l1 2M442.5 328l-1 2M542.5 328l1-1M319.5 329l1 2M411 331l1-1M487.5 332v2M422.5 334v2M330.5 335v1M365.5 335l1-1M471.5 336v2M478.5 340h1M554.5 342l1 1M358 345v1M249.5 348v1M254.5 349h1M575 349v1M556.5 350v1M284 351h1M435.5 351l1 1M585.5 351v1M560 358h1M581 366l1 1M627 376h1M646 386h1"/><path stroke="#142878" d="M285.5 554h1M550.5 558h1M371.5 561h1M396.5 565v1M533.5 565v1M357.5 566h1M319.5 569l1-1M579 570v1M459.5 572v1M468.5 575h1M531.5 575h1M559 576h0M429.5 577h0M495 577v1M377 578h1M507.5 578l1 1M566 580l1-1M541.5 581l1-1M551 582l1-1M554.5 582v1M510.5 584v1M503.5 588v1M569 589h0M485.5 590l1 1M494.5 590l1 1M601 590h1M551.5 591l1-1M569.5 592h1M546 593l1 1M576.5 594l1 1M574 596l1 1M571.5 598v1"/><path stroke="#78b4f0" d="M522 468l1-1M527.5 470h0M322 478h1M364 478h0M202.5 482h1M274.5 482h0M576.5 485h0M261.5 488h1M603 488l1-1M261.5 489l1-1M622 492l1 1M544 494h1M563 494l1-1M548.5 495l1 1M586.5 495l1-1M343.5 496v1M542.5 497v1M614.5 497h1M304.5 500v1M578.5 500l1 1M600.5 500h1M591.5 501v1M603 501h1M348.5 502h1M555 503l1-1M336.5 508l1 1M569.5 508l1-1M615.5 508v1M358.5 513l1 1M599.5 514v1M568.5 522v1"/><path stroke="#64a0f0" d="M359.5 485h0M248.5 489h1M326.5 494l1-1M471.5 497h1M537.5 499h0M309 500l1-1M238.5 505v1M316.5 505v1M410.5 505h1M570.5 505h1M348.5 507h0M531.5 507l1 1M200.5 509h0M439.5 509v1M260 515l1 1M562.5 528h1M620.5 528l1 1M641.5 538h0"/><path stroke="#78c8f0" d="M572.5 473h1M611.5 478h0M609 486h0M587 487l1-1M596 487l1-1M596 492h1M597 498h1M598.5 500h1M630.5 504h1M632 508l1-1M620.5 513h1M631.5 515l1-1M626.5 527l1 1"/><path stroke="#28288c" d="M366 498v1M232.5 500l1 1M226.5 506h0M230.5 507h1M345.5 508h1M398.5 514l1-1M569.5 516l1 1M316.5 521l1 1M591.5 523h1M608 523v1"/><path stroke="#28508c" d="M599.5 480v1M602 480l1-1M639.5 499l1-1M598.5 503h1M606.5 504h0M636.5 516h1M624.5 520l1-1"/><path stroke="#78f0c8" d="M461.5 343v1M325.5 363h1M367.5 368h1M542 370h1M449.5 375h0M632.5 382h0"/><path stroke="#78dcf0" d="M621 476v1M617 488l1 1M607.5 492h1M614 505h1M641.5 507l1-1"/><path stroke="#28648c" d="M630 484h1M618.5 490h1M619 506h1M625.5 507h0"/><path stroke="#78f0f0" d="M645.5 480h0M632 487l1 1"/><path stroke="#286478" d="M637.5 491h1"/></g></svg>
<svg style="left:24px;top:116px" width="824" height="552" viewBox="24 116 824 552">
<g stroke="#d83040" fill="none" stroke-width="1"><path d="M422.5 383V481" stroke-width=".7" stroke="#c03040"/><path d="M421 381l5 2.5-5 2.5z" fill="#d83040" stroke="none"/><path d="M417 481h10v5h-10z" fill="#e03040" stroke="none"/><ellipse cx="425" cy="507" rx="24" ry="25" opacity=".75"/><ellipse cx="427" cy="507" rx="18" ry="22" opacity=".7"/><ellipse cx="431" cy="508" rx="11" ry="19" opacity=".7"/><path d="M449 512L538 522" opacity=".85"/><path d="M390 518l12 6" stroke="#801030" stroke-width="3" opacity=".7"/></g>
<path d="M36 653L39 640" stroke="#40d040" stroke-width="2"/><path d="M36 653H50" stroke="#b04050" stroke-width="1"/><path d="M49 650l3 5M52 650l-3 5" stroke="#c03040"/><path d="M34 651h4v4h-4z" fill="#2030c0"/>
<path d="M112 543v10l2.5-2.5 2 4 1.5-.8-2-4h3.5z" fill="#111" stroke="#ddd" stroke-width=".5"/>
</svg>
<div class="a" style="left:757px;top:120px;width:35px;height:11px;border:1px solid #dcec50;color:#d8e840;font-size:8px;line-height:9px;padding-left:2px;background:rgba(90,90,50,.18)">persp1 ▾</div>
<div class="a" style="left:795px;top:120px;width:38px;height:11px;border:1px solid #dcec50;color:#d8e840;font-size:8px;line-height:9px;padding-left:2px;background:rgba(90,90,50,.18)">no cam ▾</div>
<div class="a" style="left:760px;top:623px;width:86px;text-align:right;color:#fafafa;font-size:14.5px;font-weight:bold;line-height:18px;letter-spacing:.3px">7.4fps</div>
<div class="a" style="left:770px;top:642px;width:75px;text-align:right;color:#dcdcdc;font-size:8px;line-height:9px">134 (4ms)</div>
<div class="a" style="left:700px;top:653px;width:133px;text-align:right;color:#e0e020;font-size:8.3px;line-height:10px">Non-Commercial Edition</div>
<svg style="left:822px;top:93px" width="44" height="23" viewBox="822 93 44 23"><circle cx="829" cy="101" r="2.2" fill="#3a6ad0"/><path d="M825 105h8" stroke="#ddd" stroke-width="1.4"/><path d="M836 97v5M833 104h7" stroke="#ddd" stroke-width="1.4"/><circle cx="836" cy="97" r="1.8" fill="#3a6ad0"/><path d="M832 112h7M835 107v4" stroke="#ddd" stroke-width="1.4"/><circle cx="854" cy="103" r="6.5" fill="#3060b0"/><circle cx="854" cy="103" r="5" fill="#4a80d0"/><text x="851" y="107" font-size="9" font-weight="bold" fill="#fff" font-family="Liberation Sans">?</text></svg>
<!-- left toolbar -->
<div class="a" style="left:6px;top:116px;width:18px;height:552px;background:#3b3b3b"></div>
<div class="a" style="left:0;top:93px;width:6px;height:575px;background:#2a2a2a"></div>
<svg style="left:4px;top:116px" width="20" height="552" viewBox="6 116 20 552"><rect x="6" y="116" width="4" height="10" fill="#555"/><rect x="7" y="126" width="15" height="15" fill="#555" stroke="#2a2a2a" stroke-width=".6"/><path d="M10 138l4.5-8 4.5 8z" fill="#e8e050"/><rect x="7" y="143" width="15" height="15" fill="#555" stroke="#2a2a2a" stroke-width=".6"/><path d="M14.5 146l4 5-4 5-4-5z" fill="#e0e0a0"/><rect x="7" y="159" width="15" height="15" fill="#c8a048" stroke="#2a2a2a" stroke-width=".6"/><path d="M14.5 162l4.5 5-4.5 5-4.5-5z" fill="#f0e060"/><path d="M14.5 164.5l2.5 2.5-2.5 2.5-2.5-2.5z" fill="#c8a048"/><path d="M11 186v12l3-3 2 4 2-1-2-4h4z" fill="#f0f0f0"/><path d="M21 201l2 2h-2z" fill="#111"/><circle cx="15" cy="211" r="3" fill="#8a8a8a"/><circle cx="11" cy="216" r="2.4" fill="#b02020"/><circle cx="19" cy="216" r="2.4" fill="#b02020"/><circle cx="15" cy="219" r="2.4" fill="#b02020"/><circle cx="15" cy="234" r="3" fill="#aaa"/><circle cx="11" cy="239" r="2.4" fill="#b02020"/><circle cx="19" cy="239" r="2.4" fill="#b02020"/><circle cx="15" cy="242" r="2.4" fill="#b02020"/><circle cx="15" cy="257" r="3" fill="#777"/><circle cx="11" cy="262" r="2.4" fill="#b02020"/><circle cx="19" cy="262" r="2.4" fill="#b02020"/><circle cx="15" cy="265" r="2.4" fill="#b02020"/><rect x="7" y="272" width="16" height="18" fill="#c8a048"/><path d="M10 287l5-9 5 9" stroke="#c03030" fill="none"/><path d="M15 278v-3" stroke="#555"/><path d="M8 307 c0-6 9-8 12-3l-3 3c-2-2-5-1-5 2z" fill="#d01818"/><path d="M8 307 l2 4 3-1-1-3z" fill="#e8e8e8"/><path d="M17 309 l3-2 2 3-3 2z" fill="#e8e8e8"/><path d="M13 312l6 3" stroke="#50703a" stroke-width="2"/><path d="M21 314l2 2h-2z" fill="#111"/><path d="M8 330 c0-6 9-8 12-3l-3 3c-2-2-5-1-5 2z" fill="#d01818"/><path d="M8 330 l2 4 3-1-1-3z" fill="#e8e8e8"/><path d="M17 332 l3-2 2 3-3 2z" fill="#e8e8e8"/><path d="M9 336c4 2 8 1 12-2" stroke="#3050c0" stroke-width="1.5" fill="none"/><path d="M21 337l2 2h-2z" fill="#111"/><path d="M8 353 c0-6 9-8 12-3l-3 3c-2-2-5-1-5 2z" fill="#d01818"/><path d="M8 353 l2 4 3-1-1-3z" fill="#e8e8e8"/><path d="M17 355 l3-2 2 3-3 2z" fill="#e8e8e8"/><circle cx="16" cy="359" r="3" fill="#e8e8e8"/><path d="M21 360l2 2h-2z" fill="#111"/><path d="M8 376 c0-6 9-8 12-3l-3 3c-2-2-5-1-5 2z" fill="#d01818"/><path d="M8 376 l2 4 3-1-1-3z" fill="#e8e8e8"/><path d="M17 378 l3-2 2 3-3 2z" fill="#e8e8e8"/><path d="M21 383l2 2h-2z" fill="#111"/><circle cx="13" cy="400" r="3" fill="#222"/><circle cx="17" cy="403" r="2" fill="#222"/><circle cx="11" cy="405" r="2" fill="#222"/><circle cx="14" cy="423" r="6" fill="#888"/><rect x="12" y="421" width="9" height="7" fill="#e05a20"/><ellipse cx="14" cy="449" rx="7" ry="3.5" fill="#eee"/><ellipse cx="14" cy="444" rx="5" ry="4" fill="#333"/><path d="M8 632l8-4 5 4-8 5z" fill="#ddd"/><path d="M9 636l8 2" stroke="#c03030"/><circle cx="13" cy="655" r="5.5" fill="#ccc"/><circle cx="13" cy="655" r="2" fill="#444"/></svg>
<!-- right toolbar -->
<div class="a" style="left:848px;top:116px;width:18px;height:552px;background:#3b3b3b"></div>
<svg style="left:848px;top:116px" width="18" height="552" viewBox="848 116 18 552"><rect x="849" y="117" width="16" height="9" fill="#2a2a2a"/><circle cx="862" cy="121" r="2" fill="#000"/><path d="M853 131h8" stroke="#777" stroke-width="1.5"/><circle cx="857" cy="148" r="3.5" fill="#ddd"/><path d="M855 147l4-3 2 4z" fill="#333"/><circle cx="857" cy="166" r="3.5" fill="#f4f4f4"/><circle cx="857" cy="181" r="2.5" fill="#ddd"/><rect x="854" y="184" width="7" height="4" fill="#e8e060"/><path d="M853 194l4 4 4-4" stroke="#e0e060" stroke-width="1.5" fill="none"/><circle cx="857" cy="200" r="3" fill="#ddd"/><path d="M853 210l4 4 4-4" stroke="#e0e060" stroke-width="1.5" fill="none"/><circle cx="857" cy="216" r="3" fill="#ddd"/><rect x="849" y="222" width="16" height="17" fill="#c8a048"/><circle cx="857" cy="230.5" r="4.5" fill="#dde"/><circle cx="857" cy="230.5" r="2.5" fill="#7a9ac8"/><path d="M853 250h8M855 254h6" stroke="#ccc" stroke-width="1"/><circle cx="857" cy="272" r="1.5" fill="#4a6ad0"/><path d="M853 294l6-6" stroke="#4a8ae0" stroke-width="1.5"/><path d="M853 311l7-8" stroke="#ddd" stroke-width="1.2"/><path d="M855 320h4v5h-4z" fill="none" stroke="#ccc" stroke-width=".8"/><path d="M853 343l5-5 3 3-5 4z" fill="#ddd"/><path d="M853 344h8" stroke="#4a7ac0"/><path d="M854 358c0-4 6-4 6 0v3h-6z" fill="#ddd"/><path d="M857 386v8M853 390h8M854 387l6 6M860 387l-6 6" stroke="#ddd" stroke-width="1.3"/><path d="M854 410l3-3 3 3" stroke="#c03030" stroke-width="1.3" fill="none"/><path d="M855 407l3 2" stroke="#3a9a3a"/><rect x="853" y="421" width="8" height="8" fill="#aaa"/><path d="M853 437h8v4h-4l-3 3z" fill="#eee"/><rect x="852" y="454" width="10" height="9" fill="#dde"/><rect x="853" y="456" width="8" height="4" fill="#3a6ac0"/><rect x="849" y="476" width="16" height="16" fill="#c8a048"/><path d="M857 479v10M852 484h10" stroke="#fff" stroke-width="2"/><rect x="851" y="496" width="12" height="12" fill="#eee"/><path d="M854 499l3 4 3-4z" fill="#111"/></svg>
<!-- divider -->
<div class="a" style="left:866px;top:56px;width:6px;height:612px;background:#3a3a3a"></div>
<div class="a" style="left:867px;top:93px;width:1px;height:575px;background:#262626"></div>
<div class="a" style="left:850px;top:116px;width:1px;height:552px;background:#333"></div>
<!-- right pane -->
<div class="a" style="left:872px;top:93px;width:408px;height:265px;background:#3a3a3a"></div>
<div class="a" style="left:872px;top:93px;width:408px;height:23px;background:#3a3a3a"></div>
<div class="a" style="left:895px;top:98px;font-size:8.5px;font-weight:bold;color:#e4e4e4;line-height:13px;letter-spacing:.1px;white-space:nowrap">Velocity Impulse Force</div>
<div class="a mono" style="left:993px;top:97px;width:200px;height:15px;background:#0e0e0e;color:#e8e8e8;font-size:7.8px;line-height:16px;padding-left:3px">velimpulseforce1</div>
<svg style="left:1195px;top:95px" width="85" height="20" viewBox="1195 95 85 20"><circle cx="1203" cy="104" r="5" fill="none" stroke="#e0e0e0" stroke-width="2.6" stroke-dasharray="1.6 1.2"/><circle cx="1203" cy="104" r="4" fill="#e0e0e0"/><circle cx="1203" cy="104" r="2" fill="#333"/><text x="1218" y="110.5" font-size="14" font-weight="bold" font-style="italic" fill="#101018" stroke="#e8e8f0" stroke-width="1.2" paint-order="stroke" font-family="Liberation Sans">H</text><circle cx="1246" cy="104" r="6" fill="#2a5ab8"/><circle cx="1246" cy="103.5" r="4.6" fill="#4a86d8"/><text x="1244" y="108" font-size="9" font-weight="bold" font-style="italic" fill="#fff" font-family="Liberation Serif">i</text><circle cx="1267" cy="104" r="6" fill="#2a5ab8"/><circle cx="1267" cy="103.5" r="4.6" fill="#4a86d8"/><text x="1264" y="108" font-size="9" font-weight="bold" fill="#fff" font-family="Liberation Sans">?</text><path d="M1209 112l2 2 2-2zM1228 112l2 2 2-2z" fill="#111"/></svg>
<div class="a" style="left:892px;top:114px;width:0;height:0;border-left:2.5px solid transparent;border-right:2.5px solid transparent;border-top:3px solid #111"></div>
<div class="a" style="left:872px;top:116px;width:408px;height:1px;background:#2e2e2e"></div>
<div class="btn" style="left:875px;top:119px;width:70px"><b>Set Always</b></div><div class="a" style="left:930px;top:120px;width:1px;height:12px;background:#3a3a3a"></div><svg style="left:934px;top:120px" width="6" height="12" viewBox="0 0 6 12"><path d="M0.5 5L3 1.5 5.5 5zM0.5 7L3 10.5 5.5 7z" fill="#111"/></svg>
<div class="lab" style="left:940px;top:119px;width:89px">Velocity Change</div>
<div class="fld" style="left:1038px;top:119px;width:79px">0</div>
<div class="fld teal" style="left:1120px;top:119px;width:77px">8</div>
<div class="fld" style="left:1199px;top:119px;width:79px">0</div>
<div class="btn" style="left:875px;top:137px;width:70px">Use Default</div><div class="a" style="left:930px;top:138px;width:1px;height:12px;background:#3a3a3a"></div><svg style="left:934px;top:138px" width="6" height="12" viewBox="0 0 6 12"><path d="M0.5 5L3 1.5 5.5 5zM0.5 7L3 10.5 5.5 7z" fill="#111"/></svg>
<div class="lab" style="left:940px;top:137px;width:89px">Sampling Mode</div>
<div class="btn" style="left:1038px;top:137px;width:59px">Default</div><div class="a" style="left:1083px;top:138px;width:1px;height:12px;background:#3a3a3a"></div><svg style="left:1087px;top:138px" width="6" height="12" viewBox="0 0 6 12"><path d="M0.5 5L3 1.5 5.5 5zM0.5 7L3 10.5 5.5 7z" fill="#111"/></svg>
<div class="lab" style="left:860px;top:154px;width:95px">Default Operation</div>
<div class="btn" style="left:965px;top:154px;width:73px">Set Initial</div><div class="a" style="left:1024px;top:155px;width:1px;height:12px;background:#3a3a3a"></div><svg style="left:1028px;top:155px" width="6" height="12" viewBox="0 0 6 12"><path d="M0.5 5L3 1.5 5.5 5zM0.5 7L3 10.5 5.5 7z" fill="#111"/></svg>
<div class="lab" style="left:860px;top:172px;width:95px">Data Sharing</div>
<div class="btn" style="left:965px;top:172px;width:137px">Do Not Share Data</div><div class="a" style="left:1088px;top:173px;width:1px;height:12px;background:#3a3a3a"></div><svg style="left:1092px;top:173px" width="6" height="12" viewBox="0 0 6 12"><path d="M0.5 5L3 1.5 5.5 5zM0.5 7L3 10.5 5.5 7z" fill="#111"/></svg>
<div class="lab" style="left:860px;top:189px;width:95px">Activation</div>
<div class="fld teal" style="left:965px;top:189px;width:59px">1</div>
<div class="a" style="left:1028px;top:194px;width:233px;height:5px;background:#1a1a1a;border:1px solid #555"></div>
<div class="a" style="left:1049px;top:190px;width:5px;height:12px;background:#4a4a4a;border:1px solid #222"></div>
<div class="a" style="left:1262px;top:189px;width:14px;height:14px;background:#4e4e4e;border:1px solid #2a2a2a"></div>
<div class="a" style="left:1266px;top:195px;width:0;height:0;border-left:3px solid transparent;border-right:3px solid transparent;border-top:3px solid #111"></div>
<div class="lab" style="left:860px;top:205px;width:95px">Group</div>
<div class="fld mono" style="left:965px;top:205px;width:297px">*</div>
<div class="a" style="left:1262px;top:205px;width:14px;height:14px;background:#4e4e4e;border:1px solid #2a2a2a"></div>
<div class="a" style="left:1266px;top:211px;width:0;height:0;border-left:3px solid transparent;border-right:3px solid transparent;border-top:3px solid #111"></div>
<div class="lab" style="left:860px;top:222px;width:95px">Data Name</div>
<div class="fld mono" style="left:965px;top:222px;width:313px">Forces/VelImpulse</div>
<svg style="left:965px;top:238px" width="10" height="10" viewBox="0 0 10 10"><rect width="10" height="10" fill="#111"/><path d="M2 5l2 3 4-7" stroke="#f0f0f0" stroke-width="1.6" fill="none"/></svg>
<div class="a" style="left:978px;top:237px;font-size:8px;color:#d0d0d0;line-height:12px">Unique Data Name</div>
<div class="a" style="left:874px;top:252px;width:394px;height:106px;background:#353535;border:1px solid #2c2c2c"></div>
<div class="a" style="left:874px;top:252px;width:385px;height:11px;background:#444;border-bottom:1px solid #2a2a2a"></div>
<div class="a" style="left:874px;top:252px;width:10px;height:11px;background:#3a3a3a;border-right:1px solid #2a2a2a"></div>
<div class="a" style="left:887px;top:252px;font-size:8px;color:#d0d0d0;line-height:11px;white-space:nowrap">Input Operators (Drag/Drop to reorder)</div>
<div class="a" style="left:1256px;top:252px;width:12px;height:11px;background:#3e3e3e;border:1px solid #2a2a2a"></div>
<div class="a" style="left:874px;top:263px;width:394px;height:11px;background:#3e3e3e;border-bottom:1px solid #2e2e2e"></div>
<div class="a" style="left:875px;top:264px;width:9px;height:9px;background:#222"><div class="a" style="left:2px;top:2px;width:5px;height:5px;background:#ddd"></div></div>
<div class="a" style="left:887px;top:263px;font-size:8px;color:#d0d0d0;line-height:11px">fliptank</div>
<div class="a" style="left:1257px;top:264px;width:10px;height:9px;background:#555;border:1px solid #777"></div>
<div class="a" style="left:1268px;top:252px;width:10px;height:106px;background:#3a3a3a;border-left:1px solid #2a2a2a"></div>
<svg style="left:872px;top:400px" width="408" height="24" viewBox="872 400 408 24"><rect x="873" y="402" width="6" height="20" fill="#4a4a4a"/><path d="M874 406l2-3 2 3z" fill="#111"/><rect x="885" y="407" width="8" height="10" fill="#555"/><rect x="900" y="406" width="10" height="12" fill="#eee"/><rect x="915" y="406" width="11" height="12" fill="#bbb"/><rect x="919" y="411" width="4" height="7" fill="#333"/><rect x="931" y="406" width="11" height="11" fill="#e0e0e0"/><rect x="932" y="407" width="3" height="3" fill="#e04040"/><rect x="936" y="407" width="3" height="3" fill="#40a040"/><rect x="932" y="411" width="3" height="3" fill="#4060e0"/><rect x="936" y="411" width="3" height="3" fill="#e0c040"/><rect x="954" y="407" width="10" height="10" fill="#ccc"/><path d="M956 415l6-6" stroke="#333" stroke-width="1.5"/><rect x="969" y="406" width="11" height="11" fill="#e8e040"/><path d="M971 409h6M971 412h4" stroke="#333"/><rect x="985" y="407" width="11" height="9" rx="2" fill="#f09020"/><path d="M986 411h9" stroke="#fff" stroke-width=".8"/><path d="M1149 407v2M1149 413v2" stroke="#eee" stroke-width="1.5"/><path d="M1163 411h3M1169 411h3" stroke="#eee" stroke-width="1.5"/><path d="M1178 407h3v10M1184 414h2" stroke="#eee" stroke-width="1.5"/><path d="M1181 410h3v5" stroke="#5a8ad0" stroke-width="1.2" fill="none"/><path d="M1194 407h3M1200 415h2" stroke="#eee" stroke-width="1.5"/><path d="M1211 408h10M1211 411h10M1211 414h10M1213 406v10M1216 406v10M1219 406v10" stroke="#5a7ac0" stroke-width=".8"/><path d="M1216 411h4" stroke="#eee"/><path d="M1227 408h11M1227 411h11M1227 414h11M1229 406v10M1232 406v10M1235 406v10" stroke="#5a7ac0" stroke-width=".9"/><circle cx="1252" cy="410" r="4" fill="#3a70c0" stroke="#9ac" stroke-width="1"/><path d="M1255 413l3 3" stroke="#ccc" stroke-width="1.5"/><rect x="1263" y="405" width="11" height="12" fill="#eee"/><path d="M1265 411l3-3 3 3h-2v3h-2v-3z" fill="#111"/></svg>
<svg style="left:872px;top:424px" width="408" height="244" viewBox="872 424 408 244"><text x="1222" y="438" font-size="11" font-weight="bold" fill="#464648" font-family="Liberation Sans">Dynamics</text><text x="1143" y="665" font-size="11.5" font-weight="bold" fill="#454547" font-family="Liberation Sans">Non-Commercial Edition</text><g fill="none" stroke-width="1.3"><path d="M1073 451C1073 465 1048 462 1048 476" stroke="#857a5a"/><path d="M1071 505C1071 518 1048 517 1048 530" stroke="#857a5a"/><path d="M1073 555V583" stroke="#8a8a8a"/><path d="M1073 607C1073 622 1048 620 1048 634" stroke="#8a8a8a"/></g><rect x="1042" y="431" width="62" height="16" fill="#cfcfcf"/><rect x="1057" y="432" width="40" height="14" fill="#dcdcdc"/><path d="M1050 431v16" stroke="#666" stroke-width="1"/><path d="M1057 431v16" stroke="#666" stroke-width="1"/><path d="M1098 431v16" stroke="#666" stroke-width="1"/><rect x="1067" y="448" width="14" height="3" fill="#b8b8b8"/><path d="M1073 435c-3 4-4 6-4 8a4 4 0 0 0 8 0c0-2-1-4-4-8z" fill="#3a80d0"/><text x="1107" y="442" font-size="8" fill="#48a4d4" font-family="Liberation Sans">fliptank</text><path d="M1037 476h19v6h14v-6h17v6h17v19h-26v4h-17v-4h-24z" fill="#d4a820"/><rect x="1040" y="483" width="61" height="16" fill="#cfcfcf"/><rect x="1055" y="484" width="39" height="14" fill="#dcdcdc"/><path d="M1048 483v16" stroke="#666" stroke-width="1"/><path d="M1055 483v16" stroke="#666" stroke-width="1"/><path d="M1095 483v16" stroke="#666" stroke-width="1"/><rect x="1039" y="478" width="15" height="4" fill="#bbb"/><rect x="1072" y="478" width="13" height="4" fill="#50c050"/><rect x="1064" y="500" width="13" height="3" fill="#b8b8b8"/><text x="1105" y="494" font-size="8" fill="#e8e8e8" font-family="Liberation Sans">velimpulseforce1</text><rect x="1042" y="530" width="14" height="3" fill="#b8b8b8"/><rect x="1059" y="530" width="14" height="3" fill="#50c050"/><rect x="1075" y="530" width="14" height="3" fill="#50c050"/><rect x="1091" y="530" width="14" height="3" fill="#50c050"/><rect x="1042" y="535" width="62" height="16" fill="#cfcfcf"/><rect x="1057" y="536" width="40" height="14" fill="#dcdcdc"/><path d="M1050 535v16" stroke="#666" stroke-width="1"/><path d="M1057 535v16" stroke="#666" stroke-width="1"/><path d="M1098 535v16" stroke="#666" stroke-width="1"/><rect x="1067" y="552" width="14" height="3" fill="#b8b8b8"/><circle cx="1078" cy="543" r="5" fill="#6a9ae0"/><circle cx="1078" cy="543" r="3" fill="#cde" /><text x="1107" y="545" font-size="8" fill="#48a4d4" font-family="Liberation Sans">flipsolver1</text><rect x="1067" y="583" width="14" height="3" fill="#b8b8b8"/><rect x="1042" y="586" width="62" height="16" fill="#cfcfcf"/><rect x="1057" y="587" width="40" height="14" fill="#dcdcdc"/><path d="M1050 586v16" stroke="#666" stroke-width="1"/><path d="M1057 586v16" stroke="#666" stroke-width="1"/><path d="M1098 586v16" stroke="#666" stroke-width="1"/><rect x="1067" y="604" width="14" height="3" fill="#b8b8b8"/><path d="M1072 589h8l-3 4v6h-2v-6z" fill="#f0f0f0"/><text x="1107" y="597" font-size="8" fill="#e8e8e8" font-family="Liberation Sans">merge1</text><rect x="1042" y="634" width="14" height="3" fill="#b8b8b8"/><rect x="1074" y="634" width="14" height="3" fill="#50c050"/><rect x="1042" y="638" width="62" height="16" fill="#cfcfcf"/><rect x="1057" y="639" width="40" height="14" fill="#dcdcdc"/><path d="M1050 638v16" stroke="#666" stroke-width="1"/><path d="M1057 638v16" stroke="#666" stroke-width="1"/><path d="M1098 638v16" stroke="#666" stroke-width="1"/><rect x="1097" y="638" width="7" height="16" fill="#1a5ad8"/><rect x="1067" y="655" width="14" height="3" fill="#b8b8b8"/><path d="M1076 643c3-2 5 0 5 3s-2 5-4 5-3-3-3-5 1-3 2-3z" fill="#d02020"/><circle cx="1075" cy="643" r="1.5" fill="#50c050"/><text x="1107" y="649" font-size="8" fill="#e8e8e8" font-family="Liberation Sans">gravity1</text></svg>
<!-- timeline -->
<div class="a" style="left:0;top:668px;width:1280px;height:30px;background:#2e2e2e"></div>
<div class="a" style="left:0;top:698px;width:1280px;height:22px;background:#0b0b0b"></div>
<div class="a" style="left:0;top:668px;width:6px;height:30px;background:#3a3a3a"></div>
<div class="a" style="left:1px;top:692px;width:0;height:0;border-left:2.5px solid transparent;border-right:2.5px solid transparent;border-top:3px solid #000"></div>
<svg style="left:0;top:668px" width="1280" height="30" viewBox="0 668 1280 30"><rect x="10" y="673" width="113" height="21" fill="#262626"/><rect x="13" y="675" width="17" height="17" fill="#555"/><rect x="31" y="675" width="17" height="17" fill="#555"/><rect x="49" y="675" width="17" height="17" fill="#555"/><rect x="67" y="675" width="17" height="17" fill="#555"/><rect x="85" y="675" width="18" height="17" fill="#c8a048"/><rect x="104" y="675" width="16" height="17" fill="#555"/><path d="M16 679h2v9h-2zM19 683.5l4-4.5v9zM24 683.5l4-4.5v9z" fill="#eee"/><rect x="36" y="679" width="2" height="9" fill="#40c040"/><path d="M39 683.5l4-4.5v9z" fill="#eee"/><path d="M54 683.5l6-5v10z" fill="#eee"/><rect x="71" y="679" width="9" height="9" fill="#eee"/><path d="M90 678.5l7 5-7 5z" fill="#fff"/><path d="M108 679l5 4.5-5 4.5z" fill="#eee"/><rect x="114" y="679" width="2" height="9" fill="#40c040"/><rect x="126" y="676" width="36" height="16" fill="#141414"/><text x="130" y="687" font-size="8" fill="#e0e0e0" font-family="Liberation Sans">29</text><rect x="162" y="676" width="11" height="16" fill="#505050"/><rect x="174" y="676" width="10" height="16" fill="#505050"/><circle cx="179" cy="683" r="2.5" fill="none" stroke="#ccc"/><rect x="190" y="676" width="28" height="16" fill="#141414"/><text x="194" y="687" font-size="8" fill="#e0e0e0" font-family="Liberation Sans">1</text><rect x="221" y="670" width="940" height="20" fill="#1f1f1f" stroke="#5a5a5a" stroke-width=".6"/><rect x="221" y="690" width="940" height="7" fill="#3a3a3a"/><rect x="222" y="691" width="12" height="4" fill="#4e4e4e" stroke="#666" stroke-width=".5"/><path d="M222 681H1160" stroke="#888" stroke-width="1"/><path d="M226.0 677v9M231.2 679v5M236.4 679v5M241.6 679v5M246.8 679v5M252.1 679v5M257.3 679v5M262.5 679v5M267.7 679v5M272.9 679v5M278.1 679v5M283.3 679v5M288.5 679v5M293.7 679v5M298.9 679v5M304.1 679v5M309.4 679v5M314.6 679v5M319.8 679v5M325.0 679v5M330.2 679v5M335.4 679v5M340.6 679v5M345.8 677v9M351.0 679v5M356.2 679v5M361.5 679v5M366.7 679v5M371.9 679v5M377.1 679v5M382.3 679v5M387.5 679v5M392.7 679v5M397.9 679v5M403.1 679v5M408.4 679v5M413.6 679v5M418.8 679v5M424.0 679v5M429.2 679v5M434.4 679v5M439.6 679v5M444.8 679v5M450.0 679v5M455.2 679v5M460.4 679v5M465.7 679v5M470.9 677v9M476.1 679v5M481.3 679v5M486.5 679v5M491.7 679v5M496.9 679v5M502.1 679v5M507.3 679v5M512.5 679v5M517.8 679v5M523.0 679v5M528.2 679v5M533.4 679v5M538.6 679v5M543.8 679v5M549.0 679v5M554.2 679v5M559.4 679v5M564.6 679v5M569.9 679v5M575.1 679v5M580.3 679v5M585.5 679v5M590.7 679v5M595.9 677v9M601.1 679v5M606.3 679v5M611.5 679v5M616.8 679v5M622.0 679v5M627.2 679v5M632.4 679v5M637.6 679v5M642.8 679v5M648.0 679v5M653.2 679v5M658.4 679v5M663.6 679v5M668.9 679v5M674.1 679v5M679.3 679v5M684.5 679v5M689.7 679v5M694.9 679v5M700.1 679v5M705.3 679v5M710.5 679v5M715.7 679v5M721.0 677v9M726.2 679v5M731.4 679v5M736.6 679v5M741.8 679v5M747.0 679v5M752.2 679v5M757.4 679v5M762.6 679v5M767.8 679v5M773.0 679v5M778.3 679v5M783.5 679v5M788.7 679v5M793.9 679v5M799.1 679v5M804.3 679v5M809.5 679v5M814.7 679v5M819.9 679v5M825.1 679v5M830.4 679v5M835.6 679v5M840.8 679v5M846.0 677v9M851.2 679v5M856.4 679v5M861.6 679v5M866.8 679v5M872.0 679v5M877.2 679v5M882.5 679v5M887.7 679v5M892.9 679v5M898.1 679v5M903.3 679v5M908.5 679v5M913.7 679v5M918.9 679v5M924.1 679v5M929.4 679v5M934.6 679v5M939.8 679v5M945.0 679v5M950.2 679v5M955.4 679v5M960.6 679v5M965.8 679v5M971.0 677v9M976.2 679v5M981.5 679v5M986.7 679v5M991.9 679v5M997.1 679v5M1002.3 679v5M1007.5 679v5M1012.7 679v5M1017.9 679v5M1023.1 679v5M1028.3 679v5M1033.5 679v5M1038.8 679v5M1044.0 679v5M1049.2 679v5M1054.4 679v5M1059.6 679v5M1064.8 679v5M1070.0 679v5M1075.2 679v5M1080.4 679v5M1085.7 679v5M1090.9 679v5M1096.1 677v9M1101.3 679v5M1106.5 679v5M1111.7 679v5M1116.9 679v5M1122.1 679v5M1127.3 679v5M1132.5 679v5M1137.8 679v5M1143.0 679v5M1148.2 679v5M1153.4 679v5M1158.6 679v5" stroke="#bdbdbd" stroke-width=".8"/><text x="342.8" y="677" font-size="7" fill="#d0d0d0" font-family="Liberation Sans">24</text><text x="467.9" y="677" font-size="7" fill="#d0d0d0" font-family="Liberation Sans">48</text><text x="592.9" y="677" font-size="7" fill="#d0d0d0" font-family="Liberation Sans">72</text><text x="718.0" y="677" font-size="7" fill="#d0d0d0" font-family="Liberation Sans">96</text><text x="843.0" y="677" font-size="7" fill="#d0d0d0" font-family="Liberation Sans">120</text><text x="968.0" y="677" font-size="7" fill="#d0d0d0" font-family="Liberation Sans">144</text><text x="1093.1" y="677" font-size="7" fill="#d0d0d0" font-family="Liberation Sans">168</text><text x="223" y="677" font-size="7" fill="#d0d0d0" font-family="Liberation Sans">1</text><rect x="360.9" y="671" width="16" height="13" fill="#0a0a0a" stroke="#e8e8e8" stroke-width="1"/><text x="363.9" y="681" font-size="8" fill="#f0f0f0" font-family="Liberation Sans">29</text><path d="M368.9 684v6" stroke="#111" stroke-width="1.5"/><rect x="1163" y="677" width="27" height="15" fill="#141414"/><text x="1166" y="688" font-size="8" fill="#e0e0e0" font-family="Liberation Sans">180</text><rect x="1197" y="676" width="16" height="16" fill="#4e4e4e"/><path d="M1200 688h9v-4h-3l-2-3h-2z" fill="#eee"/><rect x="1217" y="676" width="14" height="16" fill="#c8a048"/><circle cx="1224" cy="684" r="4" fill="#eee"/><path d="M1224 681v3" stroke="#333"/><rect x="1232" y="676" width="13" height="16" fill="#505050"/><rect x="1234" y="680" width="9" height="8" fill="#ccc"/><rect x="1246" y="676" width="13" height="16" fill="#4e4e4e"/><path d="M1250 680v8l5-4z" fill="#eee"/><rect x="1260" y="676" width="13" height="16" fill="#4e4e4e"/><rect x="1263" y="680" width="7" height="7" fill="#eee"/></svg>
<svg style="left:1110px;top:698px" width="170" height="22" viewBox="1110 698 170 22"><rect x="1117" y="700" width="163" height="16" fill="#3a3a3a"/><circle cx="1125" cy="708" r="5" fill="#c02a3a"/><path d="M1123 706l4 4M1127 706l-4 4" stroke="#f0a0a0" stroke-width=".8"/><ellipse cx="1141" cy="707" rx="6" ry="4" fill="#e0e0e0"/><circle cx="1146" cy="712" r="1" fill="#000"/><rect x="1152" y="702" width="12" height="12" fill="#777" stroke="#bbb" stroke-width=".6"/><rect x="1165" y="700" width="68" height="16" fill="#4a4a4a"/><text x="1173" y="711" font-size="8.5" fill="#e0e0e0" font-family="Liberation Sans">Auto Update</text><path d="M1240 704l2-3 2 3zM1240 712l2 3 2-3z" fill="#111"/><rect x="1249" y="700" width="16" height="16" fill="#c8a048"/><path d="M1252 704h10v9h-10z" fill="#f0f0f0"/></svg>
<div class="a" style="left:0;top:716px;width:1280px;height:4px;background:#0a1414"></div>
<div class="a" style="left:1278px;top:93px;width:2px;height:575px;background:#2c2c2c"></div>
</body></html>
